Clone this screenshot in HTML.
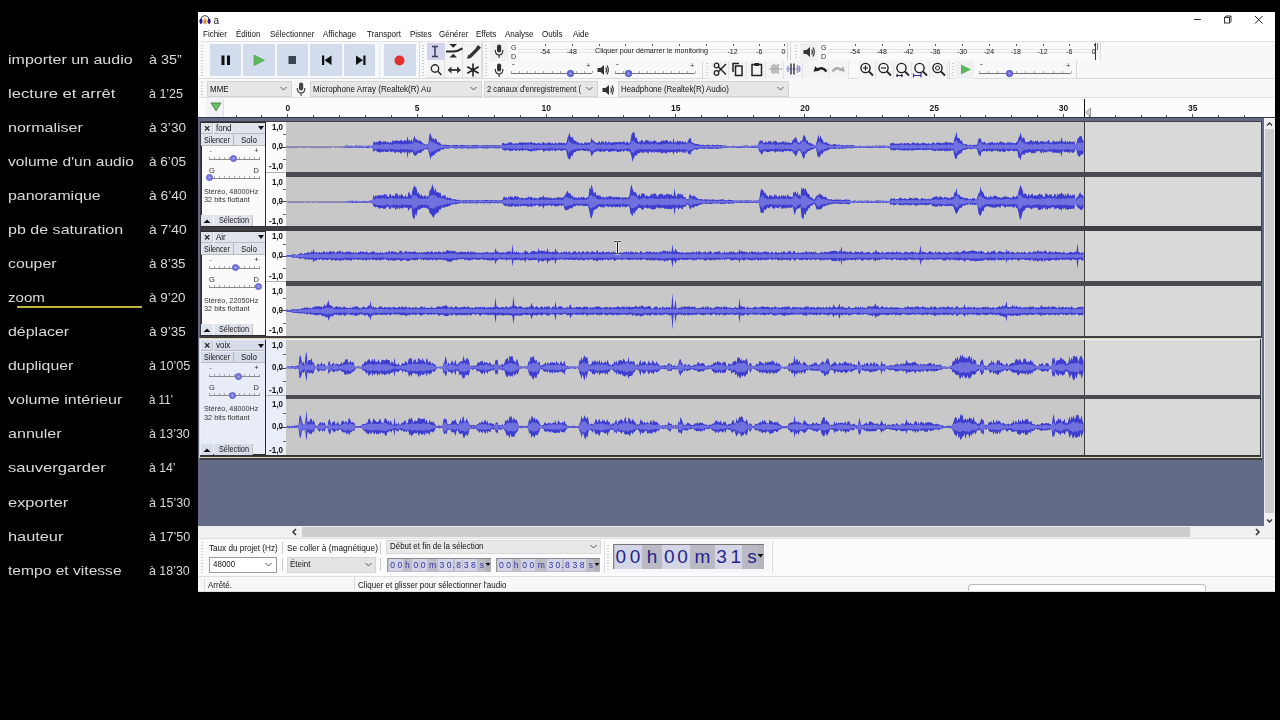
<!DOCTYPE html><html><head><meta charset="utf-8"><style>
*{box-sizing:border-box}
body{margin:0;background:#000;width:1280px;height:720px;overflow:hidden;position:relative;font-family:"Liberation Sans",sans-serif}
div{position:absolute}
.t{white-space:pre}
</style></head><body><div style="left:0;top:0;width:1280px;height:720px;filter:blur(0.35px)">
<div class="t" style="left:8.30px;top:51.64px;font-size:13.2px;line-height:15.18px;color:#dadada;transform:scaleX(1.214);transform-origin:0 0;">importer un audio</div>
<div class="t" style="left:149.20px;top:51.64px;font-size:13.2px;line-height:15.18px;color:#dadada;transform:scaleX(1.090);transform-origin:0 0;">à 35”</div>
<div class="t" style="left:8.30px;top:85.71px;font-size:13.2px;line-height:15.18px;color:#dadada;transform:scaleX(1.262);transform-origin:0 0;">lecture et arrêt</div>
<div class="t" style="left:149.20px;top:85.71px;font-size:13.2px;line-height:15.18px;color:#dadada;transform:scaleX(0.945);transform-origin:0 0;">à 1’25</div>
<div class="t" style="left:8.30px;top:119.78px;font-size:13.2px;line-height:15.18px;color:#dadada;transform:scaleX(1.216);transform-origin:0 0;">normaliser</div>
<div class="t" style="left:149.20px;top:119.78px;font-size:13.2px;line-height:15.18px;color:#dadada;transform:scaleX(1.029);transform-origin:0 0;">à 3’30</div>
<div class="t" style="left:8.30px;top:153.85px;font-size:13.2px;line-height:15.18px;color:#dadada;transform:scaleX(1.180);transform-origin:0 0;">volume d'un audio</div>
<div class="t" style="left:149.20px;top:153.85px;font-size:13.2px;line-height:15.18px;color:#dadada;transform:scaleX(1.029);transform-origin:0 0;">à 6’05</div>
<div class="t" style="left:8.30px;top:187.92px;font-size:13.2px;line-height:15.18px;color:#dadada;transform:scaleX(1.203);transform-origin:0 0;">panoramique</div>
<div class="t" style="left:149.20px;top:187.92px;font-size:13.2px;line-height:15.18px;color:#dadada;transform:scaleX(1.048);transform-origin:0 0;">à 6’40</div>
<div class="t" style="left:8.30px;top:221.99px;font-size:13.2px;line-height:15.18px;color:#dadada;transform:scaleX(1.217);transform-origin:0 0;">pb de saturation</div>
<div class="t" style="left:149.20px;top:221.99px;font-size:13.2px;line-height:15.18px;color:#dadada;transform:scaleX(1.048);transform-origin:0 0;">à 7’40</div>
<div class="t" style="left:8.30px;top:256.06px;font-size:13.2px;line-height:15.18px;color:#dadada;transform:scaleX(1.204);transform-origin:0 0;">couper</div>
<div class="t" style="left:149.20px;top:256.06px;font-size:13.2px;line-height:15.18px;color:#dadada;transform:scaleX(1.018);transform-origin:0 0;">à 8’35</div>
<div class="t" style="left:8.30px;top:290.13px;font-size:13.2px;line-height:15.18px;color:#dadada;transform:scaleX(1.143);transform-origin:0 0;">zoom</div>
<div class="t" style="left:149.20px;top:290.13px;font-size:13.2px;line-height:15.18px;color:#dadada;transform:scaleX(1.018);transform-origin:0 0;">à 9’20</div>
<div class="t" style="left:8.30px;top:324.20px;font-size:13.2px;line-height:15.18px;color:#dadada;transform:scaleX(1.209);transform-origin:0 0;">déplacer</div>
<div class="t" style="left:149.20px;top:324.20px;font-size:13.2px;line-height:15.18px;color:#dadada;transform:scaleX(1.023);transform-origin:0 0;">à 9’35</div>
<div class="t" style="left:8.30px;top:358.27px;font-size:13.2px;line-height:15.18px;color:#dadada;transform:scaleX(1.204);transform-origin:0 0;">dupliquer</div>
<div class="t" style="left:149.20px;top:358.27px;font-size:13.2px;line-height:15.18px;color:#dadada;transform:scaleX(0.956);transform-origin:0 0;">à 10’05</div>
<div class="t" style="left:8.30px;top:392.34px;font-size:13.2px;line-height:15.18px;color:#dadada;transform:scaleX(1.218);transform-origin:0 0;">volume intérieur</div>
<div class="t" style="left:149.20px;top:392.34px;font-size:13.2px;line-height:15.18px;color:#dadada;transform:scaleX(0.875);transform-origin:0 0;">à 11’</div>
<div class="t" style="left:8.30px;top:426.41px;font-size:13.2px;line-height:15.18px;color:#dadada;transform:scaleX(1.219);transform-origin:0 0;">annuler</div>
<div class="t" style="left:149.20px;top:426.41px;font-size:13.2px;line-height:15.18px;color:#dadada;transform:scaleX(0.942);transform-origin:0 0;">à 13’30</div>
<div class="t" style="left:8.30px;top:460.48px;font-size:13.2px;line-height:15.18px;color:#dadada;transform:scaleX(1.259);transform-origin:0 0;">sauvergarder</div>
<div class="t" style="left:149.20px;top:460.48px;font-size:13.2px;line-height:15.18px;color:#dadada;transform:scaleX(0.926);transform-origin:0 0;">à 14’</div>
<div class="t" style="left:8.30px;top:494.55px;font-size:13.2px;line-height:15.18px;color:#dadada;transform:scaleX(1.247);transform-origin:0 0;">exporter</div>
<div class="t" style="left:149.20px;top:494.55px;font-size:13.2px;line-height:15.18px;color:#dadada;transform:scaleX(0.954);transform-origin:0 0;">à 15’30</div>
<div class="t" style="left:8.30px;top:528.62px;font-size:13.2px;line-height:15.18px;color:#dadada;transform:scaleX(1.237);transform-origin:0 0;">hauteur</div>
<div class="t" style="left:149.20px;top:528.62px;font-size:13.2px;line-height:15.18px;color:#dadada;transform:scaleX(0.954);transform-origin:0 0;">à 17’50</div>
<div class="t" style="left:8.30px;top:562.69px;font-size:13.2px;line-height:15.18px;color:#dadada;transform:scaleX(1.183);transform-origin:0 0;">tempo et vitesse</div>
<div class="t" style="left:149.20px;top:562.69px;font-size:13.2px;line-height:15.18px;color:#dadada;transform:scaleX(0.942);transform-origin:0 0;">à 18’30</div>
<div style="left:17px;top:306px;width:125px;height:2px;background:#bdb63a"></div>
<div style="left:198px;top:12px;width:1077px;height:580px;background:#f0f0f0"></div>
<div style="left:198px;top:12px;width:1077px;height:16px;background:#ffffff"></div>
<svg style="position:absolute;left:199px;top:14px;" width="12" height="11" viewBox="0 0 12 11"><defs><radialGradient id="ig" cx="50%" cy="60%" r="55%"><stop offset="0" stop-color="#c87a28"/><stop offset="0.6" stop-color="#e8b070"/><stop offset="1" stop-color="#fff0e0"/></radialGradient></defs><path d="M1.8 5.5 Q2.5 1.6 6 1.6 Q9.5 1.6 10.2 5.5" fill="none" stroke="#3a3a4a" stroke-width="1"/><ellipse cx="6" cy="7" rx="2.4" ry="3.6" fill="url(#ig)"/><ellipse cx="1.9" cy="7.3" rx="1.5" ry="2.9" fill="#2a1890"/><ellipse cx="10.1" cy="7.3" rx="1.5" ry="2.9" fill="#2a1890"/></svg>
<div class="t" style="left:213.60px;top:14.79px;font-size:10px;line-height:11.50px;color:#222;">a</div>
<div style="left:1193.7px;top:19px;width:7.5px;height:1px;background:#333"></div>
<svg style="position:absolute;left:1222px;top:14px;" width="10" height="10" viewBox="0 0 10 10"><rect x="2.5" y="3.5" width="5" height="5.5" fill="none" stroke="#333" stroke-width="1"/><path d="M2.5 3.5 L4 2 H9 V7.5 L7.5 9 M7.5 3.5 L9 2" fill="none" stroke="#333" stroke-width="1"/></svg>
<svg style="position:absolute;left:1253px;top:14px;" width="11" height="11" viewBox="0 0 11 11"><path d="M2 2 L9.5 9.5 M9.5 2 L2 9.5" stroke="#222" stroke-width="1"/></svg>
<div style="left:198px;top:28px;width:1077px;height:14px;background:#ffffff"></div>
<div class="t" style="left:203.00px;top:29.58px;font-size:8.6px;line-height:9.89px;color:#111;transform:scaleX(0.930);transform-origin:0 0;">Fichier</div>
<div class="t" style="left:235.50px;top:29.58px;font-size:8.6px;line-height:9.89px;color:#111;transform:scaleX(0.930);transform-origin:0 0;">Édition</div>
<div class="t" style="left:270.00px;top:29.58px;font-size:8.6px;line-height:9.89px;color:#111;transform:scaleX(0.930);transform-origin:0 0;">Sélectionner</div>
<div class="t" style="left:323.30px;top:29.58px;font-size:8.6px;line-height:9.89px;color:#111;transform:scaleX(0.930);transform-origin:0 0;">Affichage</div>
<div class="t" style="left:367.00px;top:29.58px;font-size:8.6px;line-height:9.89px;color:#111;transform:scaleX(0.930);transform-origin:0 0;">Transport</div>
<div class="t" style="left:409.50px;top:29.58px;font-size:8.6px;line-height:9.89px;color:#111;transform:scaleX(0.930);transform-origin:0 0;">Pistes</div>
<div class="t" style="left:439.00px;top:29.58px;font-size:8.6px;line-height:9.89px;color:#111;transform:scaleX(0.930);transform-origin:0 0;">Générer</div>
<div class="t" style="left:476.00px;top:29.58px;font-size:8.6px;line-height:9.89px;color:#111;transform:scaleX(0.930);transform-origin:0 0;">Effets</div>
<div class="t" style="left:505.00px;top:29.58px;font-size:8.6px;line-height:9.89px;color:#111;transform:scaleX(0.930);transform-origin:0 0;">Analyse</div>
<div class="t" style="left:542.00px;top:29.58px;font-size:8.6px;line-height:9.89px;color:#111;transform:scaleX(0.930);transform-origin:0 0;">Outils</div>
<div class="t" style="left:572.50px;top:29.58px;font-size:8.6px;line-height:9.89px;color:#111;transform:scaleX(0.930);transform-origin:0 0;">Aide</div>
<div style="left:198px;top:41px;width:1077px;height:57px;background:#f7f8f9;border-top:1px solid #e2e2e2"></div>
<div style="left:198px;top:78px;width:1077px;height:1px;background:#dcdcdc"></div>
<div style="left:198px;top:97px;width:1077px;height:1px;background:#e0e0e0"></div>
<svg style="position:absolute;left:200px;top:44px;" width="4" height="33" viewBox="0 0 4 33"><rect x="1" y="1" width="2" height="1" fill="#cdcdcd"/><rect x="1" y="4" width="2" height="1" fill="#cdcdcd"/><rect x="1" y="7" width="2" height="1" fill="#cdcdcd"/><rect x="1" y="10" width="2" height="1" fill="#cdcdcd"/><rect x="1" y="13" width="2" height="1" fill="#cdcdcd"/><rect x="1" y="16" width="2" height="1" fill="#cdcdcd"/><rect x="1" y="19" width="2" height="1" fill="#cdcdcd"/><rect x="1" y="22" width="2" height="1" fill="#cdcdcd"/><rect x="1" y="25" width="2" height="1" fill="#cdcdcd"/><rect x="1" y="28" width="2" height="1" fill="#cdcdcd"/><rect x="1" y="31" width="2" height="1" fill="#cdcdcd"/></svg>
<div style="left:209.7px;top:44.3px;width:31.7px;height:32px;background:#d3dcec;border-radius:1px"></div>
<div style="left:243.2px;top:44.3px;width:31.7px;height:32px;background:#d3dcec;border-radius:1px"></div>
<div style="left:276.7px;top:44.3px;width:31.7px;height:32px;background:#d3dcec;border-radius:1px"></div>
<div style="left:310.2px;top:44.3px;width:31.7px;height:32px;background:#d3dcec;border-radius:1px"></div>
<div style="left:343.7px;top:44.3px;width:31.7px;height:32px;background:#d3dcec;border-radius:1px"></div>
<div style="left:384px;top:44.3px;width:32px;height:32px;background:#d3dcec"></div>
<svg style="position:absolute;left:209px;top:44px;" width="33" height="32" viewBox="0 0 33 32"><rect x="12.5" y="11.5" width="3" height="9.5" fill="#101010"/><rect x="18" y="11.5" width="3" height="9.5" fill="#101010"/></svg>
<svg style="position:absolute;left:243px;top:44px;" width="33" height="32" viewBox="0 0 33 32"><path d="M11 11 L21.5 16.3 L11 21.6 Z" fill="#5cb85c" stroke="#4a9a4a" stroke-width="0.6"/></svg>
<svg style="position:absolute;left:276px;top:44px;" width="33" height="32" viewBox="0 0 33 32"><rect x="12.5" y="12" width="7.5" height="8" fill="#3b4455"/></svg>
<svg style="position:absolute;left:310px;top:44px;" width="33" height="32" viewBox="0 0 33 32"><rect x="12" y="11.5" width="2.2" height="9.5" fill="#101010"/><path d="M21.5 11.5 L14.5 16.25 L21.5 21 Z" fill="#101010"/></svg>
<svg style="position:absolute;left:343.7px;top:44px;" width="33" height="32" viewBox="0 0 33 32"><rect x="19.3" y="11.5" width="2.2" height="9.5" fill="#101010"/><path d="M12 11.5 L19 16.25 L12 21 Z" fill="#101010"/></svg>
<svg style="position:absolute;left:384px;top:44px;" width="32" height="32" viewBox="0 0 32 32"><circle cx="15.5" cy="16.5" r="5" fill="#e0332f"/></svg>
<div style="left:379px;top:43px;width:1px;height:35px;background:#e6e6e6"></div>
<div style="left:419px;top:42px;width:1px;height:36px;background:#d8d8d8"></div>
<svg style="position:absolute;left:421px;top:44px;" width="4" height="33" viewBox="0 0 4 33"><rect x="1" y="1" width="2" height="1" fill="#cdcdcd"/><rect x="1" y="4" width="2" height="1" fill="#cdcdcd"/><rect x="1" y="7" width="2" height="1" fill="#cdcdcd"/><rect x="1" y="10" width="2" height="1" fill="#cdcdcd"/><rect x="1" y="13" width="2" height="1" fill="#cdcdcd"/><rect x="1" y="16" width="2" height="1" fill="#cdcdcd"/><rect x="1" y="19" width="2" height="1" fill="#cdcdcd"/><rect x="1" y="22" width="2" height="1" fill="#cdcdcd"/><rect x="1" y="25" width="2" height="1" fill="#cdcdcd"/><rect x="1" y="28" width="2" height="1" fill="#cdcdcd"/><rect x="1" y="31" width="2" height="1" fill="#cdcdcd"/></svg>
<div style="left:426.8px;top:42.5px;width:17.8px;height:17.5px;background:#d2d4ec"></div>
<div style="left:444.6px;top:42.5px;width:18.6px;height:18.2px;background:#f3f4f6;border-right:1px solid #e0e0e0;border-bottom:1px solid #e4e4e4"></div>
<div style="left:463.3px;top:42.5px;width:18.6px;height:18.2px;background:#f3f4f6;border-right:1px solid #e0e0e0;border-bottom:1px solid #e4e4e4"></div>
<div style="left:426.8px;top:60px;width:18.6px;height:18.2px;background:#f3f4f6;border-right:1px solid #e0e0e0;border-bottom:1px solid #e4e4e4"></div>
<div style="left:444.6px;top:60px;width:18.6px;height:18.2px;background:#f3f4f6;border-right:1px solid #e0e0e0;border-bottom:1px solid #e4e4e4"></div>
<div style="left:463.3px;top:60px;width:18.6px;height:18.2px;background:#f3f4f6;border-right:1px solid #e0e0e0;border-bottom:1px solid #e4e4e4"></div>
<svg style="position:absolute;left:427px;top:42px;" width="18" height="18" viewBox="0 0 18 18"><path d="M5 4.5 H11 M8 4.5 V14.5 M5 14.5 H11" stroke="#3c3c5e" stroke-width="1.5" fill="none"/></svg>
<svg style="position:absolute;left:445px;top:42px;" width="19" height="18" viewBox="0 0 19 18"><path d="M4.5 2 H12 L8.25 5.8 Z M4.5 15.5 H12 L8.25 11.7 Z" fill="#2a2a2a"/><path d="M1 9.5 H8 Q12.5 9.5 17.5 6.3" stroke="#2a2a2a" stroke-width="2" fill="none"/></svg>
<svg style="position:absolute;left:463px;top:42px;" width="19" height="18" viewBox="0 0 19 18"><path d="M7 14.5 L15 6.5" stroke="#333" stroke-width="3.2"/><path d="M4 17 L5.2 12.6 L8.4 15.8 Z" fill="#333"/><path d="M14.2 4.2 L16.8 6.8" stroke="#333" stroke-width="3.2"/></svg>
<svg style="position:absolute;left:427px;top:60px;" width="18" height="18" viewBox="0 0 18 18"><circle cx="8" cy="8.5" r="3.7" fill="none" stroke="#2a2a2a" stroke-width="1.4"/><path d="M10.7 11.2 L14.5 15" stroke="#2a2a2a" stroke-width="1.6"/></svg>
<svg style="position:absolute;left:445px;top:60px;" width="19" height="18" viewBox="0 0 19 18"><path d="M4.5 10 H14" stroke="#333" stroke-width="1.8"/><path d="M2.5 10 L6.5 6.5 V13.5 Z M16 10 L12 6.5 V13.5 Z" fill="#333"/></svg>
<svg style="position:absolute;left:463px;top:60px;" width="19" height="18" viewBox="0 0 19 18"><path d="M10 3.5 V16.5 M4.3 6.8 L15.7 13.2 M4.3 13.2 L15.7 6.8" stroke="#222" stroke-width="1.6"/></svg>
<div style="left:482px;top:42px;width:1px;height:36px;background:#d8d8d8"></div>
<svg style="position:absolute;left:484px;top:44px;" width="4" height="15" viewBox="0 0 4 15"><rect x="1" y="1" width="2" height="1" fill="#cdcdcd"/><rect x="1" y="4" width="2" height="1" fill="#cdcdcd"/><rect x="1" y="7" width="2" height="1" fill="#cdcdcd"/><rect x="1" y="10" width="2" height="1" fill="#cdcdcd"/><rect x="1" y="13" width="2" height="1" fill="#cdcdcd"/></svg>
<svg style="position:absolute;left:484px;top:62px;" width="4" height="15" viewBox="0 0 4 15"><rect x="1" y="1" width="2" height="1" fill="#cdcdcd"/><rect x="1" y="4" width="2" height="1" fill="#cdcdcd"/><rect x="1" y="7" width="2" height="1" fill="#cdcdcd"/><rect x="1" y="10" width="2" height="1" fill="#cdcdcd"/><rect x="1" y="13" width="2" height="1" fill="#cdcdcd"/></svg>
<div style="left:490px;top:42.5px;width:18px;height:18px;background:#eef0f2"></div>
<svg style="position:absolute;left:493px;top:43px;" width="12" height="16" viewBox="0 0 12 16"><rect x="4" y="1.5" width="4.2" height="8" rx="2.1" fill="#333"/><path d="M2.3 7 Q2.3 12 6.1 12 Q9.9 12 9.9 7" fill="none" stroke="#333" stroke-width="1.2"/><path d="M6.1 12 V15" stroke="#333" stroke-width="1.2"/></svg>
<div style="left:508px;top:42.5px;width:280px;height:18px;background:#f7f8f9"></div>
<div class="t" style="left:511.00px;top:43.55px;font-size:7px;line-height:8.05px;color:#333;">G</div>
<div class="t" style="left:511.00px;top:52.55px;font-size:7px;line-height:8.05px;color:#333;">D</div>
<div style="left:518px;top:43px;width:270px;height:7px;background:#fbfbfb;border-bottom:1px solid #e6e6e6"></div>
<div style="left:518px;top:52px;width:270px;height:7px;background:#fbfbfb;border-top:1px solid #e6e6e6"></div>
<div style="left:545px;top:44px;width:1px;height:2px;background:#555"></div>
<div class="t" style="left:539.94px;top:48.15px;font-size:7px;line-height:8.05px;color:#222;">-54</div>
<div style="left:572px;top:44px;width:1px;height:2px;background:#555"></div>
<div class="t" style="left:566.74px;top:48.15px;font-size:7px;line-height:8.05px;color:#222;">-48</div>
<div style="left:599px;top:44px;width:1px;height:2px;background:#555"></div>
<div style="left:625px;top:44px;width:1px;height:2px;background:#555"></div>
<div style="left:652px;top:44px;width:1px;height:2px;background:#555"></div>
<div style="left:679px;top:44px;width:1px;height:2px;background:#555"></div>
<div style="left:706px;top:44px;width:1px;height:2px;background:#555"></div>
<div style="left:733px;top:44px;width:1px;height:2px;background:#555"></div>
<div class="t" style="left:727.54px;top:48.15px;font-size:7px;line-height:8.05px;color:#222;">-12</div>
<div style="left:759px;top:44px;width:1px;height:2px;background:#555"></div>
<div class="t" style="left:756.29px;top:48.15px;font-size:7px;line-height:8.05px;color:#222;">-6</div>
<div style="left:784px;top:44px;width:1px;height:2px;background:#555"></div>
<div class="t" style="left:781.55px;top:48.15px;font-size:7px;line-height:8.05px;color:#222;">0</div>
<div class="t" style="left:595.00px;top:47.00px;font-size:7.6px;line-height:8.74px;color:#222;transform:scaleX(0.942);transform-origin:0 0;">Cliquer pour démarrer le monitoring</div>
<div style="left:787px;top:43px;width:1px;height:17px;background:#ccc"></div>
<div style="left:790px;top:42px;width:1px;height:18px;background:#d8d8d8"></div>
<svg style="position:absolute;left:794px;top:44px;" width="4" height="15" viewBox="0 0 4 15"><rect x="1" y="1" width="2" height="1" fill="#cdcdcd"/><rect x="1" y="4" width="2" height="1" fill="#cdcdcd"/><rect x="1" y="7" width="2" height="1" fill="#cdcdcd"/><rect x="1" y="10" width="2" height="1" fill="#cdcdcd"/><rect x="1" y="13" width="2" height="1" fill="#cdcdcd"/></svg>
<div style="left:800px;top:42.5px;width:18px;height:18px;background:#eef0f2"></div>
<svg style="position:absolute;left:802px;top:45px;" width="14" height="14" viewBox="0 0 14 14"><path d="M1.5 5 H4.5 L8 2 V12 L4.5 9 H1.5 Z" fill="#333"/><path d="M9.7 4.5 Q11.2 7 9.7 9.5 M11 2.5 Q13.6 7 11 11.5" fill="none" stroke="#333" stroke-width="1.2"/></svg>
<div style="left:818px;top:42.5px;width:457px;height:18px;background:#f7f8f9"></div>
<div class="t" style="left:821.00px;top:43.55px;font-size:7px;line-height:8.05px;color:#333;">G</div>
<div class="t" style="left:821.00px;top:52.55px;font-size:7px;line-height:8.05px;color:#333;">D</div>
<div style="left:828px;top:43px;width:270px;height:7px;background:#fbfbfb;border-bottom:1px solid #e6e6e6"></div>
<div style="left:828px;top:52px;width:270px;height:7px;background:#fbfbfb;border-top:1px solid #e6e6e6"></div>
<div style="left:855px;top:44px;width:1px;height:2px;background:#555"></div>
<div class="t" style="left:849.94px;top:48.15px;font-size:7px;line-height:8.05px;color:#222;">-54</div>
<div style="left:882px;top:44px;width:1px;height:2px;background:#555"></div>
<div class="t" style="left:876.74px;top:48.15px;font-size:7px;line-height:8.05px;color:#222;">-48</div>
<div style="left:909px;top:44px;width:1px;height:2px;background:#555"></div>
<div class="t" style="left:903.54px;top:48.15px;font-size:7px;line-height:8.05px;color:#222;">-42</div>
<div style="left:935px;top:44px;width:1px;height:2px;background:#555"></div>
<div class="t" style="left:930.34px;top:48.15px;font-size:7px;line-height:8.05px;color:#222;">-36</div>
<div style="left:962px;top:44px;width:1px;height:2px;background:#555"></div>
<div class="t" style="left:957.14px;top:48.15px;font-size:7px;line-height:8.05px;color:#222;">-30</div>
<div style="left:989px;top:44px;width:1px;height:2px;background:#555"></div>
<div class="t" style="left:983.94px;top:48.15px;font-size:7px;line-height:8.05px;color:#222;">-24</div>
<div style="left:1016px;top:44px;width:1px;height:2px;background:#555"></div>
<div class="t" style="left:1010.74px;top:48.15px;font-size:7px;line-height:8.05px;color:#222;">-18</div>
<div style="left:1043px;top:44px;width:1px;height:2px;background:#555"></div>
<div class="t" style="left:1037.54px;top:48.15px;font-size:7px;line-height:8.05px;color:#222;">-12</div>
<div style="left:1069px;top:44px;width:1px;height:2px;background:#555"></div>
<div class="t" style="left:1066.29px;top:48.15px;font-size:7px;line-height:8.05px;color:#222;">-6</div>
<div style="left:1094px;top:44px;width:1px;height:2px;background:#555"></div>
<div class="t" style="left:1091.75px;top:48.15px;font-size:7px;line-height:8.05px;color:#222;">0</div>
<div style="left:1095px;top:43px;width:1px;height:17px;background:#333"></div>
<div style="left:1097px;top:43px;width:1px;height:7px;background:#e05050"></div>
<div style="left:1100px;top:42px;width:1px;height:18px;background:#ddd"></div>
<svg style="position:absolute;left:493px;top:62px;" width="12" height="16" viewBox="0 0 12 16"><rect x="4" y="1.5" width="4.2" height="8" rx="2.1" fill="#333"/><path d="M2.3 7 Q2.3 12 6.1 12 Q9.9 12 9.9 7" fill="none" stroke="#333" stroke-width="1.2"/><path d="M6.1 12 V15" stroke="#333" stroke-width="1.2"/></svg>
<div class="t" style="left:511.50px;top:60.08px;font-size:8.6px;line-height:9.89px;color:#333;transform:scaleX(0.930);transform-origin:0 0;">-</div>
<div class="t" style="left:586.00px;top:61.59px;font-size:7.5px;line-height:8.62px;color:#333;">+</div>
<div style="left:511px;top:73px;width:81px;height:1px;background:#777"></div>
<div style="left:511px;top:71px;width:1px;height:2px;background:#aaa"></div>
<div style="left:519px;top:71px;width:1px;height:2px;background:#aaa"></div>
<div style="left:527px;top:71px;width:1px;height:2px;background:#aaa"></div>
<div style="left:535px;top:71px;width:1px;height:2px;background:#aaa"></div>
<div style="left:543px;top:71px;width:1px;height:2px;background:#aaa"></div>
<div style="left:552px;top:71px;width:1px;height:2px;background:#aaa"></div>
<div style="left:560px;top:71px;width:1px;height:2px;background:#aaa"></div>
<div style="left:568px;top:71px;width:1px;height:2px;background:#aaa"></div>
<div style="left:576px;top:71px;width:1px;height:2px;background:#aaa"></div>
<div style="left:584px;top:71px;width:1px;height:2px;background:#aaa"></div>
<div style="left:592px;top:71px;width:1px;height:2px;background:#aaa"></div>
<svg style="position:absolute;left:565.5px;top:69px;" width="9" height="9" viewBox="0 0 9 9"><circle cx="4.5" cy="4.5" r="3.2" fill="#6a6ae0" stroke="#4b4bc0" stroke-width="0.8"/><circle cx="4.5" cy="4.5" r="1" fill="#b0b0f0"/></svg>
<svg style="position:absolute;left:596px;top:63px;" width="14" height="14" viewBox="0 0 14 14"><path d="M1.5 5 H4.5 L8 2 V12 L4.5 9 H1.5 Z" fill="#333"/><path d="M9.7 4.5 Q11.2 7 9.7 9.5 M11 2.5 Q13.6 7 11 11.5" fill="none" stroke="#333" stroke-width="1.2"/></svg>
<div class="t" style="left:615.50px;top:60.08px;font-size:8.6px;line-height:9.89px;color:#333;transform:scaleX(0.930);transform-origin:0 0;">-</div>
<div class="t" style="left:690.00px;top:61.59px;font-size:7.5px;line-height:8.62px;color:#333;">+</div>
<div style="left:615px;top:73px;width:80px;height:1px;background:#777"></div>
<div style="left:615px;top:71px;width:1px;height:2px;background:#aaa"></div>
<div style="left:623px;top:71px;width:1px;height:2px;background:#aaa"></div>
<div style="left:631px;top:71px;width:1px;height:2px;background:#aaa"></div>
<div style="left:639px;top:71px;width:1px;height:2px;background:#aaa"></div>
<div style="left:647px;top:71px;width:1px;height:2px;background:#aaa"></div>
<div style="left:655px;top:71px;width:1px;height:2px;background:#aaa"></div>
<div style="left:663px;top:71px;width:1px;height:2px;background:#aaa"></div>
<div style="left:671px;top:71px;width:1px;height:2px;background:#aaa"></div>
<div style="left:679px;top:71px;width:1px;height:2px;background:#aaa"></div>
<div style="left:687px;top:71px;width:1px;height:2px;background:#aaa"></div>
<div style="left:695px;top:71px;width:1px;height:2px;background:#aaa"></div>
<svg style="position:absolute;left:623.5px;top:69px;" width="9" height="9" viewBox="0 0 9 9"><circle cx="4.5" cy="4.5" r="3.2" fill="#6a6ae0" stroke="#4b4bc0" stroke-width="0.8"/><circle cx="4.5" cy="4.5" r="1" fill="#b0b0f0"/></svg>
<div style="left:702px;top:61px;width:1px;height:17px;background:#d8d8d8"></div>
<svg style="position:absolute;left:705px;top:62px;" width="4" height="15" viewBox="0 0 4 15"><rect x="1" y="1" width="2" height="1" fill="#cdcdcd"/><rect x="1" y="4" width="2" height="1" fill="#cdcdcd"/><rect x="1" y="7" width="2" height="1" fill="#cdcdcd"/><rect x="1" y="10" width="2" height="1" fill="#cdcdcd"/><rect x="1" y="13" width="2" height="1" fill="#cdcdcd"/></svg>
<div style="left:710px;top:60.5px;width:19.399999999999977px;height:18px;background:#f3f4f6;border-right:1px solid #e4e4e4"></div>
<div style="left:729.4px;top:60.5px;width:18.100000000000023px;height:18px;background:#f3f4f6;border-right:1px solid #e4e4e4"></div>
<div style="left:747.5px;top:60.5px;width:18.5px;height:18px;background:#f3f4f6;border-right:1px solid #e4e4e4"></div>
<div style="left:766px;top:60.5px;width:18.399999999999977px;height:18px;background:#f3f4f6;border-right:1px solid #e4e4e4"></div>
<div style="left:784.4px;top:60.5px;width:18.600000000000023px;height:18px;background:#f3f4f6;border-right:1px solid #e4e4e4"></div>
<div style="left:803px;top:60.5px;width:26.399999999999977px;height:18px;background:#f3f4f6;border-right:1px solid #e4e4e4"></div>
<div style="left:829.4px;top:60.5px;width:19.300000000000068px;height:18px;background:#f3f4f6;border-right:1px solid #e4e4e4"></div>
<div style="left:858px;top:60.5px;width:18px;height:18px;background:#f3f4f6;border-right:1px solid #e4e4e4"></div>
<div style="left:876px;top:60.5px;width:18px;height:18px;background:#f3f4f6;border-right:1px solid #e4e4e4"></div>
<div style="left:894px;top:60.5px;width:18px;height:18px;background:#f3f4f6;border-right:1px solid #e4e4e4"></div>
<div style="left:912px;top:60.5px;width:18px;height:18px;background:#f3f4f6;border-right:1px solid #e4e4e4"></div>
<div style="left:930px;top:60.5px;width:18px;height:18px;background:#f3f4f6;border-right:1px solid #e4e4e4"></div>
<svg style="position:absolute;left:710px;top:60px;" width="19" height="18" viewBox="0 0 19 18"><circle cx="6.5" cy="13" r="2.3" fill="none" stroke="#222" stroke-width="1.3"/><circle cx="6.5" cy="5.5" r="2.3" fill="none" stroke="#222" stroke-width="1.3"/><path d="M8.3 6.8 L16 14.5 M8.3 11.7 L16 4" stroke="#222" stroke-width="1.4"/></svg>
<svg style="position:absolute;left:729px;top:60px;" width="19" height="18" viewBox="0 0 19 18"><path d="M4 12 V3.5 H10" fill="none" stroke="#222" stroke-width="1.5"/><rect x="6.5" y="6" width="6.5" height="9.5" fill="none" stroke="#222" stroke-width="1.5"/></svg>
<svg style="position:absolute;left:747.5px;top:60px;" width="19" height="18" viewBox="0 0 19 18"><rect x="4" y="4.5" width="9.5" height="11" fill="none" stroke="#222" stroke-width="1.5"/><rect x="6.5" y="3" width="4.5" height="3" fill="#222"/></svg>
<svg style="position:absolute;left:766px;top:60px;" width="19" height="18" viewBox="0 0 19 18"><path d="M2.5 9 H16.5" stroke="#aaa" stroke-width="1"/><path d="M6 5 V13 M8 4 V14 M10 5 V13 M12 4 V14" stroke="#9a9a9a" stroke-width="1.2"/></svg>
<svg style="position:absolute;left:784.4px;top:60px;" width="19" height="18" viewBox="0 0 19 18"><path d="M2 9 H17" stroke="#9aa0d8" stroke-width="1"/><path d="M4 6 V12 M13.5 5 V13 M15.5 6 V12" stroke="#8890d8" stroke-width="1.4"/><path d="M7 3.5 V14.5 M10 3.5 V14.5" stroke="#222" stroke-width="1.3"/></svg>
<svg style="position:absolute;left:803px;top:60px;" width="27" height="18" viewBox="0 0 27 18"><path d="M13.5 10.5 Q18.5 5.5 23.5 11.5" fill="none" stroke="#222" stroke-width="2.4"/><path d="M10.5 11.8 L12.2 6.2 L16.6 10.6 Z" fill="#222"/></svg>
<svg style="position:absolute;left:829.4px;top:60px;" width="19" height="18" viewBox="0 0 19 18"><path d="M13 10.5 Q8 5.5 3.5 11.5" fill="none" stroke="#aaa" stroke-width="2.4"/><path d="M16 11.8 L14.3 6.2 L9.9 10.6 Z" fill="#aaa"/></svg>
<svg style="position:absolute;left:858px;top:60px;" width="18" height="18" viewBox="0 0 18 18"><circle cx="7.5" cy="8" r="4.6" fill="none" stroke="#222" stroke-width="1.4"/><path d="M10.8 11.3 L15 15.5" stroke="#222" stroke-width="1.8"/><path d="M5 8 H10 M7.5 5.5 V10.5" stroke="#222" stroke-width="1.2"/></svg>
<svg style="position:absolute;left:876px;top:60px;" width="18" height="18" viewBox="0 0 18 18"><circle cx="7.5" cy="8" r="4.6" fill="none" stroke="#222" stroke-width="1.4"/><path d="M10.8 11.3 L15 15.5" stroke="#222" stroke-width="1.8"/><path d="M5 8 H10" stroke="#222" stroke-width="1.2"/></svg>
<svg style="position:absolute;left:894px;top:60px;" width="18" height="18" viewBox="0 0 18 18"><circle cx="7.5" cy="8" r="4.6" fill="none" stroke="#222" stroke-width="1.4"/><path d="M10.8 11.3 L15 15.5" stroke="#222" stroke-width="1.8"/><path d="M2 15.5 H9 M2 15.5 L4 14 M2 15.5 L4 17 M9 15.5 L7 14 M9 15.5 L7 17" stroke="#335" stroke-width="1"/></svg>
<svg style="position:absolute;left:912px;top:60px;" width="18" height="18" viewBox="0 0 18 18"><circle cx="7.5" cy="8" r="4.6" fill="none" stroke="#222" stroke-width="1.4"/><path d="M10.8 11.3 L15 15.5" stroke="#222" stroke-width="1.8"/><path d="M1.5 15.5 H9 M1.5 13.5 V17.5 M9 13 L9 17.5" stroke="#3333aa" stroke-width="1.2"/></svg>
<svg style="position:absolute;left:930px;top:60px;" width="18" height="18" viewBox="0 0 18 18"><circle cx="7.5" cy="8" r="4.6" fill="none" stroke="#222" stroke-width="1.4"/><path d="M10.8 11.3 L15 15.5" stroke="#222" stroke-width="1.8"/><circle cx="7.5" cy="8" r="2" fill="none" stroke="#222" stroke-width="1"/></svg>
<div style="left:949px;top:61px;width:1px;height:17px;background:#d8d8d8"></div>
<svg style="position:absolute;left:951px;top:62px;" width="4" height="15" viewBox="0 0 4 15"><rect x="1" y="1" width="2" height="1" fill="#cdcdcd"/><rect x="1" y="4" width="2" height="1" fill="#cdcdcd"/><rect x="1" y="7" width="2" height="1" fill="#cdcdcd"/><rect x="1" y="10" width="2" height="1" fill="#cdcdcd"/><rect x="1" y="13" width="2" height="1" fill="#cdcdcd"/></svg>
<div style="left:955px;top:60.5px;width:19px;height:18px;background:#eef0f2"></div>
<svg style="position:absolute;left:955px;top:60px;" width="19" height="18" viewBox="0 0 19 18"><path d="M6 4.5 L16 9.5 L6 14.5 Z" fill="#5cb85c"/></svg>
<div class="t" style="left:979.50px;top:60.08px;font-size:8.6px;line-height:9.89px;color:#333;transform:scaleX(0.930);transform-origin:0 0;">-</div>
<div class="t" style="left:1066.00px;top:61.59px;font-size:7.5px;line-height:8.62px;color:#333;">+</div>
<div style="left:979px;top:73px;width:92px;height:1px;background:#777"></div>
<div style="left:979px;top:71px;width:1px;height:2px;background:#aaa"></div>
<div style="left:988px;top:71px;width:1px;height:2px;background:#aaa"></div>
<div style="left:997px;top:71px;width:1px;height:2px;background:#aaa"></div>
<div style="left:1007px;top:71px;width:1px;height:2px;background:#aaa"></div>
<div style="left:1016px;top:71px;width:1px;height:2px;background:#aaa"></div>
<div style="left:1025px;top:71px;width:1px;height:2px;background:#aaa"></div>
<div style="left:1034px;top:71px;width:1px;height:2px;background:#aaa"></div>
<div style="left:1043px;top:71px;width:1px;height:2px;background:#aaa"></div>
<div style="left:1053px;top:71px;width:1px;height:2px;background:#aaa"></div>
<div style="left:1062px;top:71px;width:1px;height:2px;background:#aaa"></div>
<div style="left:1071px;top:71px;width:1px;height:2px;background:#aaa"></div>
<svg style="position:absolute;left:1005.0px;top:69px;" width="9" height="9" viewBox="0 0 9 9"><circle cx="4.5" cy="4.5" r="3.2" fill="#6a6ae0" stroke="#4b4bc0" stroke-width="0.8"/><circle cx="4.5" cy="4.5" r="1" fill="#b0b0f0"/></svg>
<div style="left:1076px;top:61px;width:1px;height:17px;background:#d8d8d8"></div>
<svg style="position:absolute;left:200px;top:81px;" width="4" height="15" viewBox="0 0 4 15"><rect x="1" y="1" width="2" height="1" fill="#cdcdcd"/><rect x="1" y="4" width="2" height="1" fill="#cdcdcd"/><rect x="1" y="7" width="2" height="1" fill="#cdcdcd"/><rect x="1" y="10" width="2" height="1" fill="#cdcdcd"/><rect x="1" y="13" width="2" height="1" fill="#cdcdcd"/></svg>
<div style="left:207px;top:81px;width:84.5px;height:15.5px;background:#e6e6e6;border:1px solid #d4d4d4"></div>
<div class="t" style="left:210.00px;top:84.68px;font-size:8.6px;line-height:9.89px;color:#141414;transform:scaleX(0.930);transform-origin:0 0;">MME</div>
<svg style="position:absolute;left:278.5px;top:84px;" width="9" height="9" viewBox="0 0 9 9"><path d="M1.5 3 L4.5 6 L7.5 3" fill="none" stroke="#555" stroke-width="1"/></svg>
<svg style="position:absolute;left:295px;top:81px;" width="12" height="16" viewBox="0 0 12 16"><rect x="4" y="1.5" width="4.2" height="8" rx="2.1" fill="#444"/><path d="M2.3 7 Q2.3 12 6.1 12 Q9.9 12 9.9 7" fill="none" stroke="#444" stroke-width="1.2"/><path d="M6.1 12 V15" stroke="#444" stroke-width="1.2"/></svg>
<div style="left:310px;top:81px;width:172px;height:15.5px;background:#e6e6e6;border:1px solid #d4d4d4"></div>
<div class="t" style="left:313.00px;top:84.68px;font-size:8.6px;line-height:9.89px;color:#141414;transform:scaleX(0.935);transform-origin:0 0;">Microphone Array (Realtek(R) Au</div>
<svg style="position:absolute;left:469px;top:84px;" width="9" height="9" viewBox="0 0 9 9"><path d="M1.5 3 L4.5 6 L7.5 3" fill="none" stroke="#555" stroke-width="1"/></svg>
<div style="left:484.4px;top:81px;width:113.60000000000002px;height:15.5px;background:#e6e6e6;border:1px solid #d4d4d4"></div>
<div class="t" style="left:487.40px;top:84.68px;font-size:8.6px;line-height:9.89px;color:#141414;transform:scaleX(0.884);transform-origin:0 0;">2 canaux d'enregistrement (</div>
<svg style="position:absolute;left:585px;top:84px;" width="9" height="9" viewBox="0 0 9 9"><path d="M1.5 3 L4.5 6 L7.5 3" fill="none" stroke="#555" stroke-width="1"/></svg>
<svg style="position:absolute;left:601px;top:83px;" width="14" height="14" viewBox="0 0 14 14"><path d="M1.5 5 H4.5 L8 2 V12 L4.5 9 H1.5 Z" fill="#333"/><path d="M9.7 4.5 Q11.2 7 9.7 9.5 M11 2.5 Q13.6 7 11 11.5" fill="none" stroke="#333" stroke-width="1.2"/></svg>
<div style="left:617.5px;top:81px;width:171.5px;height:15.5px;background:#e6e6e6;border:1px solid #d4d4d4"></div>
<div class="t" style="left:620.50px;top:84.68px;font-size:8.6px;line-height:9.89px;color:#141414;transform:scaleX(0.918);transform-origin:0 0;">Headphone (Realtek(R) Audio)</div>
<svg style="position:absolute;left:776px;top:84px;" width="9" height="9" viewBox="0 0 9 9"><path d="M1.5 3 L4.5 6 L7.5 3" fill="none" stroke="#555" stroke-width="1"/></svg>
<div style="left:198px;top:98px;width:1077px;height:20px;background:#fbfcfd"></div>
<div style="left:205.5px;top:99px;width:18px;height:18.5px;background:#f2f3f5;border-right:1px solid #e0e0e0"></div>
<svg style="position:absolute;left:210px;top:102px;" width="12" height="10" viewBox="0 0 12 10"><path d="M1 1 H11 L6 9 Z" fill="#6cc06c" stroke="#3d7a3d" stroke-width="0.8"/></svg>
<div style="left:236px;top:115px;width:1px;height:3px;background:#555"></div>
<div style="left:261px;top:115px;width:1px;height:3px;background:#555"></div>
<div style="left:287px;top:114px;width:1px;height:4px;background:#555"></div>
<div class="t" style="left:285.39px;top:103.67px;font-size:8.5px;line-height:9.77px;color:#1a1a1a;font-weight:bold">0</div>
<div style="left:313px;top:115px;width:1px;height:3px;background:#555"></div>
<div style="left:339px;top:115px;width:1px;height:3px;background:#555"></div>
<div style="left:365px;top:115px;width:1px;height:3px;background:#555"></div>
<div style="left:391px;top:115px;width:1px;height:3px;background:#555"></div>
<div style="left:417px;top:114px;width:1px;height:4px;background:#555"></div>
<div class="t" style="left:414.69px;top:103.67px;font-size:8.5px;line-height:9.77px;color:#1a1a1a;font-weight:bold">5</div>
<div style="left:442px;top:115px;width:1px;height:3px;background:#555"></div>
<div style="left:468px;top:115px;width:1px;height:3px;background:#555"></div>
<div style="left:494px;top:115px;width:1px;height:3px;background:#555"></div>
<div style="left:520px;top:115px;width:1px;height:3px;background:#555"></div>
<div style="left:546px;top:114px;width:1px;height:4px;background:#555"></div>
<div class="t" style="left:541.62px;top:103.67px;font-size:8.5px;line-height:9.77px;color:#1a1a1a;font-weight:bold">10</div>
<div style="left:572px;top:115px;width:1px;height:3px;background:#555"></div>
<div style="left:598px;top:115px;width:1px;height:3px;background:#555"></div>
<div style="left:623px;top:115px;width:1px;height:3px;background:#555"></div>
<div style="left:649px;top:115px;width:1px;height:3px;background:#555"></div>
<div style="left:675px;top:114px;width:1px;height:4px;background:#555"></div>
<div class="t" style="left:670.92px;top:103.67px;font-size:8.5px;line-height:9.77px;color:#1a1a1a;font-weight:bold">15</div>
<div style="left:701px;top:115px;width:1px;height:3px;background:#555"></div>
<div style="left:727px;top:115px;width:1px;height:3px;background:#555"></div>
<div style="left:753px;top:115px;width:1px;height:3px;background:#555"></div>
<div style="left:779px;top:115px;width:1px;height:3px;background:#555"></div>
<div style="left:804px;top:114px;width:1px;height:4px;background:#555"></div>
<div class="t" style="left:800.22px;top:103.67px;font-size:8.5px;line-height:9.77px;color:#1a1a1a;font-weight:bold">20</div>
<div style="left:830px;top:115px;width:1px;height:3px;background:#555"></div>
<div style="left:856px;top:115px;width:1px;height:3px;background:#555"></div>
<div style="left:882px;top:115px;width:1px;height:3px;background:#555"></div>
<div style="left:908px;top:115px;width:1px;height:3px;background:#555"></div>
<div style="left:934px;top:114px;width:1px;height:4px;background:#555"></div>
<div class="t" style="left:929.52px;top:103.67px;font-size:8.5px;line-height:9.77px;color:#1a1a1a;font-weight:bold">25</div>
<div style="left:960px;top:115px;width:1px;height:3px;background:#555"></div>
<div style="left:985px;top:115px;width:1px;height:3px;background:#555"></div>
<div style="left:1011px;top:115px;width:1px;height:3px;background:#555"></div>
<div style="left:1037px;top:115px;width:1px;height:3px;background:#555"></div>
<div style="left:1063px;top:114px;width:1px;height:4px;background:#555"></div>
<div class="t" style="left:1058.82px;top:103.67px;font-size:8.5px;line-height:9.77px;color:#1a1a1a;font-weight:bold">30</div>
<div style="left:1089px;top:115px;width:1px;height:3px;background:#555"></div>
<div style="left:1115px;top:115px;width:1px;height:3px;background:#555"></div>
<div style="left:1141px;top:115px;width:1px;height:3px;background:#555"></div>
<div style="left:1166px;top:115px;width:1px;height:3px;background:#555"></div>
<div style="left:1192px;top:114px;width:1px;height:4px;background:#555"></div>
<div class="t" style="left:1188.12px;top:103.67px;font-size:8.5px;line-height:9.77px;color:#1a1a1a;font-weight:bold">35</div>
<div style="left:1218px;top:115px;width:1px;height:3px;background:#555"></div>
<div style="left:1244px;top:115px;width:1px;height:3px;background:#555"></div>
<div style="left:1084px;top:99px;width:1px;height:19px;background:#111"></div>
<svg style="position:absolute;left:1085px;top:107px;" width="7" height="10" viewBox="0 0 7 10"><path d="M5.5 1 L0.8 5.5 L5.5 9.5 Z" fill="#d0d0d0" stroke="#888" stroke-width="0.8"/></svg>
<div style="left:198px;top:117.2px;width:1077px;height:2.8px;background:#33364a"></div>
<div style="left:198px;top:118px;width:1066px;height:408px;background:#636a86"></div>
<div style="left:200px;top:121px;width:1061.5px;height:109.5px;background:#3e3e44"></div>
<div style="left:200.5px;top:121.5px;width:65px;height:105px;background:#fafafa;border:1px solid #2c2c2c"></div>
<div style="left:201px;top:122.5px;width:12.3px;height:11px;background:#dfe3ec;border-right:1px solid #c8c8c8;border-bottom:1px solid #bcbcbc"></div>
<svg style="position:absolute;left:201px;top:122.5px;" width="12" height="11" viewBox="0 0 12 11"><path d="M4 3.2 L8.3 7.5 M8.3 3.2 L4 7.5" stroke="#222" stroke-width="1.2"/></svg>
<div style="left:213.5px;top:122.5px;width:51.5px;height:11px;background:#dfe3ec;border-bottom:1px solid #bcbcbc"></div>
<div class="t" style="left:216.00px;top:123.68px;font-size:8.6px;line-height:9.89px;color:#141414;transform:scaleX(0.930);transform-origin:0 0;">fond</div>
<svg style="position:absolute;left:257px;top:125px;" width="8" height="6" viewBox="0 0 8 6"><path d="M1 1 H7 L4 5 Z" fill="#111"/></svg>
<div style="left:201px;top:134px;width:32.5px;height:11.5px;background:#dfe3ec;border-right:1px solid #b8b8b8;border-bottom:1px solid #bcbcbc"></div>
<div style="left:233.5px;top:134px;width:31.5px;height:11.5px;background:#dfe3ec;border-bottom:1px solid #bcbcbc"></div>
<div class="t" style="left:204.30px;top:135.58px;font-size:8.6px;line-height:9.89px;color:#141414;transform:scaleX(0.837);transform-origin:0 0;">Silencer</div>
<div class="t" style="left:241.49px;top:135.58px;font-size:8.6px;line-height:9.89px;color:#141414;transform:scaleX(0.930);transform-origin:0 0;">Solo</div>
<div class="t" style="left:209.50px;top:146.51px;font-size:6.5px;line-height:7.47px;color:#444;">-</div>
<div class="t" style="left:254.50px;top:146.55px;font-size:7px;line-height:8.05px;color:#222;">+</div>
<div style="left:209px;top:158.5px;width:50.5px;height:1px;background:#8a8a8a"></div>
<div style="left:209px;top:156.5px;width:1px;height:2px;background:#aaa"></div>
<div style="left:214px;top:156.5px;width:1px;height:2px;background:#aaa"></div>
<div style="left:219px;top:156.5px;width:1px;height:2px;background:#aaa"></div>
<div style="left:224px;top:156.5px;width:1px;height:2px;background:#aaa"></div>
<div style="left:229px;top:156.5px;width:1px;height:2px;background:#aaa"></div>
<div style="left:234px;top:156.5px;width:1px;height:2px;background:#aaa"></div>
<div style="left:239px;top:156.5px;width:1px;height:2px;background:#aaa"></div>
<div style="left:244px;top:156.5px;width:1px;height:2px;background:#aaa"></div>
<div style="left:249px;top:156.5px;width:1px;height:2px;background:#aaa"></div>
<div style="left:254px;top:156.5px;width:1px;height:2px;background:#aaa"></div>
<div style="left:259px;top:156.5px;width:1px;height:2px;background:#aaa"></div>
<svg style="position:absolute;left:229.1px;top:154.0px;" width="9" height="9" viewBox="0 0 9 9"><circle cx="4.5" cy="4.5" r="3.1" fill="#7474e2" stroke="#5555c8" stroke-width="0.7"/><circle cx="4.5" cy="4.5" r="1" fill="#b8b8f0"/></svg>
<div class="t" style="left:209.00px;top:166.59px;font-size:7.5px;line-height:8.62px;color:#333;">G</div>
<div class="t" style="left:253.50px;top:166.59px;font-size:7.5px;line-height:8.62px;color:#333;">D</div>
<div style="left:209px;top:177.5px;width:50.5px;height:1px;background:#8a8a8a"></div>
<div style="left:209px;top:175.5px;width:1px;height:2px;background:#aaa"></div>
<div style="left:214px;top:175.5px;width:1px;height:2px;background:#aaa"></div>
<div style="left:219px;top:175.5px;width:1px;height:2px;background:#aaa"></div>
<div style="left:224px;top:175.5px;width:1px;height:2px;background:#aaa"></div>
<div style="left:229px;top:175.5px;width:1px;height:2px;background:#aaa"></div>
<div style="left:234px;top:175.5px;width:1px;height:2px;background:#aaa"></div>
<div style="left:239px;top:175.5px;width:1px;height:2px;background:#aaa"></div>
<div style="left:244px;top:175.5px;width:1px;height:2px;background:#aaa"></div>
<div style="left:249px;top:175.5px;width:1px;height:2px;background:#aaa"></div>
<div style="left:254px;top:175.5px;width:1px;height:2px;background:#aaa"></div>
<div style="left:259px;top:175.5px;width:1px;height:2px;background:#aaa"></div>
<svg style="position:absolute;left:205.0px;top:173.0px;" width="9" height="9" viewBox="0 0 9 9"><circle cx="4.5" cy="4.5" r="3.1" fill="#7474e2" stroke="#5555c8" stroke-width="0.7"/><circle cx="4.5" cy="4.5" r="1" fill="#b8b8f0"/></svg>
<div class="t" style="left:203.60px;top:187.50px;font-size:7.6px;line-height:8.74px;color:#333;transform:scaleX(0.954);transform-origin:0 0;">Stéréo, 48000Hz</div>
<div class="t" style="left:203.60px;top:195.70px;font-size:7.6px;line-height:8.74px;color:#333;transform:scaleX(0.964);transform-origin:0 0;">32 bits flottant</div>
<div style="left:201px;top:214.5px;width:12px;height:11px;background:#dfe3ec"></div>
<svg style="position:absolute;left:201px;top:214.5px;" width="12" height="11" viewBox="0 0 12 11"><path d="M2.5 8 L6 4.5 L9.5 8 Z" fill="#111"/></svg>
<div style="left:214px;top:214.5px;width:39px;height:11px;background:#dfe3ec;border-right:1px solid #c4c4c4"></div>
<div class="t" style="left:218.50px;top:215.88px;font-size:8.6px;line-height:9.89px;color:#141414;transform:scaleX(0.848);transform-origin:0 0;">Sélection</div>
<div style="left:265.5px;top:122px;width:20.5px;height:104px;background:#fbfbfb"></div>
<div class="t" style="left:272.00px;top:123.47px;font-size:8.5px;line-height:9.77px;color:#111;transform:scaleX(0.931);transform-origin:0 0;font-weight:bold">1,0</div>
<div class="t" style="left:272.00px;top:142.12px;font-size:8.5px;line-height:9.77px;color:#111;transform:scaleX(0.931);transform-origin:0 0;font-weight:bold">0,0</div>
<div class="t" style="left:269.00px;top:162.17px;font-size:8.5px;line-height:9.77px;color:#111;transform:scaleX(0.956);transform-origin:0 0;font-weight:bold">-1,0</div>
<div style="left:279px;top:147px;width:7px;height:1px;background:#444"></div>
<div style="left:283px;top:134px;width:3px;height:1px;background:#666"></div>
<div style="left:283px;top:159px;width:3px;height:1px;background:#666"></div>
<div class="t" style="left:272.00px;top:177.97px;font-size:8.5px;line-height:9.77px;color:#111;transform:scaleX(0.931);transform-origin:0 0;font-weight:bold">1,0</div>
<div class="t" style="left:272.00px;top:196.62px;font-size:8.5px;line-height:9.77px;color:#111;transform:scaleX(0.931);transform-origin:0 0;font-weight:bold">0,0</div>
<div class="t" style="left:269.00px;top:216.67px;font-size:8.5px;line-height:9.77px;color:#111;transform:scaleX(0.956);transform-origin:0 0;font-weight:bold">-1,0</div>
<div style="left:279px;top:201px;width:7px;height:1px;background:#444"></div>
<div style="left:283px;top:189px;width:3px;height:1px;background:#666"></div>
<div style="left:283px;top:214px;width:3px;height:1px;background:#666"></div>
<div style="left:265.5px;top:171.5px;width:20.5px;height:1px;background:#b0b0b0"></div>
<div style="left:286px;top:122px;width:975px;height:49.5px;background:#d9d9d9"></div>
<div style="left:286px;top:122px;width:798.5px;height:49.5px;background:#c8c8c8"></div>
<div style="left:1084px;top:122px;width:1px;height:49.5px;background:#404040"></div>
<svg style="position:absolute;left:0px;top:122px;left:0" width="1085" height="49.5" viewBox="0 0 1085 49.5"><g transform="scale(.5)"><path d="M573 48l2 0 2 0 2 0 2 0 2 0 2 0 2 0 2 0 2 0 2 0 2 0 2 0 2 0 2 0 2 0 2 0 2 0 2 0 2 0 2 0 2 0 2 0 2 0 2 0 2 0 2 0 2 0 2 0 2 0 2 0 2 0 2 0 2 0 2 0 2 0 2 0 2 0 2 0 2 0 2 0 2 0 2 0 2 0 2 0 2 0 2 0 2 0 2 0 2 0 2 0 2 0 2 0 2 0 2 0 2 0 2 0 2 0 2 0 2-1 2 0 2 0 2 0 2 1 2 0 2-1 2 1 2 0 2 0 2-1 2 0 2 0 2 1 2-1 2 0 2 1 2-1 2 1 2 0 2 0 2-1 2 1 2-1 2 0 2 1 2 0 2-1 2-7 2-1 2 3 2-3 2 2 2-2 2-1 2-1 2 3 2 1 2-3 2 1 2-1 2 4 2-4 2 3 2 1 2-3 2 3 2-5 2 0 2 2 2-2 2-1 2 2 2 0 2 0 2-2 2 0 2 2 2 1 2-3 2 1 2 1 2-10 2 10 2-3 2 4 2-5 2 7 2-9 2-4 2 6 2 1 2 0 2 4 2-3 2 2 2 1 2 3 2 1 2 1 2 1 2 0 2 0 2-3 2-17 2-3 2 8 2 4 2-3 2 6 2-5 2 3 2 5 2 1 2 0 2 2 2 2 2 1 2-1 2 1 2-1 2 1 2 0 2 0 2 0 2 1 2 0 2-1 2 0 2 0 2 0 2 0 2 0 2 1 2 0 2-1 2 0 2 0 2 0 2 0 2 1 2 0 2-1 2 1 2 0 2 0 2 0 2-1 2 0 2 0 2 0 2 0 2 0 2 1 2 0 2 0 2 0 2 0 2-1 2 1 2-1 2 1 2-1 2 1 2-1 2 1 2-1 2 1 2-1 2 1 2-1 2 1 2-1 2 1 2-1 2 1 2 1 2-7 2 1 2 1 2 1 2-1 2 0 2-2 2 0 2-1 2 1 2 2 2 0 2 0 2 0 2-1 2 1 2 0 2-3 2 1 2 0 2 0 2 0 2 0 2 0 2 1 2-1 2 0 2 1 2-2 2 0 2 2 2 0 2-1 2 2 2 0 2 0 2-2 2 1 2 2 2-1 2-2 2-1 2 2 2 1 2 0 2-1 2-2 2 2 2-2 2 4 2-3 2 3 2-1 2-2 2 1 2 2 2-3 2 0 2 1 2-1 2 2 2-2 2 1 2 1 2-2 2-9 2-5 2-6 2 9 2 1 2-2 2 6 2 2 2 1 2 1 2 2 2-1 2 3 2 0 2-2 2 2 2 1 2-3 2-1 2 2 2-1 2 0 2 1 2-2 2-9 2 6 2-1 2 5 2-1 2 2 2 0 2-2 2-2 2 5 2-5 2 2 2-2 2 5 2-5 2 1 2 4 2-5 2 4 2-2 2 2 2-1 2-1 2 1 2-1 2 0 2 0 2 1 2-2 2 1 2 0 2 1 2-3 2 1 2 4 2-3 2-1 2 3 2 1 2-5 2-13 2-3 2-3 2 3 2 11 2-3 2 7 2 4 2-2 2 0 2-3 2 0 2 5 2-1 2-4 2 1 2-1 2 1 2 4 2-4 2 3 2-1 2-1 2-2 2 2 2 1 2 3 2-2 2 0 2 0 2-4 2 3 2-3 2 2 2-1 2-1 2 0 2 5 2-2 2-2 2 3 2 2 2-11 2 11 2-3 2 2 2-5 2 4 2-2 2 0 2 3 2-4 2 4 2-1 2-1 2 4 2-3 2-4 2-3 2-2 2 9 2 2 2 0 2 1 2 1 2 0 2 0 2 0 2 2 2-1 2 1 2 0 2-1 2 2 2-1 2 0 2-1 2 1 2-1 2 2 2 0 2-2 2 1 2 0 2 0 2 0 2-1 2 1 2 0 2 0 2 0 2 1 2 0 2 0 2 0 2 1 2 0 2 0 2 0 2 0 2 0 2 0 2-1 2 1 2 0 2 0 2 0 2 0 2 0 2 0 2 0 2-1 2 1 2-1 2 0 2 0 2 0 2 1 2 0 2 0 2-1 2 0 2 1 2-1 2 0 2 0 2 1 2-5 2-5 2-1 2 0 2 0 2 5 2 0 2-4 2 3 2 0 2-3 2 1 2-1 2 1 2 4 2-6 2 3 2-3 2 2 2 2 2 1 2-2 2 1 2 0 2-3 2 1 2 3 2-5 2 5 2-2 2 1 2 0 2 1 2 0 2-5 2-2 2-2 2-3 2 2 2 7 2 2 2 1 2-4 2 0 2-3 2-10 2 3 2 2 2 8 2-2 2 6 2-1 2 1 2 1 2 2 2 0 2 1 2 2 2-7 2-8 2-8 2 9 2-7 2 6 2 2 2 5 2 2 2-2 2 0 2 3 2 0 2 1 2 2 2-1 2 1 2-2 2 0 2 1 2 0 2 1 2-1 2 0 2 2 2-1 2 0 2 1 2-1 2 1 2-1 2 0 2 1 2-1 2 1 2-1 2 0 2 1 2 0 2 1 2 0 2 0 2 0 2-1 2 1 2-1 2 1 2 0 2 0 2 0 2-1 2 1 2 0 2-1 2 1 2 0 2-1 2 1 2 0 2-1 2 0 2 1 2-1 2 0 2 0 2 1 2-1 2 0 2 0 2 1 2-1 2 1 2 0 2 0 2-6 2 0 2 1 2-2 2 2 2 1 2-1 2 1 2-1 2 0 2 0 2-2 2 3 2-1 2-2 2 3 2-2 2 0 2 0 2 1 2 1 2-1 2-2 2 0 2 1 2 1 2 0 2-2 2 1 2 2 2-1 2 0 2-2 2 0 2 2 2-1 2 1 2 1 2-2 2 1 2 2 2-2 2-2 2 0 2 1 2 2 2-3 2 1 2-2 2 2 2 0 2 0 2 1 2-2 2 1 2-3 2 2 2-1 2 2 2-2 2 2 2-1 2 2 2-2 2-9 2-4 2-9 2 13 2 0 2 0 2 6 2-2 2 5 2 3 2 1 2-1 2 0 2 2 2 0 2 0 2-1 2 1 2 0 2 0 2-1 2 1 2 0 2-3 2-9 2-1 2-1 2 7 2 2 2 0 2-2 2 3 2 1 2 0 2-2 2 1 2-2 2 1 2-2 2 4 2-2 2 2 2-2 2 0 2 2 2-3 2-1 2 0 2 2 2 0 2 0 2 2 2 0 2-3 2 0 2 3 2-4 2 3 2 0 2 0 2 0 2 1 2-3 2-1 2-7 2-3 2-8 2 7 2 6 2-4 2 3 2 8 2-1 2 0 2-1 2 0 2-3 2 0 2 4 2-3 2 4 2-4 2 2 2-3 2 4 2 1 2-3 2 0 2 2 2-3 2 4 2-1 2-1 2 0 2-4 2 4 2 2 2 1 2-3 2-3 2 4 2-1 2 0 2 0 2 1 2-4 2 5 2-11 2 8 2 2 2 0 2-4 2 6 2-4 2 3 2-3 2 1 2 1 2 0 2-1 2 0 2 8 2-4 2-9 2-2 2-3 2-1 2 0 2 8 2 0 0 27-2 3-2-2-2 3-2 3-2-2-2-2-2-10-2-4-2 8-2 1-2 1-2-1-2-3-2 5-2-3-2 1-2-2-2 2-2-1-2-2-2 1-2 11-2-10-2 3-2-1-2-1-2 1-2-1-2 0-2 1-2-1-2-3-2 3-2-3-2 1-2 0-2 2-2 0-2-2-2 4-2-5-2 5-2-2-2-3-2 0-2 1-2-1-2 5-2-2-2 2-2-1-2 1-2-3-2 0-2 2-2-1-2 1-2-1-2 5-2-1-2-1-2 3-2 10-2-6-2 1-2-13-2-1-2-1-2 2-2-1-2 0-2-2-2 2-2 0-2 1-2-1-2-2-2 3-2 1-2 0-2-1-2-2-2 3-2 0-2-3-2 3-2-4-2 2-2-1-2 0-2 2-2 1-2-3-2 2-2-2-2 2-2 0-2-2-2 2-2-2-2 3-2-1-2 10-2-2-2-2-2-8-2-4-2 0-2 0-2 0-2 1-2 0-2 0-2 0-2-1-2 1-2 1-2 0-2 1-2 0-2 1-2 6-2-1-2 2-2 1-2 2-2 7-2 0-2-5-2-10-2-3-2 0-2 2-2 0-2-1-2 1-2 1-2-2-2 2-2-3-2 2-2 0-2-1-2 1-2-1-2 1-2-2-2 2-2 1-2-3-2 2-2-2-2 0-2-1-2 1-2-1-2 2-2-1-2 0-2 1-2-1-2-1-2 1-2 0-2 0-2 0-2 0-2 0-2 0-2 1-2 0-2 0-2 0-2-2-2 3-2-1-2-1-2 1-2 0-2 0-2 0-2-1-2 1-2-2-2 2-2-2-2 0-2 2-2-1-2 2-2-3-2 2-2-2-2-3-2 0-2-1-2 0-2 0-2 1-2 0-2 0-2-1-2 1-2 0-2 0-2-1-2 0-2 1-2-1-2 0-2 1-2 0-2-1-2 1-2 0-2 0-2-1-2 1-2-1-2 1-2-1-2 0-2 1-2 0-2-1-2 0-2 1-2-1-2 1-2 0-2 0-2 1-2-1-2 1-2-1-2 0-2 1-2 0-2 0-2 0-2 1-2-1-2 0-2 1-2 0-2-1-2 0-2 1-2 0-2-1-2 1-2-1-2 1-2 0-2 2-2 0-2 2-2-1-2 2-2 0-2 6-2-2-2 3-2 6-2-3-2 0-2-12-2-6-2 2-2 1-2 1-2 0-2 1-2 2-2 0-2 1-2 4-2 0-2 8-2 3-2-5-2-6-2-4-2-2-2 0-2 5-2 5-2 2-2-5-2-1-2-4-2-2-2 3-2-2-2 0-2 0-2 0-2 1-2-2-2 3-2 1-2-3-2 2-2-1-2-1-2 2-2-2-2 4-2-3-2-1-2 1-2-1-2 0-2 2-2 0-2 0-2 0-2-1-2-2-2 3-2 3-2 3-2-5-2-1-2-5-2-4-2 1-2 0-2 0-2 0-2 0-2 0-2-1-2 0-2 1-2-1-2 0-2 0-2 1-2-1-2 1-2 0-2 0-2 0-2 0-2-1-2 1-2-1-2 0-2 1-2-1-2 0-2 0-2 0-2 0-2 0-2 1-2 0-2-1-2 1-2 0-2 1-2 0-2 0-2 0-2 1-2 0-2-1-2 0-2 0-2 1-2 0-2-1-2 1-2 0-2-1-2 0-2 0-2 1-2-1-2 1-2-1-2 0-2 0-2 1-2 1-2 1-2-2-2 1-2 1-2 2-2 1-2 7-2-3-2 2-2-5-2-3-2 5-2 0-2-3-2 3-2-3-2 0-2 2-2-3-2 4-2 0-2-3-2 1-2 6-2-6-2 0-2 0-2 2-2-2-2 0-2 4-2-2-2-1-2 0-2 1-2 2-2-4-2 1-2 0-2-1-2 1-2-2-2 3-2-3-2 2-2 0-2-1-2-2-2 5-2-1-2-2-2-1-2 2-2 1-2-2-2 3-2-4-2 4-2-1-2 1-2 5-2-2-2 3-2 4-2 7-2-11-2-7-2-3-2-1-2 1-2-1-2-2-2 2-2 2-2-3-2 1-2 2-2-1-2 1-2 0-2-1-2-2-2 2-2-1-2 1-2-1-2 2-2-1-2 2-2-5-2 2-2 0-2 1-2 1-2-2-2 1-2 1-2-1-2 0-2-3-2 4-2-1-2 1-2 2-2 4-2 3-2-8-2-4-2 1-2 1-2-3-2 2-2 0-2 0-2-2-2 0-2 1-2 1-2-1-2 1-2 0-2 2-2 0-2 2-2 6-2-1-2 5-2 4-2-3-2-3-2-11-2-3-2 0-2 0-2 2-2-1-2 1-2-2-2 0-2 1-2-1-2 3-2-1-2-3-2 3-2-2-2 2-2-1-2 2-2-3-2 1-2 1-2 0-2 2-2-4-2 0-2-1-2 2-2-1-2 0-2 2-2-2-2 3-2-2-2 1-2 1-2 0-2-1-2 0-2-1-2-1-2 1-2-1-2 0-2 3-2-3-2 0-2 3-2-4-2 2-2 1-2-1-2-1-2 0-2 2-2-1-2 2-2-2-2 0-2-2-2 2-2 0-2 0-2-1-2-1-2-4-2 1-2 1-2 0-2-1-2 1-2 0-2-1-2 1-2-1-2 0-2 0-2 1-2-1-2 1-2 0-2 0-2-1-2 1-2 0-2-1-2 0-2 0-2 0-2 1-2 0-2-1-2 1-2 0-2 0-2 0-2-1-2 1-2 0-2 0-2 0-2-1-2 0-2 1-2 0-2 0-2 0-2-1-2 0-2 1-2 0-2 0-2 0-2-1-2 0-2 0-2 0-2 1-2 0-2 0-2 0-2 0-2 0-2 2-2 0-2-1-2 3-2 2-2 0-2 0-2 3-2 0-2 5-2-2-2 4-2-1-2 7-2-8-2-8-2-5-2 1-2-1-2 1-2 3-2-1-2 4-2 1-2 0-2-1-2 3-2 2-2 2-2-1-2-2-2-6-2 2-2-1-2 4-2-5-2 14-2-15-2 3-2 0-2 0-2-2-2 4-2 0-2-3-2 1-2-1-2-1-2 4-2-2-2-2-2 0-2 1-2 1-2-5-2 4-2 0-2 0-2 0-2-2-2 3-2-2-2 1-2 1-2 0-2-1-2 0-2-2-2-2-2 2-2 2-2-8-2-1-2 0-2 0-2 1-2 0-2 0-2-1-2 0-2 0-2 1-2 0-2-1-2 1-2-1-2 0-2 1-2-1-2 0-2 1-2-1-2 0-2 1-2 0-2 0-2-1-2 0-2 1-2-1-2 0-2 0-2 0-2 0-2 0-2 0-2-1-2 1-2 0-2 0-2-1-2 0-2 1-2 0-2 0-2 0-2 0-2 0-2 0-2 0-2 0-2 0-2 0-2 0-2 0-2 0-2 0-2 0-2 0-2 0-2 0-2 0-2 0-2 0-2 0-2-1-2 1-2 0-2 0-2 0-2 0-2 0-2 0-2-1-2 1-2 0-2 0-2 0-2 0-2 0-2 0-2 0-2 0-2 0-2 0-2 0-2 0-2 0z" fill="#3d3dd0"/><path d="M573 48l2 0 2 0 2 0 2 0 2 0 2 0 2 0 2 0 2 0 2 0 2 0 2 0 2 0 2 0 2 0 2 0 2 0 2 0 2 0 2 0 2 0 2 0 2 0 2 0 2 0 2 0 2 0 2 0 2 0 2 0 2 0 2 0 2 0 2 0 2 0 2 0 2 0 2 0 2 0 2 0 2 0 2 0 2 0 2 0 2 0 2 0 2 0 2 0 2 0 2 0 2 0 2 0 2 0 2 0 2 0 2 0 2 0 2 0 2 0 2 0 2 0 2 0 2 0 2 0 2 0 2 0 2 0 2 0 2 0 2 0 2 0 2 0 2 0 2 0 2 0 2 0 2 0 2 0 2 0 2 0 2 0 2 0 2 0 2 0 2 0 2 0 2-4 2 1 2 0 2 0 2 0 2 0 2 1 2 0 2-2 2 0 2 1 2-1 2 0 2 0 2 0 2 0 2 1 2 0 2 0 2 0 2 0 2-2 2 1 2 1 2-2 2 0 2 1 2 1 2-1 2 0 2 1 2-1 2 0 2 0 2 1 2-1 2 0 2-1 2 0 2 1 2-2 2-4 2 3 2 0 2 1 2 0 2 0 2 3 2-1 2 0 2 1 2 1 2 0 2 1 2 1 2-4 2-4 2-4 2 4 2-1 2 3 2-2 2 4 2-1 2 1 2 2 2 0 2 0 2 1 2 0 2 0 2 1 2 0 2 0 2 0 2 0 2 0 2 0 2 0 2 0 2 0 2 0 2 0 2 0 2 0 2 0 2 0 2 0 2 0 2 0 2 0 2 0 2 0 2 0 2 0 2 0 2 0 2 0 2 0 2 0 2 0 2 0 2 0 2 0 2 0 2 0 2 0 2 0 2 0 2 0 2 0 2 0 2 0 2 0 2 0 2 0 2 0 2 0 2 0 2 0 2 0 2 0 2 0 2 0 2 0 2 0 2 0 2 0 2 0 2-1 2-1 2 1 2 0 2-1 2 0 2 1 2-2 2 1 2 0 2-1 2 1 2 0 2-1 2 1 2-1 2 1 2-1 2 1 2 1 2 0 2-2 2 1 2-1 2 0 2 1 2-1 2 0 2 0 2 0 2 0 2 1 2 0 2 0 2 1 2-2 2 2 2-2 2 1 2-1 2 1 2 0 2 0 2-1 2 0 2 2 2-1 2 0 2 0 2 0 2 0 2 0 2 0 2 0 2-1 2 0 2 1 2 0 2 0 2-1 2 2 2-1 2-1 2 2 2-3 2-2 2-7 2 5 2 0 2 3 2 0 2 0 2 1 2 1 2-1 2 2 2 0 2-1 2 0 2 1 2 0 2 0 2-1 2 1 2 0 2-1 2 1 2-1 2-2 2-2 2-1 2 3 2 0 2 1 2 1 2 1 2-1 2 0 2 1 2-1 2-1 2 1 2 0 2 0 2 0 2 1 2-1 2-1 2 2 2 0 2 0 2-1 2 1 2-2 2 1 2-1 2 0 2 1 2 0 2-1 2 0 2 1 2 0 2 0 2 1 2 0 2 0 2-2 2 1 2-7 2 1 2-3 2 4 2 2 2 0 2 2 2 0 2-1 2 2 2 0 2-1 2-1 2 2 2 0 2-2 2 2 2-1 2 1 2 0 2-2 2 0 2 2 2 0 2-2 2 1 2 1 2 0 2 0 2 0 2 0 2-1 2 1 2-1 2 0 2 0 2-1 2 2 2-2 2 1 2 0 2-1 2 2 2-1 2-1 2 1 2 1 2 0 2 0 2-2 2 2 2-2 2 1 2 1 2-2 2 2 2-4 2 1 2 1 2-1 2 2 2 0 2 1 2 2 2 0 2 0 2 0 2 0 2 1 2 0 2 0 2-1 2 1 2 0 2 0 2-1 2 1 2 0 2-1 2 1 2 0 2 0 2 0 2 0 2-1 2 1 2 0 2-1 2 0 2 1 2 0 2 0 2 0 2 0 2 0 2 0 2 0 2 0 2 0 2 0 2 0 2 0 2 0 2 0 2 0 2 0 2 0 2 0 2 0 2 0 2 0 2 0 2 0 2 0 2 0 2 0 2 0 2 0 2 0 2 0 2 0 2 0 2 0 2 0 2 0 2 0 2 0 2-1 2-4 2 0 2 0 2 0 2 1 2 1 2-1 2 1 2-1 2 1 2-1 2 1 2 0 2-1 2 0 2 1 2 1 2 0 2-2 2 2 2-1 2-1 2 0 2 1 2-1 2 2 2-1 2 1 2-2 2 1 2 1 2-1 2 0 2-1 2-3 2-1 2 2 2-1 2 2 2 2 2 0 2-1 2-5 2-2 2 3 2-1 2 1 2 4 2 0 2 1 2 1 2 1 2 0 2 0 2 0 2 1 2 0 2-2 2-3 2-5 2 2 2 1 2 2 2 1 2-2 2 3 2 0 2 1 2 1 2 0 2 0 2 0 2 0 2 0 2 1 2 0 2 0 2-1 2 0 2 0 2 0 2 0 2 1 2 0 2 0 2 0 2 0 2 0 2 0 2 0 2 0 2 0 2 0 2 0 2 0 2 0 2 0 2 0 2 0 2 0 2 0 2 0 2 0 2 0 2 0 2 0 2 0 2 0 2 0 2 0 2 0 2 0 2 0 2 0 2 0 2 0 2 0 2 0 2 0 2 0 2 0 2 0 2 0 2 0 2 0 2 0 2 0 2 0 2 0 2 0 2 0 2-2 2 1 2-1 2 1 2-1 2 0 2 0 2 0 2 1 2 0 2-1 2-1 2 1 2-1 2 2 2-1 2 0 2-1 2 2 2-1 2 0 2-1 2 1 2 0 2 0 2 0 2 1 2-1 2 1 2-1 2 0 2 0 2 0 2 0 2 0 2 0 2 1 2 0 2-1 2 0 2 0 2-1 2 2 2-2 2 0 2 0 2 0 2 0 2 0 2 1 2 0 2 0 2-1 2 1 2-1 2 1 2 0 2 0 2-1 2 0 2 1 2-1 2 1 2-1 2-7 2 0 2-2 2 2 2 5 2-2 2 2 2 1 2 1 2 0 2 1 2 1 2 0 2 1 2-1 2 0 2 0 2 0 2 0 2 1 2 0 2 0 2 0 2-1 2-4 2-2 2-1 2 2 2 3 2 0 2 0 2-1 2 1 2 1 2-2 2 2 2 0 2-1 2 0 2 1 2-1 2 0 2 0 2 0 2 1 2-2 2 1 2 0 2 0 2 1 2 0 2-2 2 1 2 0 2 1 2-2 2 2 2-1 2 0 2 0 2 1 2-1 2 1 2-2 2-3 2-3 2-3 2 3 2 3 2 1 2 1 2 0 2 1 2-1 2 2 2 0 2 0 2-2 2 2 2 0 2-2 2 1 2 1 2 0 2 0 2-1 2-1 2 2 2 0 2-1 2 0 2-1 2 0 2 0 2 0 2 2 2 0 2-2 2 1 2 1 2-1 2 1 2-1 2 0 2 1 2-2 2 0 2 2 2-2 2 0 2 1 2 0 2 1 2-1 2 0 2 1 2-2 2 0 2 1 2-1 2 2 2 3 2-3 2-3 2-1 2 1 2 0 2-1 2 1 2 2 0 11-2 2-2 1-2-1-2 0-2 1-2-1-2-3-2-4-2 4-2 2-2-1-2 1-2 0-2-2-2 1-2 0-2-1-2 1-2 0-2 1-2 0-2-2-2 2-2 0-2-2-2 1-2 0-2-1-2 1-2-1-2 1-2 1-2-2-2 0-2 2-2 0-2 0-2 0-2-1-2 0-2-1-2 0-2 2-2-1-2-1-2 0-2 0-2 1-2 1-2-2-2 0-2 2-2-2-2 0-2 0-2 2-2-1-2 1-2 0-2 1-2 1-2 3-2 3-2-3-2-3-2-3-2-2-2 1-2-1-2 1-2 0-2 0-2-1-2 2-2-2-2 1-2 0-2 1-2-2-2 0-2 1-2 0-2 0-2 1-2-2-2 1-2 0-2 0-2 0-2-1-2 1-2 0-2-1-2 0-2 2-2-2-2 1-2 1-2-1-2 0-2 0-2 3-2 2-2-1-2-2-2-4-2-1-2 0-2 0-2 0-2 1-2 0-2 0-2 0-2 0-2-1-2 1-2 0-2 1-2 1-2 0-2 1-2 1-2 2-2-2-2 5-2 2-2-2-2 0-2-7-2-1-2 1-2-1-2 1-2 0-2-1-2 0-2 0-2 1-2-1-2 1-2-1-2 0-2 0-2 1-2 0-2 0-2 0-2 0-2 0-2-2-2 2-2-1-2 0-2 0-2-1-2 0-2 1-2 0-2 0-2 0-2 0-2 0-2 0-2-1-2 1-2-1-2 1-2 0-2 0-2 0-2 1-2-1-2 0-2-1-2 2-2-1-2 0-2-1-2 2-2-1-2 1-2-1-2-1-2 0-2 1-2 0-2 0-2 0-2-1-2 1-2-1-2 1-2-2-2-1-2 0-2 1-2-1-2 1-2 0-2 0-2 0-2-1-2 0-2 0-2 0-2 1-2 0-2-1-2 1-2-1-2 0-2 0-2 0-2 0-2 1-2 0-2-1-2 1-2-1-2 1-2-1-2 1-2-1-2 0-2 1-2 0-2 0-2-1-2 0-2 1-2 0-2 0-2 0-2 0-2 0-2 0-2 0-2 0-2 0-2 0-2 0-2 1-2 0-2 0-2 0-2 0-2-1-2 0-2 0-2 1-2 0-2 0-2 0-2 0-2 0-2 1-2 1-2 0-2 3-2-2-2 1-2 2-2 1-2 2-2-5-2-3-2-3-2 1-2 1-2 0-2 0-2 0-2 1-2 1-2 1-2 0-2 4-2 1-2-1-2 3-2-2-2-5-2-1-2 0-2 2-2 2-2-1-2 2-2-1-2-3-2-1-2 0-2-1-2 1-2 1-2-2-2 1-2-1-2 2-2-1-2 1-2 0-2-1-2-1-2 2-2-2-2 0-2 1-2 1-2 0-2-1-2 0-2 1-2-1-2 1-2-1-2 1-2-1-2 1-2 1-2 0-2 0-2 0-2-4-2-1-2 0-2-1-2 1-2-1-2 0-2 1-2 0-2-1-2 0-2 0-2 0-2 0-2 0-2 0-2 1-2 0-2 0-2-1-2 1-2-1-2 0-2 0-2 0-2 1-2 0-2-1-2 1-2-1-2 0-2 0-2 0-2 1-2 0-2 0-2 0-2 0-2 0-2 1-2 0-2-1-2 0-2 1-2-1-2 0-2 0-2 0-2 0-2 1-2-1-2 0-2 1-2-1-2 0-2 0-2 1-2-1-2 0-2 0-2 1-2 0-2 0-2 0-2 0-2 2-2 1-2 0-2 2-2-1-2 1-2 1-2-4-2 2-2-2-2 1-2 1-2-2-2 2-2-2-2 0-2 0-2 1-2 1-2-1-2-1-2 2-2-1-2 0-2 1-2-2-2 2-2-1-2 0-2 0-2-1-2 1-2-1-2 0-2 0-2 0-2 0-2 1-2 1-2-2-2 0-2 2-2 0-2-2-2 0-2 1-2-1-2 2-2-2-2 0-2 2-2-1-2-1-2 0-2 2-2-1-2 0-2 2-2 0-2 2-2 4-2-3-2 1-2-7-2 1-2-2-2 0-2 0-2 1-2 0-2 0-2 1-2 0-2-1-2 0-2 1-2 0-2-1-2 1-2-2-2 1-2-1-2 0-2 0-2 2-2-1-2-1-2 1-2 0-2 0-2 0-2 1-2-1-2-1-2 1-2 0-2-1-2 1-2 1-2 1-2 0-2 3-2-1-2-2-2-2-2-1-2 1-2-1-2 0-2 1-2-1-2 0-2 0-2 1-2 0-2-1-2 0-2 2-2-1-2 1-2 1-2 0-2 0-2 3-2 0-2 5-2-7-2-2-2-3-2 2-2-1-2-1-2 2-2-1-2 0-2 0-2 1-2 0-2-1-2 0-2 0-2 0-2 0-2 0-2 0-2 0-2-1-2 2-2 0-2-1-2 0-2 0-2 1-2-1-2 1-2-2-2 2-2-2-2 1-2 0-2 0-2 1-2 0-2 0-2 0-2 0-2-1-2 1-2 0-2-1-2 1-2-2-2 0-2 1-2 1-2-1-2 1-2-1-2 1-2-1-2 0-2 1-2-1-2 0-2 1-2-2-2 1-2 0-2-1-2 0-2 1-2-1-2-2-2 1-2 0-2 0-2 0-2 0-2 0-2 0-2 0-2 0-2 0-2 0-2 0-2 0-2 0-2 0-2 0-2 0-2 0-2 0-2 0-2 0-2 0-2 0-2 0-2 0-2 0-2 0-2 0-2 0-2 0-2 0-2 0-2 0-2 0-2 0-2 0-2 0-2 0-2 0-2 0-2 0-2 0-2 0-2 0-2 0-2 0-2 0-2 0-2 0-2 0-2 0-2 0-2 0-2 0-2 0-2 0-2 0-2 1-2 0-2 0-2 1-2 0-2 0-2 2-2 1-2-1-2 4-2-2-2 3-2-1-2 4-2-4-2-4-2-4-2 1-2 1-2 0-2 1-2 1-2 0-2-1-2 3-2 0-2 0-2 1-2 0-2 3-2-4-2-2-2 1-2 0-2-1-2 0-2-1-2 1-2 0-2 0-2-1-2 1-2 0-2-1-2 1-2 1-2 0-2-2-2 1-2 1-2-2-2 0-2 0-2 0-2 0-2 1-2 0-2 0-2 0-2 0-2-1-2 1-2 0-2-2-2 0-2 1-2 0-2 0-2 0-2 0-2 1-2-4-2-1-2 1-2-1-2 0-2 0-2 0-2 1-2 0-2-1-2 0-2 1-2-1-2 0-2 1-2 0-2-1-2 0-2 0-2 1-2 0-2 0-2-1-2 1-2 0-2 0-2 0-2 0-2-1-2 0-2 0-2 0-2 0-2 0-2 0-2 0-2 0-2 0-2 0-2 0-2 0-2 0-2 0-2 0-2 0-2 0-2 0-2 0-2 0-2 0-2 0-2 0-2 0-2 0-2 0-2 0-2 0-2 0-2 0-2 0-2 0-2 0-2 0-2 0-2 0-2 0-2 0-2 0-2 0-2 0-2 0-2 0-2 0-2 0-2 0-2 0-2 0-2 0-2 0-2 0-2 0-2 0-2 0-2 0-2 0-2 0-2 0z" fill="#7070de"/></g></svg>
<div style="left:286px;top:171.5px;width:975px;height:5px;background:#4a4b52"></div>
<div style="left:286px;top:176.5px;width:975px;height:49.5px;background:#d9d9d9"></div>
<div style="left:286px;top:176.5px;width:798.5px;height:49.5px;background:#c8c8c8"></div>
<div style="left:1084px;top:176.5px;width:1px;height:49.5px;background:#404040"></div>
<svg style="position:absolute;left:0px;top:176.5px;left:0" width="1085" height="49.5" viewBox="0 0 1085 49.5"><g transform="scale(.5)"><path d="M573 48l2 0 2 0 2 0 2 0 2 0 2 0 2 0 2 0 2 0 2 0 2 0 2 0 2 0 2 0 2 0 2 0 2 0 2 0 2 0 2 0 2 0 2 0 2 0 2 0 2 0 2 0 2 0 2 0 2 0 2 0 2 0 2 0 2 0 2 0 2 0 2 0 2 0 2 0 2 0 2 0 2 0 2 0 2 0 2 0 2 0 2 0 2 0 2 0 2 0 2 0 2 0 2 0 2 0 2 0 2 0 2 0 2 0 2 0 2 0 2 0 2 0 2-1 2 1 2 0 2-1 2 0 2 1 2 0 2 0 2-1 2 1 2 0 2 0 2 0 2 0 2 0 2 0 2-1 2 1 2 0 2 0 2 0 2-1 2 0 2 0 2 0 2-12 2 6 2-5 2 3 2-3 2 1 2-1 2 0 2 2 2-3 2 2 2-4 2 4 2-3 2 6 2 0 2-5 2-2 2 7 2-3 2 0 2 2 2-6 2 0 2 0 2 7 2-5 2 3 2-5 2 3 2 3 2 1 2-5 2 5 2 0 2-10 2 1 2 5 2 2 2-12 2-5 2-4 2 3 2 2 2 12 2-4 2 4 2 4 2-4 2 5 2 0 2-2 2-1 2 5 2-3 2 1 2-12 2-1 2-5 2-7 2 7 2 8 2-8 2 11 2-3 2 2 2 1 2-1 2 9 2-3 2 1 2-2 2 1 2 6 2-3 2 2 2 0 2-1 2 3 2 1 2-1 2 1 2-1 2 2 2 0 2-1 2 1 2 1 2 0 2 0 2-1 2 1 2-1 2 0 2 1 2 0 2-1 2 0 2 1 2-1 2 1 2 0 2-1 2 1 2-1 2 0 2 1 2 0 2 0 2-1 2 1 2-1 2 0 2 0 2 0 2 1 2-1 2 1 2-1 2 0 2 1 2 0 2-1 2 0 2 1 2 0 2-1 2 1 2-1 2 1 2-7 2-1 2 3 2-2 2 3 2-4 2 2 2-3 2 2 2-1 2 4 2-5 2 0 2 2 2-2 2 2 2 2 2 1 2-2 2 1 2 0 2 1 2-1 2-1 2 1 2-4 2 4 2-2 2-1 2 3 2 1 2-2 2 1 2 0 2 1 2 0 2-3 2 1 2-2 2 2 2-5 2 5 2 0 2 0 2-1 2 3 2-3 2 3 2-2 2 2 2-1 2 0 2-1 2 3 2-5 2 2 2 0 2 0 2 0 2 1 2-2 2-3 2-2 2-4 2-4 2 5 2 1 2 0 2 5 2-1 2 5 2-3 2 3 2-1 2 2 2-4 2 4 2-3 2 0 2 2 2-3 2 2 2 2 2-2 2 0 2-2 2-18 2 4 2-10 2 6 2 10 2 1 2-3 2 9 2-2 2 1 2 0 2 1 2 2 2 1 2-2 2 2 2 1 2-4 2 3 2-2 2 0 2-1 2 1 2 2 2-1 2-1 2 2 2-2 2 2 2-1 2-1 2 3 2-1 2 0 2 0 2 0 2-1 2 2 2-1 2 0 2-4 2-15 2-7 2 8 2 6 2 2 2-2 2 4 2 6 2-2 2-4 2 7 2-7 2 0 2 0 2 1 2 6 2-4 2 2 2 0 2 2 2-4 2-3 2 3 2-3 2 0 2 0 2 3 2 4 2-4 2-2 2-1 2 2 2-2 2 5 2-3 2 2 2-4 2 1 2 1 2-1 2 2 2-2 2 4 2 0 2-16 2 14 2 4 2-6 2-1 2 2 2-2 2 4 2-4 2 7 2 0 2 0 2 5 2-1 2 1 2-10 2 0 2 3 2 1 2-2 2 0 2 3 2 1 2 2 2 1 2 0 2 0 2 1 2-1 2 2 2-1 2-1 2 1 2 0 2 0 2 0 2 1 2-1 2 0 2 0 2 0 2 1 2 0 2 0 2-1 2 1 2-1 2 0 2 0 2-1 2 3 2-1 2 0 2 1 2-2 2 1 2 0 2 0 2 0 2 1 2 0 2 0 2 0 2 0 2 0 2 0 2 0 2-1 2 2 2-1 2 0 2 0 2-1 2 1 2 0 2 0 2 0 2 0 2 1 2-1 2 0 2 0 2 0 2 0 2 0 2-5 2-14 2-5 2 3 2 1 2 6 2-2 2 6 2 0 2 4 2-5 2 1 2 0 2 2 2 1 2-6 2 3 2-1 2 4 2-1 2-3 2 5 2-6 2 4 2-3 2 3 2-3 2 5 2-7 2 4 2 1 2 0 2 1 2 1 2-12 2 3 2-4 2 7 2-6 2 9 2-4 2 6 2-20 2 5 2-4 2 5 2-4 2 6 2 4 2 2 2 1 2 7 2-2 2 2 2 3 2 0 2-4 2-3 2-2 2 1 2-4 2 1 2 2 2 1 2 3 2 0 2-1 2 2 2 3 2 0 2 1 2 0 2-1 2 2 2 0 2-1 2 0 2 1 2-2 2 2 2-1 2 0 2 1 2 0 2 0 2-1 2 1 2-2 2 2 2-1 2 1 2 1 2 1 2 0 2-1 2 0 2 0 2 1 2 0 2-1 2 1 2-1 2 0 2 1 2 0 2-1 2 1 2-1 2 0 2 0 2 1 2 0 2-1 2 1 2 0 2 0 2-1 2 0 2 0 2 0 2 0 2 0 2 1 2-1 2 0 2 1 2 0 2-1 2 1 2 0 2 0 2-4 2-2 2 3 2-3 2 1 2 2 2-1 2 0 2 0 2-2 2-1 2 1 2 2 2 0 2-2 2 1 2 1 2 0 2 0 2-3 2 1 2 0 2 2 2-2 2 1 2-2 2 1 2 0 2 2 2 1 2 0 2-3 2 0 2 2 2 0 2-1 2 2 2-1 2-1 2 2 2-1 2-1 2-1 2-2 2 0 2-1 2-1 2 2 2 2 2-4 2 2 2-1 2 2 2 2 2-4 2 2 2-1 2 2 2 0 2-1 2 2 2-4 2 1 2 0 2-10 2 1 2-9 2 13 2 0 2 1 2 3 2 1 2 0 2 3 2-2 2 1 2 1 2-1 2 2 2 1 2-2 2 2 2-3 2 1 2-1 2 3 2 0 2-6 2-6 2-2 2-12 2 9 2 1 2 3 2 6 2 1 2 0 2 3 2-3 2 2 2-4 2 3 2 1 2-3 2-1 2 1 2 0 2 2 2 1 2-1 2 2 2-1 2 0 2-2 2 1 2-3 2 4 2-2 2 1 2 2 2-1 2 1 2-2 2-3 2 3 2 1 2-4 2 2 2-11 2-5 2-8 2 6 2 4 2 10 2-2 2 0 2 2 2 5 2-7 2 4 2 0 2-3 2-1 2 6 2-3 2 1 2 0 2 0 2-2 2-2 2 2 2 0 2 1 2 4 2 0 2-7 2 0 2 2 2 3 2-4 2 2 2-2 2 6 2-2 2-5 2 2 2 5 2-7 2 3 2-3 2 2 2-5 2 5 2-1 2 5 2-6 2 6 2-6 2 0 2 6 2-4 2 3 2-3 2 2 2-4 2 15 2-7 2-1 2-3 2-5 2-1 2 6 2-2 2 4 0 22-2 4-2 1-2 0-2-3-2 0-2-3-2-3-2-6-2 12-2 1-2-1-2 1-2 0-2 0-2 1-2 1-2-3-2 3-2-5-2 4-2-4-2 7-2-4-2 1-2-2-2-1-2 1-2 0-2 2-2-5-2 0-2 1-2 3-2-2-2 0-2 4-2-3-2 3-2-6-2 2-2 3-2-2-2 3-2 0-2 0-2-4-2-1-2 0-2 2-2-3-2 3-2 2-2-2-2-1-2-1-2 1-2-1-2 2-2 4-2 1-2 3-2 9-2 6-2-4-2-11-2-8-2-1-2-4-2 3-2 0-2 0-2-4-2 3-2 0-2-1-2 1-2-2-2 4-2-2-2-1-2-2-2 0-2 4-2 0-2-2-2 1-2 0-2 2-2-1-2 0-2 0-2 0-2-2-2 2-2-3-2 1-2 0-2 1-2 1-2 8-2-2-2 6-2 5-2-2-2-3-2-15-2-4-2 2-2 0-2-2-2 3-2-3-2 2-2-1-2-1-2 2-2-1-2 1-2 2-2-1-2 1-2 5-2-2-2 2-2 4-2 4-2 3-2-2-2-6-2-6-2-2-2 0-2 0-2-1-2 2-2-2-2 2-2-1-2 0-2-1-2 0-2 3-2-2-2 1-2-3-2 4-2-1-2 1-2-2-2 1-2-1-2-2-2-2-2 1-2 1-2 0-2 0-2 1-2-1-2-1-2 1-2 0-2-1-2 1-2-1-2 2-2 1-2-1-2-1-2-1-2 0-2 1-2 1-2 0-2-2-2 2-2-2-2 0-2 1-2 1-2-1-2 0-2 0-2 1-2-2-2-1-2 1-2 1-2 0-2 1-2-3-2 1-2 1-2-5-2 0-2 0-2 1-2-1-2 1-2-1-2 1-2-1-2 0-2 1-2-1-2 1-2 0-2-1-2 1-2-1-2 1-2 0-2 0-2-1-2 1-2 0-2 0-2-1-2 0-2 1-2 0-2 0-2-1-2 0-2 1-2 0-2-1-2 0-2 1-2 0-2-1-2 0-2 1-2 2-2 1-2-1-2 0-2 0-2-1-2 0-2 1-2 0-2 0-2 0-2-1-2 1-2-1-2 1-2-1-2 0-2 1-2 1-2-1-2 1-2 1-2 1-2-1-2 2-2 1-2-1-2 3-2 3-2 0-2 1-2 0-2 0-2 0-2-7-2-4-2 0-2 3-2 0-2 1-2 5-2-1-2 6-2 0-2 9-2-6-2 13-2-1-2-4-2-20-2 4-2-1-2 2-2 1-2 6-2 5-2-10-2-7-2 3-2-1-2 0-2 1-2-1-2 1-2 2-2-3-2 2-2 0-2 1-2-5-2 1-2 3-2-2-2 1-2-2-2 5-2-3-2 1-2-4-2 0-2 4-2-1-2-2-2 4-2 2-2-2-2 8-2 0-2 0-2-2-2-12-2-7-2 1-2 0-2 0-2-1-2 1-2 0-2 0-2-1-2 1-2 0-2 0-2 0-2 0-2 0-2 0-2 0-2 0-2 0-2 0-2-1-2 1-2 0-2-1-2 1-2 1-2 0-2 0-2 0-2 0-2 1-2-2-2 1-2 0-2 1-2 0-2-1-2 1-2 0-2-1-2 0-2 0-2 0-2 0-2 0-2 0-2 0-2 1-2 0-2 0-2-1-2 1-2-1-2 1-2-1-2 0-2 1-2 1-2 0-2 1-2 1-2 1-2 1-2-1-2 1-2 4-2-3-2 1-2 4-2-3-2-6-2-1-2 1-2 4-2-1-2 1-2 5-2-1-2-3-2 1-2 4-2-5-2 0-2 2-2 13-2-15-2 2-2 2-2-1-2 0-2-1-2 2-2-2-2 0-2 1-2-2-2-1-2 2-2-2-2 3-2-3-2 1-2-2-2 5-2-2-2 3-2-1-2-1-2 0-2-3-2 2-2 0-2-1-2-1-2 0-2 4-2 1-2-2-2-2-2 0-2-1-2 3-2 3-2 1-2 6-2-4-2 9-2-4-2-2-2-12-2-4-2 2-2 1-2 1-2-2-2 0-2 2-2-4-2 4-2 0-2-2-2 1-2 0-2 1-2-2-2 1-2 0-2 1-2-2-2-1-2 3-2-2-2 0-2-2-2 4-2 0-2-1-2 1-2-1-2-1-2 0-2 3-2 2-2 0-2 2-2 1-2 10-2 6-2-2-2-11-2-9-2-4-2 1-2 0-2 0-2 1-2-3-2 2-2-1-2 0-2 1-2-1-2-1-2 3-2-1-2 1-2 3-2 1-2-1-2 1-2 2-2 1-2 0-2 1-2-3-2-7-2-1-2 3-2-3-2 1-2 1-2 1-2-1-2 1-2 0-2-3-2 1-2 2-2-2-2-1-2 1-2 0-2 1-2-1-2 0-2 7-2-5-2-2-2 1-2 2-2-2-2-2-2 0-2 2-2 0-2-2-2 4-2-1-2 1-2-3-2 3-2 0-2-3-2 1-2 0-2 0-2-1-2 1-2 1-2-2-2 3-2-2-2 1-2 0-2 1-2-4-2 3-2 1-2-2-2 2-2-1-2-1-2-1-2 2-2-2-2-1-2-4-2 1-2-1-2 0-2 1-2 0-2-1-2 0-2 1-2-1-2 0-2 0-2 1-2 0-2-1-2 1-2-1-2 0-2 1-2 0-2-1-2 1-2-1-2 0-2 0-2 1-2 0-2 0-2-1-2 0-2 1-2-1-2 1-2 0-2-1-2 0-2 1-2-1-2 1-2 0-2-1-2 0-2 0-2 1-2 0-2 1-2 0-2 1-2-1-2 0-2 2-2-2-2 3-2 1-2 0-2 2-2-1-2 1-2 1-2 1-2-2-2 2-2 4-2-2-2 7-2 0-2 2-2 1-2 3-2 5-2-3-2-3-2-3-2-1-2-9-2 1-2-2-2-1-2 1-2-1-2 1-2 0-2 2-2 1-2 0-2 2-2 11-2-5-2 11-2-1-2-4-2-17-2-1-2 3-2 4-2-7-2 1-2-1-2 0-2 0-2 2-2 0-2-2-2 4-2-5-2 4-2-1-2 3-2-6-2 3-2-2-2-1-2 5-2-1-2-4-2-1-2 2-2 2-2 1-2 0-2-2-2 0-2 0-2 2-2-2-2-2-2 0-2 1-2-2-2 0-2-7-2-1-2 1-2-1-2 0-2 1-2-1-2 1-2 0-2-1-2 1-2 0-2-1-2 0-2 0-2 1-2 0-2 0-2-1-2 1-2 0-2-1-2 1-2-1-2 0-2 0-2 0-2 0-2 0-2 0-2 0-2 0-2 0-2 0-2 0-2 0-2 0-2 0-2 0-2 0-2 0-2 0-2 0-2 0-2 0-2 0-2 0-2 0-2 0-2 0-2 0-2 0-2 0-2 0-2 0-2 0-2-1-2 1-2 0-2 0-2 0-2 0-2-1-2 1-2 0-2 0-2 0-2 0-2-1-2 1-2 0-2 0-2 0-2 0-2 0-2 0-2 0-2 0-2 0-2 0-2 0-2 0-2 0-2 0-2 0-2-1-2 1z" fill="#3d3dd0"/><path d="M573 48l2 0 2 0 2 0 2 0 2 0 2 0 2 0 2 0 2 0 2 0 2 0 2 0 2 0 2 0 2 0 2 0 2 0 2 0 2 0 2 0 2 0 2 0 2 0 2 0 2 0 2 0 2 0 2 0 2 0 2 0 2 0 2 0 2 0 2 0 2 0 2 0 2 0 2 0 2 0 2 0 2 0 2 0 2 0 2 0 2 0 2 0 2 0 2 0 2 0 2 0 2 0 2 0 2 0 2 0 2 0 2 0 2 0 2 0 2 0 2 0 2 0 2 0 2 0 2 0 2 0 2 0 2 0 2 0 2 0 2 0 2 0 2 0 2 0 2 0 2 0 2 0 2 0 2 0 2 0 2 0 2 0 2 0 2 0 2 0 2 0 2 0 2-4 2 1 2-1 2-2 2 1 2 0 2 0 2 0 2 0 2-1 2 0 2 1 2-1 2 2 2 0 2 0 2-3 2 1 2 0 2 0 2 2 2-1 2-1 2 2 2-1 2 0 2-1 2 0 2 2 2 0 2-1 2-1 2 2 2-1 2 0 2 0 2 0 2 0 2 0 2-5 2-4 2 3 2 1 2-1 2 4 2 2 2-1 2 2 2 0 2-1 2 0 2 0 2 1 2-1 2-1 2 1 2-6 2 0 2 0 2-2 2 3 2-4 2 5 2-1 2 3 2 1 2-2 2 2 2 1 2-1 2 1 2 1 2 0 2 1 2 1 2-1 2 1 2 0 2 1 2 0 2-1 2 1 2 1 2 0 2-1 2 1 2 0 2 0 2 0 2 0 2 0 2 0 2 0 2 0 2 0 2 0 2 0 2 0 2 0 2 0 2 0 2 0 2 0 2 0 2 0 2 0 2 0 2 0 2 0 2 0 2 0 2 0 2 0 2 0 2 0 2 0 2 0 2 0 2 0 2 0 2 0 2 0 2 0 2 0 2 0 2 0 2 0 2 0 2 0 2 0 2-2 2 0 2 0 2-1 2 0 2-1 2 0 2 2 2 0 2 0 2 0 2-2 2 1 2 1 2-1 2-1 2 0 2 1 2 0 2 1 2-2 2 1 2 1 2 0 2-1 2-1 2 0 2 2 2 0 2-1 2 0 2 1 2-1 2 0 2 0 2 0 2 1 2 0 2-2 2 2 2 0 2-1 2 1 2-1 2 0 2 1 2 0 2 0 2 0 2 0 2-1 2 1 2-1 2 1 2 0 2 0 2-1 2 0 2 1 2 0 2-1 2-4 2-3 2 4 2-2 2 1 2 2 2 0 2-1 2 2 2 1 2 1 2-1 2 1 2 0 2 0 2-1 2 0 2 0 2 1 2 0 2-1 2 1 2-1 2 0 2-2 2-4 2-3 2 0 2 4 2-3 2 2 2 2 2 1 2 3 2-1 2 1 2 0 2-1 2 0 2 1 2 0 2-1 2 0 2 2 2-2 2 1 2-1 2 0 2 0 2 1 2 0 2-1 2 1 2 0 2 0 2 0 2-1 2 0 2 0 2 2 2-2 2 1 2 0 2-1 2 0 2 1 2-7 2-2 2 1 2 0 2 0 2 2 2 1 2 1 2 4 2 0 2-3 2 2 2-2 2 0 2-1 2 2 2 0 2 2 2-2 2-1 2 1 2-1 2 1 2-1 2 2 2-1 2 0 2 1 2 0 2 0 2-1 2 0 2 0 2 0 2 0 2 1 2-1 2-2 2 2 2 2 2-2 2-1 2 1 2 1 2 0 2-2 2 0 2 1 2 1 2 0 2-3 2 2 2 1 2-1 2 0 2 0 2 4 2-1 2 1 2-4 2-1 2-1 2 4 2 0 2-1 2 1 2 1 2 0 2-1 2 1 2 1 2 0 2 0 2 0 2 0 2 1 2 0 2-1 2 0 2 0 2 1 2-1 2 1 2 0 2-1 2 0 2 1 2 0 2-1 2 0 2 1 2-1 2 1 2-1 2 0 2 1 2 0 2 0 2 0 2 0 2 0 2 0 2 0 2 0 2 0 2 0 2 0 2 0 2 0 2 0 2 0 2 0 2 0 2 0 2 0 2 0 2 0 2 0 2 0 2 0 2 0 2 0 2 0 2 0 2 0 2 0 2 0 2 0 2 0 2-5 2-2 2-2 2-4 2 5 2 2 2 1 2 0 2 2 2-2 2 2 2 0 2-1 2 0 2 1 2-3 2 2 2-1 2-1 2 3 2-1 2-1 2-1 2 2 2 0 2 0 2-1 2 0 2-1 2 2 2-1 2 1 2 0 2 0 2-6 2 2 2-4 2 2 2 5 2-1 2 2 2 1 2-7 2-1 2 1 2-1 2 0 2 2 2 3 2 1 2 0 2 2 2 0 2 2 2 0 2 1 2-1 2-3 2-4 2 0 2 1 2 2 2 1 2 1 2-1 2 0 2 2 2-1 2 0 2 2 2 0 2 0 2 0 2 1 2 0 2 0 2 0 2 0 2 0 2 0 2 0 2 0 2-1 2 1 2 0 2 0 2-1 2 1 2-1 2 1 2-1 2 1 2 0 2 0 2 0 2 0 2 0 2 0 2 0 2 0 2 0 2 0 2 0 2 0 2 0 2 0 2 0 2 0 2 0 2 0 2 0 2 0 2 0 2 0 2 0 2 0 2 0 2 0 2 0 2 0 2 0 2 0 2 0 2 0 2 0 2 0 2 0 2 0 2 0 2 0 2 0 2-1 2 0 2-1 2 1 2 0 2-1 2 0 2-1 2 1 2 1 2 0 2-1 2 0 2 0 2 0 2 1 2 0 2 0 2-1 2 0 2 0 2 1 2-1 2 0 2 1 2-1 2 0 2 1 2-1 2 0 2 1 2 0 2-1 2 1 2-1 2 1 2 0 2-1 2 1 2 0 2 0 2-2 2 0 2 1 2 0 2-2 2 0 2 2 2-1 2 1 2-1 2 0 2 1 2-2 2 0 2 0 2 0 2 2 2 0 2-1 2 0 2 1 2-2 2 1 2-4 2-2 2-2 2 1 2 2 2 4 2 0 2 0 2 1 2-1 2 1 2 2 2 0 2-1 2 0 2 0 2 0 2 1 2 0 2 0 2 0 2-1 2 1 2-2 2-7 2 1 2-4 2 4 2 3 2-1 2 3 2 0 2 1 2 0 2 0 2 0 2 0 2-1 2 1 2-2 2 1 2 1 2-1 2 1 2 0 2-1 2 2 2-2 2 1 2 1 2-2 2 0 2 0 2 0 2 0 2 0 2 1 2 0 2-1 2 1 2 0 2-1 2 0 2 0 2-9 2 1 2-1 2 3 2 3 2 1 2 0 2-1 2 2 2 1 2-1 2-1 2 0 2-1 2 3 2-2 2 2 2 0 2 0 2 0 2-1 2 2 2-1 2-3 2 2 2 0 2 1 2-1 2-1 2 0 2 0 2 0 2 0 2 1 2 1 2-2 2 0 2 1 2 1 2-1 2 0 2 1 2 0 2-1 2 0 2-1 2 2 2-1 2-1 2 2 2-2 2 0 2 1 2-1 2 0 2 0 2 0 2 6 2-2 2-2 2-2 2 1 2-3 2 1 2 3 2 2 0 7-2 2-2 3-2 1-2-3-2 1-2-2-2-2-2-2-2 6-2 0-2 0-2 0-2-1-2 1-2 0-2-2-2 2-2-1-2-1-2 2-2-1-2 0-2-1-2 0-2 1-2 0-2-1-2 1-2 1-2 0-2-2-2 1-2 1-2 0-2 0-2 0-2 0-2-1-2-1-2 1-2 0-2 2-2-3-2-1-2 2-2-1-2 0-2 0-2 0-2 2-2-2-2 3-2-1-2 0-2-1-2-1-2 1-2 2-2-1-2 0-2 1-2 3-2 3-2-1-2 1-2-9-2 0-2 0-2-1-2 0-2 1-2-1-2 0-2 1-2 0-2 0-2 0-2 0-2 0-2-2-2 1-2 1-2-2-2 2-2-1-2 0-2 1-2-1-2 1-2 1-2-2-2 1-2-1-2 0-2 0-2 0-2 0-2 1-2 0-2 3-2-1-2 3-2 4-2-4-2 1-2-7-2-2-2 1-2-1-2 0-2 0-2 0-2 1-2 0-2 0-2 0-2-1-2 0-2 2-2 1-2-1-2 1-2 0-2 0-2 4-2 2-2 1-2-2-2-2-2-4-2 1-2-2-2 1-2 0-2-1-2 0-2 2-2 0-2 0-2 0-2-2-2 1-2 0-2-1-2 1-2-1-2 2-2 0-2-2-2 0-2 1-2 0-2-2-2 0-2 0-2 1-2-1-2 0-2 1-2-1-2 1-2-1-2 0-2 1-2 0-2-1-2 1-2 0-2-1-2 1-2 0-2-1-2 1-2 0-2 0-2-1-2 0-2 0-2 1-2 0-2 0-2 0-2-1-2 0-2 1-2 1-2-1-2 0-2-1-2 0-2 1-2-1-2 0-2-2-2 1-2-1-2 0-2 0-2 1-2 0-2-1-2 0-2 0-2 0-2 0-2 0-2 0-2 1-2 0-2 0-2-1-2 0-2 1-2 0-2-1-2 1-2 0-2 0-2 0-2 0-2 0-2-1-2 0-2 1-2 0-2 0-2 0-2 0-2 0-2 0-2 0-2 0-2 0-2 1-2-1-2 1-2-1-2 1-2-1-2 0-2 0-2 1-2-1-2 0-2 0-2 0-2 0-2 0-2 0-2 0-2 0-2 1-2 0-2 0-2 0-2 2-2 0-2-1-2 2-2 0-2-1-2 1-2 1-2 2-2 1-2 0-2-4-2-3-2-1-2 1-2 0-2 2-2 0-2 2-2 0-2 1-2 3-2 2-2 0-2-1-2 1-2-1-2-7-2 1-2 2-2-1-2 5-2 2-2-4-2 2-2-6-2 0-2 0-2 1-2-1-2 2-2-1-2 0-2-1-2 0-2 0-2 2-2-1-2-1-2-1-2 3-2-1-2-1-2 2-2-3-2 1-2 0-2-1-2 0-2 2-2-2-2 2-2 0-2 1-2 2-2 5-2-4-2-2-2-2-2-6-2 1-2 0-2 0-2 0-2 0-2 0-2 0-2 0-2 0-2-1-2 0-2 1-2 0-2 0-2 0-2 0-2 0-2-1-2 1-2-1-2 1-2 0-2 0-2 0-2 0-2 0-2 0-2 0-2 0-2 0-2 0-2 0-2 0-2 1-2 0-2-1-2 1-2-1-2 1-2 0-2-1-2 0-2 1-2 0-2-1-2 0-2 1-2-1-2 1-2 0-2 0-2-1-2 0-2 1-2 0-2 0-2 0-2 0-2 1-2 1-2-1-2 0-2 1-2 1-2-1-2 0-2 4-2-1-2-1-2-4-2 1-2-1-2 4-2 0-2 0-2-1-2 1-2 2-2-3-2 0-2 1-2 1-2 0-2-2-2 0-2 1-2 1-2-1-2-2-2 2-2 2-2-2-2-1-2 1-2 0-2 0-2 0-2 0-2-1-2 0-2 0-2 1-2 0-2-1-2 2-2-1-2 1-2-1-2 1-2-1-2-2-2 2-2 0-2 2-2-1-2 0-2-2-2 2-2-3-2 0-2 4-2 1-2 1-2 2-2 0-2 0-2 1-2-2-2-7-2 1-2 0-2-1-2 0-2 1-2-2-2 2-2 0-2 0-2-1-2 0-2 0-2 0-2 1-2-1-2 0-2 1-2 0-2 0-2-1-2 1-2-2-2 2-2 0-2-1-2 0-2 1-2 0-2-1-2 0-2 1-2-1-2 3-2 1-2 2-2 2-2-3-2 4-2 0-2-3-2-4-2-2-2 0-2-1-2 1-2-1-2 0-2 1-2 0-2 0-2-1-2 0-2 0-2 1-2-1-2 1-2 1-2 2-2-1-2 0-2 2-2 1-2-2-2 4-2-3-2-4-2-1-2 0-2 1-2 0-2-1-2 0-2 0-2 1-2-1-2 1-2-1-2 0-2 0-2 0-2 0-2 1-2 0-2-1-2 1-2-1-2 0-2 2-2-2-2 0-2 1-2 0-2 0-2 0-2-1-2 1-2 0-2-1-2 0-2 2-2 0-2-1-2-1-2 0-2 1-2 1-2-2-2 1-2 0-2 1-2 0-2-1-2-1-2 1-2 1-2-2-2 0-2 0-2 0-2 2-2 0-2-1-2 0-2-1-2 0-2 0-2-2-2 0-2 0-2 0-2 0-2 0-2 0-2 0-2 0-2 0-2 0-2 0-2 0-2 0-2 0-2 0-2 0-2 0-2 0-2 0-2 0-2 0-2 0-2 0-2 0-2 0-2 0-2 0-2 0-2 0-2 0-2 0-2 0-2 0-2 0-2 0-2 0-2 0-2 0-2 0-2 0-2 0-2 0-2 0-2 0-2 1-2-1-2 0-2 1-2 1-2-1-2 0-2 1-2 0-2 1-2-1-2 1-2 1-2 0-2 1-2 1-2-1-2 1-2 2-2-2-2 1-2 3-2-1-2 5-2-4-2 3-2-2-2 0-2 0-2-6-2 1-2-1-2-1-2 1-2 0-2 0-2-1-2 0-2 2-2-1-2 2-2 4-2-1-2 1-2 3-2-4-2-5-2 0-2 0-2 0-2 0-2 0-2-1-2 2-2-1-2-1-2 0-2 2-2 0-2-1-2 0-2-1-2 2-2-1-2-1-2 2-2 0-2 0-2 1-2-3-2 0-2 0-2 2-2-1-2 1-2 0-2-1-2 0-2 0-2 0-2 0-2 1-2-2-2-1-2 1-2-5-2 0-2 0-2 1-2 0-2-1-2 0-2 0-2 1-2 0-2 0-2 0-2 0-2 0-2-1-2 0-2 1-2 0-2 0-2 0-2-1-2 0-2 1-2-1-2 0-2 0-2 1-2-1-2 0-2 0-2 0-2 0-2 0-2 0-2 0-2 0-2 0-2 0-2 0-2 0-2 0-2 0-2 0-2 0-2 0-2 0-2 0-2 0-2 0-2 0-2 0-2 0-2 0-2 0-2 0-2 0-2 0-2 0-2 0-2 0-2 0-2 0-2 0-2 0-2 0-2 0-2 0-2 0-2 0-2 0-2 0-2 0-2 0-2 0-2 0-2 0-2 0-2 0-2 0-2 0-2 0-2 0-2 0-2 0-2 0-2 0-2 0z" fill="#7070de"/></g></svg>
<div style="left:286px;top:146.1px;width:59px;height:1.4px;background:#94949e"></div>
<div style="left:286px;top:200.6px;width:59px;height:1.4px;background:#94949e"></div>
<div style="left:200px;top:230.5px;width:1061.5px;height:106.0px;background:#3e3e44"></div>
<div style="left:200.5px;top:230.5px;width:65px;height:105.5px;background:#fafafa;border:1px solid #2c2c2c"></div>
<div style="left:201px;top:231.5px;width:12.3px;height:11px;background:#dfe3ec;border-right:1px solid #c8c8c8;border-bottom:1px solid #bcbcbc"></div>
<svg style="position:absolute;left:201px;top:231.5px;" width="12" height="11" viewBox="0 0 12 11"><path d="M4 3.2 L8.3 7.5 M8.3 3.2 L4 7.5" stroke="#222" stroke-width="1.2"/></svg>
<div style="left:213.5px;top:231.5px;width:51.5px;height:11px;background:#dfe3ec;border-bottom:1px solid #bcbcbc"></div>
<div class="t" style="left:216.00px;top:232.68px;font-size:8.6px;line-height:9.89px;color:#141414;transform:scaleX(0.930);transform-origin:0 0;">Air</div>
<svg style="position:absolute;left:257px;top:234px;" width="8" height="6" viewBox="0 0 8 6"><path d="M1 1 H7 L4 5 Z" fill="#111"/></svg>
<div style="left:201px;top:243px;width:32.5px;height:11.5px;background:#dfe3ec;border-right:1px solid #b8b8b8;border-bottom:1px solid #bcbcbc"></div>
<div style="left:233.5px;top:243px;width:31.5px;height:11.5px;background:#dfe3ec;border-bottom:1px solid #bcbcbc"></div>
<div class="t" style="left:204.30px;top:244.58px;font-size:8.6px;line-height:9.89px;color:#141414;transform:scaleX(0.837);transform-origin:0 0;">Silencer</div>
<div class="t" style="left:241.49px;top:244.58px;font-size:8.6px;line-height:9.89px;color:#141414;transform:scaleX(0.930);transform-origin:0 0;">Solo</div>
<div class="t" style="left:209.50px;top:255.51px;font-size:6.5px;line-height:7.47px;color:#444;">-</div>
<div class="t" style="left:254.50px;top:255.55px;font-size:7px;line-height:8.05px;color:#222;">+</div>
<div style="left:209px;top:267.5px;width:50.5px;height:1px;background:#8a8a8a"></div>
<div style="left:209px;top:265.5px;width:1px;height:2px;background:#aaa"></div>
<div style="left:214px;top:265.5px;width:1px;height:2px;background:#aaa"></div>
<div style="left:219px;top:265.5px;width:1px;height:2px;background:#aaa"></div>
<div style="left:224px;top:265.5px;width:1px;height:2px;background:#aaa"></div>
<div style="left:229px;top:265.5px;width:1px;height:2px;background:#aaa"></div>
<div style="left:234px;top:265.5px;width:1px;height:2px;background:#aaa"></div>
<div style="left:239px;top:265.5px;width:1px;height:2px;background:#aaa"></div>
<div style="left:244px;top:265.5px;width:1px;height:2px;background:#aaa"></div>
<div style="left:249px;top:265.5px;width:1px;height:2px;background:#aaa"></div>
<div style="left:254px;top:265.5px;width:1px;height:2px;background:#aaa"></div>
<div style="left:259px;top:265.5px;width:1px;height:2px;background:#aaa"></div>
<svg style="position:absolute;left:231.0px;top:263.0px;" width="9" height="9" viewBox="0 0 9 9"><circle cx="4.5" cy="4.5" r="3.1" fill="#7474e2" stroke="#5555c8" stroke-width="0.7"/><circle cx="4.5" cy="4.5" r="1" fill="#b8b8f0"/></svg>
<div class="t" style="left:209.00px;top:275.59px;font-size:7.5px;line-height:8.62px;color:#333;">G</div>
<div class="t" style="left:253.50px;top:275.59px;font-size:7.5px;line-height:8.62px;color:#333;">D</div>
<div style="left:209px;top:286.5px;width:50.5px;height:1px;background:#8a8a8a"></div>
<div style="left:209px;top:284.5px;width:1px;height:2px;background:#aaa"></div>
<div style="left:214px;top:284.5px;width:1px;height:2px;background:#aaa"></div>
<div style="left:219px;top:284.5px;width:1px;height:2px;background:#aaa"></div>
<div style="left:224px;top:284.5px;width:1px;height:2px;background:#aaa"></div>
<div style="left:229px;top:284.5px;width:1px;height:2px;background:#aaa"></div>
<div style="left:234px;top:284.5px;width:1px;height:2px;background:#aaa"></div>
<div style="left:239px;top:284.5px;width:1px;height:2px;background:#aaa"></div>
<div style="left:244px;top:284.5px;width:1px;height:2px;background:#aaa"></div>
<div style="left:249px;top:284.5px;width:1px;height:2px;background:#aaa"></div>
<div style="left:254px;top:284.5px;width:1px;height:2px;background:#aaa"></div>
<div style="left:259px;top:284.5px;width:1px;height:2px;background:#aaa"></div>
<svg style="position:absolute;left:254.0px;top:282.0px;" width="9" height="9" viewBox="0 0 9 9"><circle cx="4.5" cy="4.5" r="3.1" fill="#7474e2" stroke="#5555c8" stroke-width="0.7"/><circle cx="4.5" cy="4.5" r="1" fill="#b8b8f0"/></svg>
<div class="t" style="left:203.60px;top:296.50px;font-size:7.6px;line-height:8.74px;color:#333;transform:scaleX(0.954);transform-origin:0 0;">Stéréo, 22050Hz</div>
<div class="t" style="left:203.60px;top:304.70px;font-size:7.6px;line-height:8.74px;color:#333;transform:scaleX(0.964);transform-origin:0 0;">32 bits flottant</div>
<div style="left:201px;top:324.0px;width:12px;height:11px;background:#dfe3ec"></div>
<svg style="position:absolute;left:201px;top:324.0px;" width="12" height="11" viewBox="0 0 12 11"><path d="M2.5 8 L6 4.5 L9.5 8 Z" fill="#111"/></svg>
<div style="left:214px;top:324.0px;width:39px;height:11px;background:#dfe3ec;border-right:1px solid #c4c4c4"></div>
<div class="t" style="left:218.50px;top:325.38px;font-size:8.6px;line-height:9.89px;color:#141414;transform:scaleX(0.848);transform-origin:0 0;">Sélection</div>
<div style="left:265.5px;top:231px;width:20.5px;height:104.5px;background:#fbfbfb"></div>
<div class="t" style="left:272.00px;top:232.47px;font-size:8.5px;line-height:9.77px;color:#111;transform:scaleX(0.931);transform-origin:0 0;font-weight:bold">1,0</div>
<div class="t" style="left:272.00px;top:251.37px;font-size:8.5px;line-height:9.77px;color:#111;transform:scaleX(0.931);transform-origin:0 0;font-weight:bold">0,0</div>
<div class="t" style="left:269.00px;top:271.67px;font-size:8.5px;line-height:9.77px;color:#111;transform:scaleX(0.956);transform-origin:0 0;font-weight:bold">-1,0</div>
<div style="left:279px;top:256px;width:7px;height:1px;background:#444"></div>
<div style="left:283px;top:244px;width:3px;height:1px;background:#666"></div>
<div style="left:283px;top:268px;width:3px;height:1px;background:#666"></div>
<div class="t" style="left:272.00px;top:286.97px;font-size:8.5px;line-height:9.77px;color:#111;transform:scaleX(0.931);transform-origin:0 0;font-weight:bold">1,0</div>
<div class="t" style="left:272.00px;top:305.87px;font-size:8.5px;line-height:9.77px;color:#111;transform:scaleX(0.931);transform-origin:0 0;font-weight:bold">0,0</div>
<div class="t" style="left:269.00px;top:326.17px;font-size:8.5px;line-height:9.77px;color:#111;transform:scaleX(0.956);transform-origin:0 0;font-weight:bold">-1,0</div>
<div style="left:279px;top:310px;width:7px;height:1px;background:#444"></div>
<div style="left:283px;top:298px;width:3px;height:1px;background:#666"></div>
<div style="left:283px;top:323px;width:3px;height:1px;background:#666"></div>
<div style="left:265.5px;top:281px;width:20.5px;height:1px;background:#b0b0b0"></div>
<div style="left:286px;top:231px;width:975px;height:50px;background:#d9d9d9"></div>
<div style="left:286px;top:231px;width:798.5px;height:50px;background:#c8c8c8"></div>
<div style="left:1084px;top:231px;width:1px;height:50px;background:#404040"></div>
<svg style="position:absolute;left:0px;top:231px;left:0" width="1085" height="50" viewBox="0 0 1085 50"><g transform="scale(.5)"><path d="M573 48l2 0 2 0 2 0 2 0 2 0 2-2 2 1 2 0 2 0 2 1 2-1 2-1 2 0 2-2 2 0 2 2 2 0 2-2 2 0 2 1 2-3 2 1 2 0 2 1 2-4 2 3 2-7 2 6 2 1 2-1 2 1 2 1 2-3 2 3 2-1 2 0 2-2 2-1 2 5 2-4 2 2 2 0 2-2 2-1 2 1 2 2 2-4 2 4 2 0 2 0 2-3 2 2 2-2 2-1 2 5 2-4 2 3 2 1 2-3 2 1 2 0 2-2 2 2 2-1 2 2 2 1 2-3 2 4 2-3 2 2 2 0 2-3 2 2 2-3 2 2 2-1 2 1 2 0 2 1 2-3 2 3 2 1 2-1 2 0 2-2 2 1 2-2 2 1 2 3 2-1 2 0 2 1 2 0 2-3 2 4 2-3 2 3 2-2 2 0 2-2 2 3 2-4 2 0 2 4 2-4 2 0 2 2 2 0 2-1 2 2 2 0 2 1 2-4 2-1 2 1 2 3 2 1 2-3 2 0 2-1 2 3 2-2 2 1 2-1 2 1 2 0 2 0 2-2 2 1 2 3 2-2 2 2 2-2 2 2 2-2 2 2 2-2 2 0 2 1 2-1 2-1 2 0 2 2 2-1 2-2 2 1 2 3 2-2 2 0 2-1 2 3 2-4 2 1 2 1 2 1 2 0 2-3 2 2 2 0 2-3 2-1 2 1 2 1 2-1 2 2 2-1 2-1 2 2 2-1 2 3 2-1 2 2 2-3 2 1 2-1 2 1 2 0 2 0 2 0 2 1 2-2 2 0 2 3 2-4 2 2 2 0 2-1 2 3 2-3 2 3 2 0 2-1 2 0 2 1 2-1 2 0 2 1 2-2 2 1 2 0 2-2 2 2 2 1 2-2 2 2 2-1 2 0 2 0 2-9 2 7 2 0 2 1 2 1 2 1 2-1 2-1 2 1 2 0 2 1 2-3 2 1 2-1 2-1 2 1 2 4 2-19 2 18 2-3 2 3 2-4 2 4 2-3 2 3 2-1 2 1 2-1 2 1 2-3 2-3 2 4 2-1 2 3 2 0 2-2 2-1 2-1 2 0 2-1 2 3 2-1 2 2 2-9 2 6 2 0 2-1 2 1 2 0 2-1 2 3 2-1 2-7 2 9 2-2 2 1 2 1 2-2 2 1 2 1 2-9 2 7 2 0 2 2 2 1 2 0 2-3 2 3 2-2 2-1 2 1 2-1 2 3 2-2 2-2 2 4 2 0 2-1 2-2 2 0 2-1 2 3 2 1 2-3 2 0 2 3 2-1 2-2 2-1 2 3 2 1 2-3 2-1 2 2 2 1 2 0 2-2 2-1 2 2 2 0 2 2 2-4 2-2 2 6 2-2 2 0 2 2 2-4 2 1 2 2 2 0 2-1 2 0 2-1 2 1 2 2 2-3 2 3 2-3 2 0 2 1 2 1 2 1 2-3 2 3 2-2 2 2 2-1 2 0 2-1 2 0 2-1 2 3 2-4 2 4 2-3 2 0 2 1 2 0 2 3 2-4 2 2 2-1 2 2 2 0 2-4 2 0 2 4 2 0 2-1 2 0 2-2 2 0 2 1 2-1 2 0 2 2 2 0 2-1 2-1 2 3 2-2 2 1 2 0 2 0 2-3 2 3 2-3 2-1 2 0 2 1 2 2 2-4 2 5 2-3 2 1 2 1 2-16 2 15 2 0 2-7 2 6 2 1 2 2 2-1 2 1 2 1 2-3 2 3 2 0 2-1 2 0 2 0 2 0 2 0 2 0 2 0 2-1 2-1 2 3 2-1 2-3 2 4 2-3 2-1 2 3 2-1 2 2 2-2 2 0 2-2 2 5 2-3 2 1 2-2 2-1 2 2 2 3 2-2 2 0 2-1 2-1 2 1 2-1 2-1 2 3 2 1 2-1 2 2 2-5 2 4 2-1 2 0 2 1 2-4 2 3 2-3 2 3 2-2 2 1 2 2 2 0 2-3 2 3 2-8 2 6 2-2 2 0 2 2 2-1 2 1 2 0 2 0 2 3 2-4 2 3 2-4 2 1 2 1 2 0 2-1 2 3 2-1 2-3 2 4 2-2 2 2 2-3 2 2 2-2 2 0 2 0 2 2 2-2 2 4 2-1 2-3 2 1 2 2 2 0 2-3 2 1 2 2 2-1 2 0 2 1 2-3 2 3 2-4 2 1 2 3 2-1 2 0 2-2 2-1 2 0 2 4 2 0 2-4 2 0 2 4 2 0 2 0 2-2 2 2 2-1 2 1 2-2 2 1 2 1 2-4 2 1 2 1 2 1 2-2 2 2 2-2 2 2 2-2 2 3 2-4 2 4 2 0 2 1 2-1 2-1 2-2 2 3 2-1 2-2 2 1 2 0 2 1 2-2 2 1 2-1 2-1 2 0 2 0 2-1 2 1 2 0 2 1 2 2 2-4 2 1 2-10 2 13 2-2 2-1 2 0 2 3 2-2 2 2 2-2 2 0 2 0 2 3 2 0 2-1 2-3 2 2 2 0 2-1 2 3 2-3 2 1 2-2 2 4 2 0 2-2 2 2 2-2 2-1 2 2 2 1 2 1 2-1 2-3 2 3 2-6 2 2 2 2 2 0 2 1 2 2 2-3 2-1 2 4 2-2 2 1 2-2 2 0 2-1 2 3 2-2 2 1 2-2 2 1 2 1 2 1 2-4 2 2 2 1 2 0 2-2 2 3 2 0 2 0 2-3 2 2 2-2 2 1 2 1 2 1 2-2 2-1 2 1 2-1 2 3 2-3 2 3 2 0 2-1 2-2 2-13 2 15 2-2 2 0 2 2 2-1 2 2 2 0 2-2 2-1 2-1 2 3 2-1 2 2 2 0 2-4 2 3 2 1 2-3 2 1 2 0 2 2 2 0 2-3 2 2 2-1 2 2 2 0 2-1 2-2 2 2 2-1 2 2 2-2 2 2 2-4 2 2 2-1 2 0 2 3 2-1 2-1 2-2 2 0 2-2 2 3 2 1 2-1 2 0 2-1 2 0 2-1 2 0 2 0 2 1 2 0 2 0 2 3 2-3 2 2 2-2 2-1 2 3 2-1 2 3 2 0 2 0 2-3 2 0 2 3 2-2 2-1 2 0 2-1 2-2 2 5 2 1 2-1 2-2 2-1 2 1 2 0 2 1 2 1 2-1 2 2 2-8 2 6 2-2 2 1 2 4 2-4 2 1 2 0 2 2 2 0 2-1 2-2 2 2 2 0 2 1 2-3 2 3 2-1 2-2 2 1 2 3 2-1 2-1 2-2 2 1 2 2 2-1 2-3 2 2 2-2 2 3 2-4 2 0 2 3 2-1 2-1 2 2 2 0 2-3 2 0 2 2 2 3 2-1 2-3 2 1 2 2 2-2 2 3 2-2 2-2 2 2 2 0 2 1 2-1 2 1 2 0 2 1 2-3 2 1 2 3 2-1 2 0 2-1 2 0 2-2 2 1 2 1 2 1 2-3 2 1 2-1 2-17 2 19 2-1 2 3 2-2 2 0 2-1 0 17-2 0-2 0-2-3-2 1-2 0-2 19-2-19-2 1-2 0-2-1-2-1-2 3-2 0-2-2-2 1-2-2-2 2-2-1-2 1-2-1-2 2-2-2-2-1-2 2-2 1-2-2-2 2-2 0-2-1-2-1-2 1-2 0-2 1-2 1-2 0-2-2-2 1-2-1-2 4-2-5-2 4-2 0-2-3-2 1-2 1-2 2-2-4-2 2-2-1-2 2-2-4-2-1-2 4-2-1-2-1-2 0-2 0-2 0-2 0-2-2-2 1-2 1-2-2-2 3-2 0-2 0-2-3-2 2-2-2-2 1-2 2-2-1-2-1-2 0-2 2-2-2-2 7-2-8-2 2-2 0-2-1-2 2-2-1-2 0-2 1-2-2-2 0-2 0-2 4-2-4-2 2-2 0-2-1-2 0-2 1-2 0-2-2-2 0-2 1-2 1-2 1-2-2-2 3-2-2-2 1-2 0-2 0-2 1-2-1-2-1-2 1-2 0-2 0-2-2-2 0-2 0-2-1-2 3-2 2-2-4-2 1-2-2-2 1-2 1-2 0-2-1-2 0-2 1-2-1-2-1-2 1-2-2-2 3-2 0-2-3-2 1-2 1-2 1-2 0-2 0-2-1-2-2-2 1-2-1-2 1-2 0-2 0-2 0-2 1-2 0-2-1-2-1-2 1-2 0-2 1-2-1-2 1-2-1-2-1-2 2-2 1-2 0-2 10-2-12-2 1-2-1-2-1-2 3-2-2-2 2-2-2-2 1-2-1-2 0-2-1-2 2-2 2-2-3-2 2-2-1-2-1-2 1-2 1-2-1-2 0-2-1-2 2-2-3-2 0-2 1-2 2-2-1-2-1-2 0-2 0-2 0-2 1-2-1-2-1-2-1-2 3-2-2-2 1-2 2-2-2-2 2-2-2-2 4-2-3-2 1-2-4-2 2-2 1-2-1-2 2-2-1-2-1-2 0-2 0-2 1-2 2-2-1-2-2-2-1-2 2-2-1-2 0-2 3-2-3-2 1-2 0-2 0-2 0-2-1-2 1-2 1-2-2-2 2-2 1-2 0-2-3-2 12-2-12-2 4-2-1-2-3-2 4-2-1-2 0-2 0-2 0-2-1-2-2-2 0-2 1-2-1-2 2-2-3-2 3-2-1-2-1-2 2-2 0-2-1-2-2-2 1-2 0-2 2-2-2-2 0-2-1-2 3-2-2-2 1-2-2-2 3-2-1-2-1-2 1-2-2-2 3-2-1-2 0-2 0-2-1-2-1-2 0-2 3-2 1-2-3-2-1-2 0-2 4-2-1-2-2-2 2-2-2-2 0-2 1-2 0-2-1-2 3-2-3-2 1-2 1-2-1-2-2-2 2-2-2-2 1-2 2-2-2-2-1-2 1-2 0-2 0-2 2-2-2-2 1-2 0-2-1-2 1-2 1-2-2-2 3-2-2-2-1-2 0-2 2-2-2-2 2-2 0-2-1-2 0-2 0-2-1-2 0-2 0-2 2-2 0-2-1-2-1-2 0-2 7-2-7-2 1-2 0-2-1-2 1-2 0-2 1-2 0-2-1-2-1-2-2-2 2-2-1-2 1-2 2-2-4-2 3-2-2-2 2-2 0-2-1-2 0-2 0-2 2-2-2-2 2-2-2-2 2-2-1-2 1-2-3-2 2-2 0-2 2-2-1-2-1-2-2-2 2-2-2-2 2-2-2-2 0-2 3-2-2-2 2-2 0-2-1-2-1-2 0-2 0-2 0-2 1-2 0-2-1-2 2-2-2-2 1-2 0-2-2-2 3-2 0-2-2-2 3-2 6-2-7-2 1-2 13-2-13-2-2-2 0-2 0-2 3-2-2-2 0-2 3-2-3-2-1-2 2-2-2-2 1-2 0-2 0-2-2-2 1-2 1-2 0-2-1-2 1-2-1-2 1-2-2-2 2-2-1-2 0-2-2-2 0-2 1-2 1-2 0-2-1-2 1-2-1-2 1-2-1-2 0-2 0-2 1-2-1-2 1-2 0-2 0-2-1-2 0-2 0-2 0-2-1-2 3-2-2-2 1-2-2-2 1-2 0-2 0-2 2-2 1-2-2-2-2-2 1-2 1-2-1-2 2-2-1-2-2-2 2-2-1-2 0-2 3-2-3-2 2-2-1-2 0-2 3-2-1-2-2-2 1-2 0-2-2-2 0-2-1-2 2-2 1-2-2-2 0-2 0-2 2-2 0-2-1-2-1-2 1-2 0-2 1-2-2-2 0-2 1-2 0-2 0-2 0-2-1-2 0-2 1-2 0-2-2-2 2-2-1-2 1-2-1-2 0-2 0-2-1-2 2-2-1-2 0-2 1-2 9-2-10-2 1-2 1-2-2-2 3-2-1-2 1-2 6-2-8-2 1-2-1-2 3-2 0-2-1-2-1-2 0-2 6-2-8-2 1-2 0-2 0-2 0-2 0-2 0-2 1-2 0-2-1-2-1-2-1-2 7-2-4-2-1-2 0-2 1-2 0-2-2-2 2-2-2-2 1-2 0-2 1-2-2-2 14-2-15-2 1-2 1-2-1-2 0-2 3-2-3-2 0-2 0-2 0-2 1-2-2-2 0-2 2-2 0-2 2-2 7-2-9-2 0-2 1-2 0-2 0-2-1-2 1-2 0-2-2-2 1-2-1-2 1-2-1-2-1-2 1-2 1-2 0-2-1-2 1-2-1-2-1-2 1-2 1-2-1-2 2-2 0-2 0-2-2-2 2-2-3-2 3-2-3-2 0-2 1-2-1-2 1-2-1-2 1-2 2-2-1-2 0-2 0-2 2-2 1-2 0-2 1-2-1-2 0-2-1-2-3-2 2-2-1-2-1-2 1-2-1-2 0-2 0-2 1-2 1-2-1-2-1-2 0-2 2-2-2-2 1-2-1-2 2-2-1-2 0-2-1-2 0-2 2-2-3-2 3-2-3-2 0-2 0-2 3-2-2-2 2-2-1-2 1-2-2-2 1-2-1-2 3-2 0-2-1-2 2-2-4-2 1-2 0-2 1-2 1-2 0-2-2-2 0-2 0-2 0-2 2-2-2-2 2-2-1-2-1-2 1-2-2-2 4-2-4-2 1-2-2-2 1-2 0-2 1-2-1-2 2-2 0-2-2-2 1-2 1-2-1-2-1-2 1-2 0-2-1-2-1-2 3-2-2-2 0-2 3-2-2-2-1-2 2-2-1-2 0-2-1-2 0-2 1-2 0-2-2-2 1-2 0-2 1-2-2-2 3-2 1-2-2-2 0-2 0-2 1-2-2-2 0-2 2-2-1-2 0-2 3-2-3-2 1-2-1-2 1-2 1-2-3-2 1-2 0-2 2-2-3-2-1-2 1-2 1-2 1-2-3-2 2-2 0-2 1-2-3-2 0-2 2-2-2-2 1-2 2-2 0-2 0-2 4-2-7-2 2-2-2-2 1-2 0-2 0-2-2-2 3-2-2-2-1-2-1-2 1-2 1-2-1-2-1-2-1-2 1-2-1-2 0-2 0-2 1-2-2-2 0-2-1-2 1-2 0-2 0z" fill="#3d3dd0"/><path d="M573 49l2 0 2 0 2 0 2 0 2 0 2-1 2 1 2-1 2 0 2 0 2 0 2-1 2 1 2-1 2 0 2 0 2 0 2 0 2 0 2-1 2 1 2 0 2 0 2-1 2 0 2 1 2-1 2-1 2 0 2 1 2-1 2 1 2 0 2 1 2 0 2-2 2 2 2-1 2 0 2 0 2 0 2 1 2-1 2 0 2 0 2-1 2 1 2-1 2 0 2 1 2 0 2-1 2 0 2 0 2 1 2-1 2 1 2 1 2-1 2 1 2-1 2 0 2 1 2-1 2 1 2-1 2 0 2 0 2 0 2 0 2 0 2 1 2-1 2 0 2-1 2 1 2 0 2-1 2 1 2 1 2-1 2 1 2-1 2-1 2 2 2 0 2 0 2-1 2 1 2-1 2 1 2 0 2 0 2-1 2 1 2 0 2 0 2-2 2 1 2 1 2-1 2-1 2 1 2-1 2 2 2-2 2 1 2 0 2 1 2-2 2 2 2-2 2 1 2 0 2-1 2 1 2-1 2 0 2 0 2 0 2 0 2 0 2 0 2 1 2 0 2-1 2 2 2-1 2 0 2 1 2-1 2 0 2 0 2-1 2 1 2 0 2 0 2 0 2 1 2 0 2-1 2-1 2 2 2-1 2 1 2-1 2 0 2 0 2 0 2 0 2 0 2 0 2 1 2-1 2 0 2 0 2-1 2 1 2 0 2 0 2 0 2-1 2 0 2 0 2 0 2 1 2-1 2 0 2 0 2 1 2 1 2-1 2 1 2-1 2 0 2 1 2 0 2-1 2 1 2-1 2 0 2 0 2 1 2-1 2 1 2-1 2 1 2-1 2 1 2-1 2 0 2 0 2 0 2 1 2-2 2 2 2 0 2-1 2 0 2 0 2 0 2 0 2 0 2-1 2 2 2 0 2 0 2-1 2-1 2 1 2-1 2 1 2 0 2 1 2 0 2-1 2 0 2 0 2 0 2 1 2-1 2 0 2 0 2 0 2 1 2-1 2 0 2 0 2 1 2 0 2-1 2 0 2 1 2-2 2 0 2 1 2-1 2 2 2 0 2-1 2 1 2-1 2-1 2 1 2 0 2 0 2 1 2-1 2 0 2-1 2 1 2-1 2 0 2 0 2 0 2 1 2-1 2 0 2 1 2 0 2 0 2 0 2 0 2-1 2 1 2 1 2 0 2 0 2-1 2 0 2 0 2 0 2-1 2 2 2-1 2 0 2-1 2 1 2 0 2 1 2-1 2 0 2 0 2 1 2 0 2-1 2 1 2-1 2 1 2 0 2-1 2-1 2 1 2 0 2 1 2-1 2 0 2-1 2 1 2 0 2 1 2-2 2 0 2 2 2-1 2 0 2 0 2 0 2 0 2 0 2 1 2 0 2-1 2 1 2 0 2-1 2 0 2 0 2 1 2-2 2 2 2-2 2 1 2 1 2-1 2 1 2-1 2 1 2-1 2 0 2 0 2 0 2 0 2-1 2 1 2 1 2-1 2-1 2 0 2 1 2 0 2 0 2 1 2-1 2 0 2 0 2 1 2-1 2 0 2 0 2 0 2 0 2-1 2 2 2 0 2-1 2 0 2 0 2 0 2-1 2 1 2 1 2-1 2-1 2 2 2-1 2 0 2 0 2 1 2-2 2 2 2-2 2 1 2 1 2-2 2 0 2 0 2 0 2 0 2 0 2 1 2 0 2-1 2 0 2 1 2 1 2-1 2 1 2-2 2 1 2 0 2 0 2 0 2 0 2 1 2-1 2 0 2 0 2 0 2 1 2-1 2 1 2-1 2 0 2 1 2-1 2-1 2 1 2-1 2 2 2-1 2 1 2 0 2-1 2-1 2 1 2 0 2-1 2 2 2 0 2-2 2 2 2 0 2-1 2 0 2 0 2 0 2 1 2-1 2 0 2 1 2-1 2 1 2-2 2 0 2 1 2 0 2 0 2 1 2-1 2 1 2 0 2-1 2 1 2-1 2 1 2-1 2 1 2 0 2-1 2-1 2 1 2 0 2 0 2-1 2 2 2 0 2 0 2 0 2-1 2-1 2 2 2-1 2 0 2-1 2 2 2-1 2-1 2 2 2 0 2 0 2-1 2 0 2 1 2 0 2-2 2 1 2 0 2 1 2-1 2 1 2 0 2-2 2 2 2 0 2 0 2-2 2 1 2 1 2 0 2 0 2 0 2-1 2-1 2 2 2 0 2-1 2 0 2 0 2 0 2 1 2-1 2 0 2 0 2 0 2 0 2 0 2 1 2-2 2 1 2 1 2-1 2 0 2 0 2 0 2 1 2-1 2 0 2 0 2 1 2-1 2 0 2-1 2 1 2 0 2 0 2 1 2-1 2-1 2 1 2 0 2 0 2 0 2 0 2 0 2-1 2 2 2-2 2 1 2 0 2 0 2 0 2 0 2 0 2 1 2-1 2 0 2 1 2-2 2 0 2 1 2-1 2 1 2 0 2-1 2 1 2 0 2-1 2 2 2-1 2 0 2-1 2 1 2 0 2 0 2 0 2 0 2 0 2 1 2 0 2-1 2-1 2 2 2 0 2-1 2 0 2 1 2-1 2 1 2-1 2 0 2 0 2 1 2-1 2 1 2-1 2 0 2 1 2 0 2-2 2 2 2-1 2 1 2-1 2 0 2 1 2-2 2 2 2 0 2-1 2 0 2 0 2-1 2 1 2 0 2 0 2 0 2 0 2 1 2-1 2 0 2 0 2 0 2-1 2 2 2-1 2-1 2 2 2-1 2 1 2-2 2 2 2 0 2 0 2-1 2 1 2 0 2-2 2 0 2 1 2 0 2 1 2 0 2-1 2 0 2 0 2 0 2 0 2-1 2 1 2 1 2-1 2-1 2 2 2 0 2-1 2 0 2-1 2 1 2 0 2 1 2-1 2 1 2 0 2-1 2 1 2-2 2 1 2 1 2 0 2 0 2 0 2-1 2 0 2 0 2-1 2 1 2 1 2-2 2 1 2 0 2 1 2 0 2 0 2-1 2-1 2 0 2 0 2 1 2-1 2 1 2-1 2 1 2-1 2-1 2 1 2 1 2 0 2-2 2 2 2-1 2-1 2 1 2 1 2 0 2-1 2 0 2 1 2 0 2 0 2 0 2 1 2 0 2-1 2 1 2-1 2 0 2 1 2-1 2-1 2 0 2 0 2 2 2-1 2 0 2 1 2-1 2-1 2 1 2 0 2 0 2 0 2-1 2 1 2 0 2 0 2 1 2-1 2 0 2 0 2 0 2 0 2 0 2 0 2 0 2 0 2 0 2 0 2 0 2 0 2 0 2 1 2-2 2 1 2 0 2 1 2-2 2 0 2 1 2 0 2-1 2-1 2 2 2-1 2 1 2-1 2 0 2-1 2 1 2 2 2-2 2 2 2 0 2-1 2-1 2 1 2 0 2 0 2 0 2 1 2-1 2 0 2 0 2 0 2 1 2-1 2 1 2-1 2 0 2 1 2 0 2 0 2 0 2 0 2 0 2 0 2 0 2 0 2-1 2 0 2 0 2 1 2 0 2-1 2 1 2-1 2 0 0 8-2 0-2-1-2 1-2-1-2 0-2 1-2 0-2 0-2-1-2 0-2 0-2 0-2 0-2 0-2 0-2 0-2 0-2 1-2 0-2-1-2 1-2-1-2 1-2 0-2 0-2 0-2-1-2 1-2 0-2 0-2 0-2 1-2-1-2-1-2 0-2 2-2-2-2 2-2 1-2-1-2 0-2-1-2 1-2-1-2 2-2-1-2-1-2 0-2 1-2 0-2-2-2 1-2 0-2 1-2-2-2 1-2 0-2 0-2 0-2 0-2 0-2 0-2 0-2 0-2 0-2 0-2 0-2 0-2 0-2-1-2 1-2 0-2 0-2 1-2-1-2 0-2 0-2 0-2 1-2-1-2-1-2 1-2 0-2-1-2 2-2 0-2 0-2-1-2-1-2 1-2 0-2-1-2 1-2-1-2 0-2 1-2 0-2 0-2 0-2 1-2 0-2-1-2 0-2 1-2 1-2-1-2-1-2 2-2-2-2 0-2 1-2 1-2-1-2-1-2 1-2-1-2 1-2-1-2 1-2 0-2 0-2-1-2-1-2 0-2 0-2 1-2 0-2 1-2-2-2 1-2 1-2-1-2 0-2 0-2-1-2 0-2 0-2 0-2 1-2 1-2-2-2 1-2-1-2 0-2 1-2-1-2 1-2 0-2 1-2-1-2 0-2-1-2 0-2 2-2-1-2-1-2 1-2 1-2-1-2 0-2 0-2 0-2 0-2-1-2 0-2 1-2 0-2 1-2 0-2-2-2 0-2 1-2-1-2 0-2 0-2 2-2-2-2 1-2-1-2 2-2-1-2-1-2 2-2-1-2 0-2 0-2 0-2-1-2 1-2 0-2 0-2 0-2 0-2 1-2-1-2 0-2 0-2-1-2 0-2 2-2-2-2 1-2 0-2-1-2 1-2-1-2 2-2-2-2 0-2 1-2 0-2-1-2 1-2-1-2 1-2 0-2 0-2-1-2 1-2-1-2 1-2 0-2-1-2 0-2 2-2-1-2-1-2 0-2 1-2 0-2 0-2 0-2 0-2 0-2 1-2-1-2 0-2-1-2 2-2-1-2 0-2 1-2-1-2 0-2 1-2-1-2 1-2 0-2-2-2 1-2 0-2-1-2 1-2 0-2 0-2 0-2 0-2 0-2 1-2-2-2 2-2-1-2 0-2 0-2 0-2 0-2 0-2 1-2-1-2-1-2 1-2 0-2 0-2 1-2-1-2 0-2-1-2 1-2 0-2 0-2-1-2 1-2 0-2 0-2 0-2-1-2 1-2 1-2-2-2 1-2 0-2 0-2 0-2 0-2 0-2-1-2 1-2 0-2 0-2 0-2-1-2 0-2 2-2-1-2-1-2 0-2 0-2 0-2 1-2 1-2-2-2 0-2 0-2 2-2-2-2 0-2 1-2-1-2 1-2 0-2 1-2-2-2 0-2 1-2 0-2-1-2 0-2 0-2 2-2-1-2-1-2 2-2-1-2 0-2-1-2 2-2-1-2-1-2 0-2 0-2 0-2 2-2-1-2 0-2 0-2 1-2-1-2-1-2 0-2 1-2-1-2 1-2-1-2 1-2-1-2 0-2 1-2-1-2 1-2 0-2 0-2 1-2 0-2-2-2 1-2-1-2 1-2 0-2-1-2 1-2 0-2 0-2 0-2-1-2 0-2 2-2-2-2 0-2 2-2-1-2 0-2 1-2-1-2-1-2 0-2 1-2-1-2 2-2-1-2 1-2-1-2-1-2 1-2 0-2-1-2 1-2-1-2 1-2 0-2 0-2 0-2-1-2 1-2 0-2 0-2 0-2 0-2 1-2-2-2 1-2-1-2 1-2 1-2 0-2-1-2 0-2 1-2 0-2 0-2 0-2 0-2 0-2-2-2 1-2 1-2-2-2 2-2-2-2 1-2 0-2 0-2-1-2 2-2-1-2-1-2 1-2 1-2-1-2 0-2 0-2 0-2-1-2 0-2 2-2-1-2 0-2 0-2 0-2 0-2-1-2 1-2 0-2 0-2-1-2 1-2 0-2 0-2 1-2 0-2-1-2-1-2 1-2 1-2-1-2 0-2 0-2 0-2 0-2-1-2 1-2-1-2 1-2-1-2 1-2 1-2-2-2 2-2-2-2 1-2 0-2 0-2-1-2 0-2 1-2-1-2 0-2 1-2 0-2 0-2 0-2 0-2 0-2-1-2 2-2 0-2-2-2 1-2 0-2 1-2-1-2 0-2-1-2 1-2 0-2 1-2-1-2-1-2 0-2 1-2-1-2 1-2-1-2 0-2 1-2 0-2 0-2-1-2 1-2 0-2 1-2-1-2 0-2-1-2 2-2-1-2 0-2 0-2 0-2-1-2 0-2 0-2 1-2 1-2-1-2 0-2 0-2 0-2 0-2 1-2 0-2-1-2 1-2 0-2 0-2 0-2-1-2 1-2-1-2 0-2-1-2 1-2 0-2 0-2 1-2-1-2-1-2 1-2-1-2 0-2 2-2-1-2 1-2 0-2-2-2 1-2 0-2-1-2 0-2 1-2 0-2 0-2-1-2 1-2 0-2 0-2 0-2-1-2 1-2 0-2 0-2 0-2-1-2 0-2 1-2 0-2 1-2-1-2 1-2-1-2-1-2 0-2 0-2 2-2-1-2 0-2 0-2 0-2 0-2 0-2-1-2 0-2 2-2-2-2 1-2 0-2 0-2 0-2-1-2 1-2-1-2 1-2-1-2 1-2-1-2 1-2 0-2 0-2-1-2 1-2-1-2 0-2 1-2 0-2-1-2 1-2-1-2 1-2 1-2 0-2 0-2-1-2 1-2 0-2 0-2 0-2-1-2 0-2 0-2 0-2 1-2-1-2 0-2 0-2-1-2 1-2 0-2 0-2 0-2 0-2 0-2 0-2-1-2 1-2-1-2 2-2-1-2-1-2 0-2 1-2 0-2 0-2 0-2 1-2-1-2 0-2 0-2-1-2 1-2 0-2-1-2 2-2-1-2 0-2 1-2 0-2 0-2 0-2 0-2 0-2 0-2-1-2 1-2-1-2 0-2 1-2-2-2 2-2-2-2 1-2 0-2 1-2-2-2 2-2-1-2 1-2-1-2-1-2 1-2 1-2-2-2 0-2 0-2 1-2-1-2 0-2 0-2 1-2-1-2 1-2-1-2 0-2 0-2 2-2-1-2-1-2 1-2-1-2 1-2 1-2-1-2 0-2 1-2-1-2 0-2-1-2 1-2 0-2 0-2 0-2 0-2 0-2-1-2 1-2-1-2 1-2 0-2-1-2 1-2-1-2 1-2 1-2-1-2 1-2 0-2 0-2-1-2 0-2 1-2 0-2-1-2 1-2-1-2 0-2 0-2-1-2 1-2 0-2 0-2 0-2-1-2 2-2-2-2 0-2 1-2 0-2 1-2-1-2 1-2 0-2-1-2-1-2 1-2 0-2-1-2 0-2 0-2 1-2-1-2 0-2 0-2 0-2 0-2 0-2-1-2 1-2-1-2 0-2 0-2 0-2-1-2 1-2-1-2 0-2 0-2 0-2 0-2 0z" fill="#7070de"/></g></svg>
<div style="left:286px;top:281px;width:975px;height:4.5px;background:#4a4b52"></div>
<div style="left:286px;top:285.5px;width:975px;height:50px;background:#d9d9d9"></div>
<div style="left:286px;top:285.5px;width:798.5px;height:50px;background:#c8c8c8"></div>
<div style="left:1084px;top:285.5px;width:1px;height:50px;background:#404040"></div>
<svg style="position:absolute;left:0px;top:285.5px;left:0" width="1085" height="50" viewBox="0 0 1085 50"><g transform="scale(.5)"><path d="M573 47l2 0 2 1 2 0 2 0 2-1 2-1 2 1 2-1 2 1 2 0 2-1 2 0 2 0 2 1 2-2 2-1 2 1 2-2 2 0 2 1 2-2 2 2 2 1 2-2 2 2 2-3 2 2 2-4 2 2 2-2 2 1 2 0 2-1 2 2 2-2 2 3 2-2 2-5 2 5 2-3 2-4 2-6 2 10 2 0 2 2 2 1 2 2 2 1 2-3 2-1 2 2 2-1 2 2 2-2 2 2 2 1 2-3 2 0 2 2 2 0 2 1 2 0 2 0 2-2 2 3 2-4 2 3 2-4 2 2 2-2 2 1 2 2 2 1 2 1 2-2 2 0 2-2 2 0 2 3 2-1 2-1 2-4 2 3 2-11 2 10 2 3 2-3 2 4 2-2 2 1 2 2 2-2 2-3 2 2 2-2 2 3 2 1 2-2 2 0 2 1 2 1 2-3 2 2 2-1 2 2 2-1 2-2 2 1 2 1 2 1 2-1 2-1 2-1 2 3 2-4 2 3 2-2 2 2 2-2 2 0 2 3 2-1 2-1 2 1 2 1 2 0 2-3 2 4 2-4 2 2 2 0 2 1 2 0 2-3 2 0 2 0 2 3 2-3 2 3 2-1 2 1 2-1 2 1 2 0 2-3 2 2 2 1 2 0 2 0 2-2 2-1 2 0 2 0 2 0 2 2 2-3 2 0 2 0 2-2 2 1 2 2 2 2 2-1 2 1 2-3 2 3 2 0 2 0 2-3 2 1 2 1 2 2 2-1 2-1 2 1 2-1 2 0 2-2 2 3 2 0 2-3 2 3 2-2 2 4 2-2 2 0 2 1 2 0 2-3 2 1 2 2 2-3 2 2 2-2 2 3 2-3 2 2 2-2 2 3 2-1 2 0 2-1 2 2 2-3 2 2 2 0 2-1 2 0 2-20 2 19 2 0 2 1 2 2 2-1 2-1 2 0 2 0 2 2 2-3 2-1 2 4 2-2 2 1 2-2 2 0 2-2 2-19 2 21 2-2 2 2 2 2 2-2 2 0 2-1 2 2 2 0 2 2 2 0 2-2 2 1 2-1 2 1 2-2 2 0 2-8 2 7 2 1 2 3 2-2 2-2 2 2 2 1 2 1 2-2 2-1 2 0 2 4 2-5 2 3 2-2 2 0 2 0 2 0 2 4 2-1 2-3 2 0 2 2 2-13 2 13 2 1 2-3 2 0 2-1 2 2 2-1 2 4 2-1 2-1 2 1 2-3 2 3 2-4 2-4 2 6 2 2 2 0 2-2 2 2 2-3 2 1 2 0 2 0 2 0 2 1 2 1 2-3 2 0 2 1 2 0 2-1 2 3 2 1 2-4 2 3 2-2 2 1 2 0 2-2 2 0 2 0 2 0 2 0 2 2 2-1 2 3 2-2 2-1 2 0 2 1 2-2 2 4 2-4 2 1 2 2 2-2 2 2 2-2 2 1 2-1 2-1 2 0 2 1 2 1 2 0 2-3 2 2 2-1 2 3 2-3 2 1 2 0 2-2 2 3 2-1 2 0 2 0 2 0 2-3 2 2 2 0 2 2 2-3 2 2 2-4 2 2 2 0 2 3 2-1 2-1 2 1 2-2 2 0 2 1 2 4 2 0 2-1 2-2 2-1 2 0 2 1 2 3 2-2 2 0 2 2 2-5 2 3 2 0 2 1 2-3 2 3 2-2 2 0 2 3 2-5 2-26 2 30 2-2 2-16 2 18 2 1 2-1 2-1 2 1 2-4 2 4 2-3 2 0 2 0 2 1 2-1 2 0 2-1 2 3 2-2 2 1 2 0 2-2 2 3 2 2 2-1 2 0 2 0 2-1 2 0 2 0 2-3 2 5 2-5 2 4 2-4 2 2 2 2 2-1 2 0 2 2 2-1 2 0 2-3 2 1 2-1 2 0 2 1 2 1 2-2 2 4 2-5 2 2 2 0 2-2 2 4 2 0 2-2 2 1 2 1 2 0 2 0 2-1 2-2 2 3 2-1 2 1 2-20 2 17 2-1 2 2 2-1 2 0 2 4 2-1 2-3 2 2 2 1 2-1 2 1 2 0 2-1 2-2 2 2 2-2 2 4 2-3 2 1 2-1 2-1 2 0 2 0 2 1 2 0 2 0 2-1 2 1 2 0 2 3 2-3 2 0 2 2 2-3 2 0 2 1 2 2 2-2 2 2 2 0 2-2 2 0 2 1 2-2 2 1 2 0 2-1 2 0 2 0 2 3 2 1 2-3 2 0 2-1 2 3 2-2 2 0 2 1 2 0 2-1 2 2 2-1 2 1 2-2 2-1 2 0 2 0 2-1 2 5 2-3 2 0 2 1 2-1 2 1 2 1 2-1 2-2 2 2 2-1 2 1 2 0 2 1 2-3 2 3 2 0 2-4 2 4 2-1 2-2 2 1 2 2 2-1 2-7 2 5 2 1 2 2 2-2 2-1 2-7 2 10 2-3 2 0 2 1 2 2 2-1 2 1 2 0 2-3 2 0 2 3 2 0 2 0 2 0 2 0 2-3 2 1 2 2 2-3 2 3 2-3 2 3 2-3 2 3 2-1 2 1 2 0 2-3 2 0 2-2 2 4 2-3 2 1 2 0 2-2 2-5 2 8 2-3 2 2 2 3 2-1 2-2 2-1 2 3 2 0 2 1 2-3 2 2 2 1 2-1 2 0 2-2 2 3 2-2 2 1 2 0 2-1 2 2 2-2 2 2 2 0 2 1 2-2 2 2 2-2 2-2 2 3 2-4 2 1 2 2 2-1 2 0 2-1 2 3 2-2 2-1 2 0 2 0 2 0 2 2 2-1 2 1 2-3 2 2 2 0 2 0 2 3 2-3 2 2 2 0 2-3 2 0 2 3 2-2 2-1 2 0 2 3 2-1 2 1 2-1 2-2 2 2 2 0 2-2 2 1 2 1 2 0 2-3 2 1 2 2 2-1 2 1 2-2 2 3 2 1 2-3 2-2 2 1 2 2 2 1 2 0 2-2 2 2 2-2 2-6 2 7 2 1 2-2 2-1 2 3 2-3 2 2 2 1 2-2 2-1 2 3 2-1 2 1 2-1 2 0 2 1 2-1 2-1 2 0 2 0 2-1 2 3 2-4 2 3 2 1 2-2 2 3 2-3 2 1 2 0 2 2 2-3 2 1 2-1 2-3 2 4 2-2 2-3 2 4 2-3 2 0 2-9 2 12 2 0 2 0 2 0 2 0 2-5 2 5 2-3 2 4 2-4 2 3 2 0 2 1 2-3 2 4 2-1 2 0 2 0 2-2 2 2 2 0 2 0 2-3 2 3 2-2 2 0 2 0 2 3 2-2 2 1 2 1 2-2 2 2 2-3 2-3 2 4 2 0 2 0 2-1 2 2 2-1 2-2 2 2 2 2 2-4 2 2 2-1 2 0 2 1 2 1 2 1 2-1 2-3 2 4 2-1 2-2 2 1 2 2 2-2 2 0 2 2 2-3 2 3 2-1 2-3 2 3 2 1 2 1 2-1 2 0 2-1 2-1 2 0 2 0 2-1 2 1 2-1 0 16-2 2-2-1-2 0-2 1-2 0-2-3-2 0-2 1-2 1-2-1-2 1-2 1-2-3-2 0-2 2-2 0-2 0-2 1-2-3-2 2-2 0-2-2-2 0-2 2-2 1-2-2-2 0-2 1-2 1-2-2-2-1-2 3-2-2-2 2-2-1-2-2-2 1-2 1-2 0-2 1-2-3-2 5-2-2-2-2-2 1-2-1-2-1-2 1-2 0-2 1-2 0-2 0-2-2-2 1-2 1-2 1-2-2-2 2-2-2-2 0-2 2-2-3-2 3-2 1-2-2-2 2-2 0-2-1-2-1-2 2-2 0-2-2-2 3-2-3-2 1-2-2-2 14-2-10-2 1-2-1-2-1-2 0-2 0-2-2-2 1-2-3-2 3-2-1-2-1-2 0-2 1-2-1-2-1-2 1-2 0-2 1-2 0-2 1-2-2-2 1-2-2-2 1-2 1-2 0-2 1-2-2-2 2-2-3-2 2-2-1-2 0-2 0-2 0-2-1-2 1-2 2-2-3-2 2-2 4-2-4-2-1-2-1-2 1-2 0-2 0-2 3-2 0-2-4-2 0-2 2-2 1-2-1-2-1-2 0-2 0-2 2-2-2-2 0-2 1-2 0-2-1-2 0-2 1-2-1-2 2-2-3-2 3-2 1-2-1-2 0-2-3-2 3-2-2-2-1-2 1-2 2-2-2-2 0-2 0-2 1-2 0-2 0-2-1-2 0-2 0-2-1-2 1-2 0-2 1-2-2-2 1-2 0-2 1-2-1-2 1-2 0-2-1-2 0-2 0-2-1-2 0-2 2-2 0-2 1-2-1-2-1-2 1-2 1-2-2-2-1-2 2-2 0-2-2-2 2-2 0-2 0-2 1-2-2-2 1-2-1-2 0-2 1-2-1-2 2-2 1-2 1-2-1-2 5-2-7-2 0-2 3-2-2-2-1-2 1-2-1-2-1-2 0-2-1-2 0-2 1-2 1-2-2-2 2-2-1-2 1-2-1-2 0-2-1-2 0-2 1-2-1-2 2-2 0-2 1-2 0-2-3-2 2-2 0-2-1-2 0-2 2-2 0-2-3-2 11-2-8-2-2-2 1-2 1-2-2-2 6-2-5-2-2-2 2-2-1-2 2-2 0-2-2-2 0-2 1-2-1-2-1-2 1-2 0-2 2-2-3-2 2-2 1-2-2-2 1-2 0-2-1-2 0-2 0-2 0-2 0-2 0-2 3-2-1-2-1-2 1-2-1-2-2-2 1-2 0-2 0-2 0-2 0-2-1-2 2-2-1-2 0-2 1-2-1-2 1-2 0-2 1-2-2-2 2-2 1-2-1-2 0-2-1-2-1-2 0-2 1-2-1-2 2-2 0-2 0-2-1-2 1-2-3-2 0-2 1-2 1-2-1-2 0-2 1-2 1-2-1-2-1-2 1-2 0-2-2-2 1-2 0-2 0-2 1-2-1-2 0-2 0-2-1-2 2-2-2-2 2-2 2-2-4-2 0-2 2-2 1-2 0-2 0-2-2-2 17-2-17-2-1-2 2-2 0-2 0-2 0-2-2-2 1-2 0-2 0-2 1-2-1-2 0-2 2-2-1-2 1-2-2-2-1-2 1-2 2-2-1-2-2-2 3-2-1-2-2-2 0-2 1-2 1-2 1-2-2-2 0-2 0-2-1-2 3-2-2-2 2-2-1-2 0-2-1-2 0-2-1-2 0-2 2-2 0-2-1-2 0-2 2-2-2-2 1-2 0-2 1-2 0-2-3-2 3-2-1-2 1-2-3-2 3-2-2-2-1-2 2-2 0-2 0-2 16-2-18-2 2-2 30-2-29-2-1-2 1-2-1-2-1-2 0-2-1-2 1-2 0-2 2-2-2-2 2-2-1-2-1-2 0-2 2-2-1-2 1-2-2-2-1-2 2-2 1-2 0-2-1-2 1-2-1-2-1-2 0-2 3-2-1-2 2-2 0-2-2-2-1-2 2-2 0-2-1-2-2-2 1-2 2-2-3-2-1-2 3-2-3-2 2-2 1-2-2-2 0-2 0-2 0-2 1-2-1-2 0-2 2-2-2-2 2-2-3-2 3-2-2-2 2-2-1-2-1-2 0-2 0-2 2-2-1-2 1-2-2-2-1-2 1-2 2-2-2-2 2-2-2-2 2-2-1-2-2-2 0-2 3-2-2-2 0-2 1-2-1-2 0-2 3-2-1-2-3-2 0-2 2-2 0-2-1-2 1-2-1-2 1-2-2-2 3-2-2-2 0-2-1-2 2-2 1-2 6-2-7-2 0-2 1-2-1-2-2-2 0-2 0-2 1-2 1-2 0-2-1-2 0-2-1-2 1-2 12-2-11-2-1-2 0-2-1-2 1-2 2-2 0-2 0-2 0-2-3-2 1-2-1-2 3-2 0-2-1-2-1-2 0-2 2-2 0-2-1-2 0-2 0-2 2-2 7-2-8-2-2-2 1-2 0-2 0-2 0-2-1-2 0-2 2-2 0-2 0-2 1-2-2-2 1-2 1-2-2-2 2-2 16-2-15-2-2-2 0-2-1-2 0-2 1-2-2-2 2-2-1-2 1-2 0-2 0-2-2-2 1-2 1-2-1-2 0-2 16-2-16-2 0-2-1-2 1-2 0-2-1-2 2-2-1-2-1-2 0-2 1-2-2-2 1-2 0-2 3-2-1-2-2-2-1-2 0-2 3-2-3-2 0-2 0-2 3-2-1-2 1-2-3-2 3-2 0-2-2-2 2-2-1-2 1-2-2-2 2-2-1-2-1-2 2-2 0-2 0-2-3-2 2-2-1-2 3-2-3-2 1-2 1-2 2-2-1-2 0-2 0-2-2-2 0-2-1-2 1-2 1-2 1-2-3-2-1-2 0-2 3-2-3-2 1-2 0-2 1-2-2-2 2-2 0-2-2-2 0-2 1-2 0-2 1-2 1-2 0-2-1-2-2-2 0-2 2-2 1-2-3-2 2-2 0-2-2-2 2-2 1-2-2-2 2-2 0-2 1-2-2-2 0-2 0-2 1-2-1-2-1-2 0-2 0-2 0-2 0-2 0-2 0-2-1-2 1-2 2-2-1-2-2-2 1-2 2-2-2-2 1-2-1-2 1-2 0-2-1-2 1-2-2-2 2-2 0-2 1-2-3-2 3-2 0-2 0-2 10-2-8-2 1-2-4-2-1-2 2-2 1-2-3-2 0-2 0-2-1-2 2-2-1-2 2-2 1-2-1-2 1-2-4-2 3-2-1-2 0-2-1-2 0-2-1-2 2-2 1-2 1-2-2-2-2-2 3-2 0-2-1-2 1-2-3-2 3-2-3-2 2-2 1-2 3-2-3-2 2-2 3-2 6-2-9-2 3-2-3-2 0-2-2-2 2-2-2-2-2-2 0-2 2-2-1-2 1-2-1-2 0-2-1-2 0-2 0-2 0-2-1-2-1-2 3-2-2-2-1-2 1-2-2-2 1-2 0-2 0-2-1-2 1-2-1-2 0-2 0-2 0-2-1-2 1-2-2-2 0-2 0-2 0-2 0-2 0z" fill="#3d3dd0"/><path d="M573 49l2 0 2 0 2 0 2 0 2 0 2 0 2-1 2 0 2 0 2 1 2-1 2-1 2 1 2 0 2-1 2 1 2-1 2 0 2-1 2 1 2 0 2-1 2 1 2 0 2-1 2 0 2 0 2 0 2 0 2 0 2 0 2 0 2 0 2 1 2-1 2-1 2 0 2 0 2 0 2-3 2 2 2 0 2-1 2 2 2-1 2 0 2 1 2 2 2-1 2 1 2-1 2 1 2 0 2-1 2 0 2 1 2-1 2 1 2-1 2 1 2-1 2-1 2 1 2 0 2 0 2 1 2-1 2 0 2 1 2-1 2 0 2 1 2 0 2 0 2 0 2-1 2 0 2 0 2 0 2 0 2 0 2 0 2-1 2-1 2 1 2 0 2 1 2 1 2 0 2-1 2 0 2 0 2 0 2 0 2 0 2 0 2 0 2 1 2-1 2 0 2 1 2-1 2 1 2 0 2-1 2 0 2-1 2 2 2 0 2 0 2-1 2 1 2 0 2-1 2 1 2 0 2 0 2 0 2-1 2 0 2-1 2 2 2-1 2 0 2 0 2 1 2 0 2 0 2-1 2 0 2 0 2 0 2 1 2 0 2-1 2 1 2-1 2 0 2 0 2 0 2 0 2 0 2 1 2-1 2 1 2-2 2 2 2-2 2 1 2 0 2 0 2 0 2 0 2 0 2 0 2-1 2 1 2-1 2 1 2 0 2 0 2-2 2 1 2 0 2 1 2 1 2-2 2 1 2 0 2 0 2 0 2 1 2-1 2 1 2-1 2 0 2 0 2 0 2 0 2 0 2 0 2 0 2 0 2 1 2-1 2 1 2-1 2 1 2-1 2 0 2 0 2 0 2 0 2 0 2 0 2 0 2 0 2 0 2 0 2 1 2-1 2 0 2 0 2 1 2-1 2 1 2 0 2-1 2 1 2-2 2 1 2 1 2-1 2 1 2-1 2 1 2-1 2 0 2-1 2 1 2 1 2-1 2 0 2 0 2-1 2-1 2 1 2 0 2 0 2 1 2 0 2-2 2 1 2 1 2-1 2 1 2 0 2 0 2 1 2-1 2 1 2-2 2 1 2 0 2-1 2 2 2 0 2-2 2 2 2 0 2 0 2-1 2 1 2-1 2 1 2 0 2-1 2 1 2-1 2 1 2 0 2-2 2 1 2 0 2-1 2 2 2-2 2 2 2-1 2 0 2 1 2-2 2 1 2 0 2 1 2-1 2 0 2 0 2 1 2-1 2-1 2 1 2 0 2 1 2-2 2 1 2 0 2 0 2 0 2 1 2-1 2 1 2-1 2 0 2 1 2 0 2 0 2 0 2-1 2 1 2-1 2 0 2 0 2-1 2 2 2-1 2 1 2-1 2 0 2 0 2 1 2-1 2 0 2 1 2 0 2-1 2 0 2 0 2 1 2-1 2 0 2 0 2 1 2-1 2 1 2-1 2 0 2 0 2 0 2 0 2 0 2 0 2 1 2-1 2-1 2 1 2 0 2 0 2 0 2-1 2 1 2 1 2 0 2 0 2 0 2-1 2 0 2 0 2-1 2 1 2-1 2 1 2 0 2-1 2 0 2 0 2 1 2 1 2-1 2-1 2 1 2 0 2 0 2 0 2 1 2 0 2-1 2 0 2 1 2 0 2-2 2 1 2 1 2-1 2 0 2-1 2 1 2 1 2-1 2 1 2-1 2 0 2 0 2 0 2 0 2 1 2-1 2-1 2 2 2-2 2 0 2 2 2 0 2-1 2 1 2-1 2 0 2 0 2-1 2 1 2 0 2 1 2-1 2 0 2 0 2 0 2 0 2 0 2 0 2 0 2 1 2-1 2 0 2 0 2 0 2 0 2 1 2-2 2 2 2-1 2 0 2 0 2-1 2 2 2 0 2-1 2 1 2-1 2 1 2-1 2 0 2-1 2 1 2 0 2 0 2 0 2 0 2 0 2 0 2 1 2-1 2 0 2-1 2 1 2 0 2 1 2-1 2-1 2 0 2 2 2-1 2 1 2 0 2 0 2-1 2 0 2 0 2 0 2 0 2-1 2 1 2 0 2 0 2-1 2 0 2 1 2 1 2-1 2 1 2-1 2 0 2-1 2 1 2-1 2 0 2 1 2 1 2 0 2-2 2 1 2 0 2 0 2 1 2 0 2 0 2-1 2 0 2-1 2 1 2-1 2 0 2 1 2 1 2-1 2 0 2 1 2-1 2 1 2 0 2 0 2-1 2 0 2 0 2 0 2 1 2 0 2-1 2 0 2 0 2 0 2-1 2 0 2 1 2 1 2-1 2 1 2-1 2 1 2 0 2 0 2-1 2 0 2 1 2 0 2 0 2-1 2 0 2 1 2-1 2 1 2-1 2 0 2 0 2 1 2-1 2 0 2 0 2 0 2 0 2 0 2-1 2 2 2 0 2-1 2 1 2 0 2-1 2 0 2 0 2 1 2-1 2 0 2 1 2-1 2 1 2-1 2 0 2 1 2 0 2-1 2 1 2-2 2 0 2 1 2-1 2 2 2-1 2 0 2 0 2 0 2 1 2 0 2 0 2-1 2-1 2 0 2 2 2-1 2 0 2-1 2 1 2-1 2 0 2 0 2 0 2 0 2 1 2 0 2-1 2 1 2 0 2 0 2 1 2-2 2 1 2-1 2 1 2 0 2 0 2 0 2 0 2 0 2 0 2 0 2 0 2 0 2 1 2 0 2-1 2 1 2-1 2 0 2 0 2 0 2 0 2 0 2 0 2-1 2 2 2-1 2 0 2 0 2 0 2 0 2 0 2 1 2 0 2-1 2-1 2 1 2 0 2 1 2-1 2-1 2 0 2 1 2 0 2 1 2-1 2 1 2 0 2 0 2-1 2 0 2 0 2 0 2 1 2 0 2 0 2-1 2-1 2 2 2-1 2-1 2 0 2 2 2-1 2 1 2-1 2 1 2-1 2 0 2 0 2 1 2-2 2 0 2 1 2 0 2 1 2-2 2 0 2 1 2 1 2-1 2-1 2 1 2-1 2 1 2 0 2 1 2-2 2 1 2 1 2-1 2-1 2 1 2 1 2-2 2 1 2 1 2 0 2-1 2 0 2-1 2 1 2 0 2 1 2-1 2 0 2 1 2-1 2 0 2 1 2 0 2 0 2 0 2-1 2 0 2-1 2 1 2 1 2-1 2 0 2 1 2-1 2-2 2 2 2-1 2-1 2 1 2-1 2 2 2-1 2 0 2-1 2 2 2-1 2-1 2 1 2 1 2-1 2 1 2-1 2 2 2-1 2-1 2 1 2 1 2-2 2 1 2 0 2 0 2 1 2 0 2-1 2 0 2-1 2 0 2 1 2 0 2 0 2 1 2 0 2 0 2-1 2 1 2-1 2 0 2 0 2 0 2 0 2 0 2 0 2-1 2 1 2 0 2 0 2 0 2 0 2 0 2 0 2-1 2 1 2 1 2-1 2 1 2-1 2 0 2 0 2 0 2-1 2 1 2 0 2 1 2 0 2-1 2-1 2 2 2-1 2 0 2 0 2 0 2 0 2 0 2-1 2 2 2-1 0 8-2-1-2 2-2-1-2 0-2 0-2 0-2 0-2 0-2-1-2 2-2-1-2-1-2 0-2 1-2 0-2 1-2-1-2 0-2 0-2 0-2-1-2 1-2-1-2 1-2 1-2-1-2 0-2 0-2 0-2 0-2 0-2 0-2 1-2-1-2 0-2 0-2 0-2 0-2 0-2 0-2-1-2 1-2-1-2 0-2 0-2 1-2 0-2 0-2 1-2 0-2-1-2 0-2-1-2 0-2 1-2 0-2 0-2 1-2-2-2 1-2 1-2-1-2-1-2 2-2-1-2 1-2-1-2 1-2 1-2-1-2-1-2 2-2-1-2 0-2-1-2 2-2-1-2 1-2-1-2-1-2 2-2-2-2-1-2 1-2 0-2-1-2 1-2 1-2-1-2 0-2-1-2 0-2 0-2 0-2 1-2 0-2-1-2 1-2 0-2-1-2 1-2 0-2 1-2-1-2 0-2-1-2 0-2 1-2 1-2-2-2 1-2 1-2-1-2-1-2 1-2 1-2-2-2 1-2 0-2 1-2-1-2 1-2-1-2-1-2 1-2 1-2 0-2-2-2 1-2 0-2 1-2 0-2-2-2 1-2 0-2 0-2-1-2 1-2-1-2 1-2-1-2 2-2 0-2-1-2-1-2 2-2-1-2-1-2 0-2 0-2 1-2 0-2 0-2 0-2-1-2 0-2 0-2 1-2-1-2 1-2 0-2 1-2 0-2-1-2-1-2 1-2 0-2 1-2-1-2-1-2 0-2 1-2 0-2 0-2 0-2 0-2 0-2-1-2 2-2-1-2 0-2 0-2 0-2 0-2 0-2 0-2-1-2 1-2-1-2 0-2 1-2 0-2 0-2 0-2 0-2 0-2 0-2 0-2 0-2 0-2 1-2-1-2 1-2-2-2 1-2 0-2 0-2 1-2-1-2 0-2 1-2 0-2 0-2 0-2 0-2-1-2 1-2-1-2 0-2-1-2 2-2 0-2-1-2-1-2 0-2 0-2 1-2 0-2 0-2 0-2-1-2 2-2-1-2 1-2 0-2-2-2 1-2-1-2 0-2 1-2 0-2-1-2 1-2-1-2 1-2 0-2-1-2 1-2 0-2 0-2-1-2 0-2 1-2-1-2 0-2 2-2-1-2 0-2 0-2 0-2 0-2 0-2-1-2 1-2 0-2 0-2-1-2 1-2-1-2 1-2 0-2-1-2 0-2 0-2 1-2 0-2-1-2 0-2 0-2 1-2-1-2 1-2-1-2 1-2 1-2 0-2-1-2 0-2 0-2 0-2-1-2 0-2 1-2 0-2 0-2 0-2-1-2 0-2 0-2 1-2-1-2 1-2 0-2-1-2 1-2 1-2 0-2-1-2 1-2-1-2 0-2-1-2 0-2 0-2 1-2 0-2 0-2 1-2-2-2 0-2 1-2 1-2 0-2-1-2 1-2-1-2 0-2-1-2 1-2-1-2 1-2 1-2 0-2-1-2 0-2 0-2 1-2-1-2 0-2 0-2 0-2 0-2-1-2 0-2 0-2 1-2-1-2 2-2 0-2-1-2-1-2 1-2 0-2 1-2-1-2 0-2-1-2 1-2 0-2 0-2 0-2 0-2 0-2 0-2 1-2-1-2 0-2-1-2 1-2-1-2 1-2-1-2 0-2 2-2-1-2 0-2 0-2-1-2 2-2-2-2 1-2 0-2 0-2 0-2 0-2-1-2 1-2 0-2 0-2 0-2 0-2 0-2 0-2 0-2-1-2 1-2 0-2 1-2-1-2 0-2 0-2-1-2 1-2-1-2 0-2 2-2 0-2-2-2 2-2-1-2-1-2 1-2 0-2 0-2 0-2 0-2-1-2 1-2-1-2 1-2 1-2-1-2 0-2-1-2 1-2 1-2-2-2 0-2 1-2 0-2-1-2 0-2 1-2 0-2 0-2 0-2 1-2-1-2-1-2 1-2 1-2 0-2 0-2-1-2 0-2 1-2-1-2 1-2-1-2 0-2 0-2-1-2 0-2 0-2 0-2 1-2 1-2-1-2 0-2 0-2 0-2 1-2-1-2-1-2 1-2 0-2 0-2 0-2 0-2 0-2 0-2-1-2 1-2-1-2 1-2 0-2 0-2-1-2 1-2 0-2 0-2-1-2 0-2 1-2 0-2-1-2 1-2 0-2 0-2-1-2 1-2-1-2 2-2-1-2 0-2 0-2-1-2 1-2-1-2 0-2 0-2 0-2 1-2 0-2-1-2 1-2-1-2 1-2 0-2 0-2 0-2 1-2-2-2 1-2 0-2 1-2-1-2-1-2 1-2 0-2 0-2-1-2 1-2 0-2 1-2-2-2 1-2 0-2-1-2 2-2-2-2 2-2-1-2 0-2 1-2-2-2 0-2 1-2-1-2 1-2-1-2 0-2 1-2-1-2 1-2-1-2 0-2 0-2 2-2-2-2 0-2 2-2-1-2 0-2 1-2-2-2 1-2-1-2 1-2 0-2 0-2 1-2-1-2 1-2 1-2-2-2 0-2 1-2 0-2 0-2 1-2-1-2-1-2 0-2 0-2-1-2 1-2 1-2-1-2 0-2-1-2 1-2-1-2 1-2-1-2 1-2 1-2-2-2 1-2-1-2 0-2 1-2-1-2 1-2 0-2 0-2-1-2 1-2 0-2 0-2 0-2 0-2 0-2 0-2 0-2 0-2 0-2 0-2-1-2 1-2-1-2 1-2-1-2 1-2 0-2 0-2 0-2 0-2 0-2 0-2 0-2 0-2-1-2 1-2-1-2 1-2 0-2 0-2 0-2 1-2-2-2 1-2 1-2 0-2 1-2-2-2 0-2 0-2 1-2-1-2 1-2-1-2 0-2 0-2 0-2 0-2 0-2 0-2 1-2-2-2 2-2-2-2 1-2-1-2 1-2 0-2 0-2 0-2 0-2 0-2-1-2 1-2-1-2 0-2 1-2 0-2 0-2 0-2-1-2 0-2 0-2 1-2 0-2 0-2-1-2 2-2-1-2 0-2-1-2 0-2 0-2 0-2 1-2-1-2 0-2 1-2-1-2 0-2 0-2 2-2-1-2 0-2-1-2 0-2 1-2-1-2 1-2 0-2-1-2 1-2 0-2 0-2 0-2 0-2 0-2 0-2 0-2-1-2 0-2 1-2 1-2 0-2 1-2-1-2-1-2 0-2 0-2 0-2 0-2 0-2 0-2-1-2 0-2 0-2 0-2 1-2 0-2-1-2 1-2 0-2-1-2 1-2 0-2 0-2 1-2-1-2-1-2 1-2-1-2 1-2-1-2 1-2 0-2-1-2 0-2 1-2-1-2 1-2-1-2 2-2 1-2 0-2-1-2 2-2-1-2 0-2 2-2-3-2 0-2 0-2 0-2-1-2-1-2 1-2 0-2 0-2 0-2 0-2 0-2 0-2 0-2 0-2-1-2 0-2 1-2-1-2 0-2 1-2-1-2 0-2-1-2 1-2-1-2 0-2 1-2-1-2-1-2 1-2 0-2 0-2-1-2 0-2 0-2 0-2 0-2 0-2 0z" fill="#7070de"/></g></svg>
<div style="left:200px;top:336.5px;width:1061.5px;height:123.0px;background:#3e3e44"></div>
<div style="left:200px;top:339px;width:1061px;height:116.5px;background:#e9eef8"></div>
<div style="left:200.5px;top:339.3px;width:65px;height:116.2px;background:#e7ecf6;border:1px solid #2c2c2c;border-top-color:#e9eef8;border-left-color:#e9eef8"></div>
<div style="left:201px;top:340.3px;width:12.3px;height:11px;background:#d6dcea;border-right:1px solid #c8c8c8;border-bottom:1px solid #bcbcbc"></div>
<svg style="position:absolute;left:201px;top:340.3px;" width="12" height="11" viewBox="0 0 12 11"><path d="M4 3.2 L8.3 7.5 M8.3 3.2 L4 7.5" stroke="#222" stroke-width="1.2"/></svg>
<div style="left:213.5px;top:340.3px;width:51.5px;height:11px;background:#d6dcea;border-bottom:1px solid #bcbcbc"></div>
<div class="t" style="left:216.00px;top:341.48px;font-size:8.6px;line-height:9.89px;color:#141414;transform:scaleX(0.930);transform-origin:0 0;">voix</div>
<svg style="position:absolute;left:257px;top:342.8px;" width="8" height="6" viewBox="0 0 8 6"><path d="M1 1 H7 L4 5 Z" fill="#111"/></svg>
<div style="left:201px;top:351.8px;width:32.5px;height:11.5px;background:#d6dcea;border-right:1px solid #b8b8b8;border-bottom:1px solid #bcbcbc"></div>
<div style="left:233.5px;top:351.8px;width:31.5px;height:11.5px;background:#d6dcea;border-bottom:1px solid #bcbcbc"></div>
<div class="t" style="left:204.30px;top:353.38px;font-size:8.6px;line-height:9.89px;color:#141414;transform:scaleX(0.837);transform-origin:0 0;">Silencer</div>
<div class="t" style="left:241.49px;top:353.38px;font-size:8.6px;line-height:9.89px;color:#141414;transform:scaleX(0.930);transform-origin:0 0;">Solo</div>
<div class="t" style="left:209.50px;top:364.31px;font-size:6.5px;line-height:7.47px;color:#444;">-</div>
<div class="t" style="left:254.50px;top:364.35px;font-size:7px;line-height:8.05px;color:#222;">+</div>
<div style="left:209px;top:376.3px;width:50.5px;height:1px;background:#8a8a8a"></div>
<div style="left:209px;top:374.3px;width:1px;height:2px;background:#aaa"></div>
<div style="left:214px;top:374.3px;width:1px;height:2px;background:#aaa"></div>
<div style="left:219px;top:374.3px;width:1px;height:2px;background:#aaa"></div>
<div style="left:224px;top:374.3px;width:1px;height:2px;background:#aaa"></div>
<div style="left:229px;top:374.3px;width:1px;height:2px;background:#aaa"></div>
<div style="left:234px;top:374.3px;width:1px;height:2px;background:#aaa"></div>
<div style="left:239px;top:374.3px;width:1px;height:2px;background:#aaa"></div>
<div style="left:244px;top:374.3px;width:1px;height:2px;background:#aaa"></div>
<div style="left:249px;top:374.3px;width:1px;height:2px;background:#aaa"></div>
<div style="left:254px;top:374.3px;width:1px;height:2px;background:#aaa"></div>
<div style="left:259px;top:374.3px;width:1px;height:2px;background:#aaa"></div>
<svg style="position:absolute;left:233.5px;top:371.8px;" width="9" height="9" viewBox="0 0 9 9"><circle cx="4.5" cy="4.5" r="3.1" fill="#7474e2" stroke="#5555c8" stroke-width="0.7"/><circle cx="4.5" cy="4.5" r="1" fill="#b8b8f0"/></svg>
<div class="t" style="left:209.00px;top:384.39px;font-size:7.5px;line-height:8.62px;color:#333;">G</div>
<div class="t" style="left:253.50px;top:384.39px;font-size:7.5px;line-height:8.62px;color:#333;">D</div>
<div style="left:209px;top:395.3px;width:50.5px;height:1px;background:#8a8a8a"></div>
<div style="left:209px;top:393.3px;width:1px;height:2px;background:#aaa"></div>
<div style="left:214px;top:393.3px;width:1px;height:2px;background:#aaa"></div>
<div style="left:219px;top:393.3px;width:1px;height:2px;background:#aaa"></div>
<div style="left:224px;top:393.3px;width:1px;height:2px;background:#aaa"></div>
<div style="left:229px;top:393.3px;width:1px;height:2px;background:#aaa"></div>
<div style="left:234px;top:393.3px;width:1px;height:2px;background:#aaa"></div>
<div style="left:239px;top:393.3px;width:1px;height:2px;background:#aaa"></div>
<div style="left:244px;top:393.3px;width:1px;height:2px;background:#aaa"></div>
<div style="left:249px;top:393.3px;width:1px;height:2px;background:#aaa"></div>
<div style="left:254px;top:393.3px;width:1px;height:2px;background:#aaa"></div>
<div style="left:259px;top:393.3px;width:1px;height:2px;background:#aaa"></div>
<svg style="position:absolute;left:228.0px;top:390.8px;" width="9" height="9" viewBox="0 0 9 9"><circle cx="4.5" cy="4.5" r="3.1" fill="#7474e2" stroke="#5555c8" stroke-width="0.7"/><circle cx="4.5" cy="4.5" r="1" fill="#b8b8f0"/></svg>
<div class="t" style="left:203.60px;top:405.30px;font-size:7.6px;line-height:8.74px;color:#333;transform:scaleX(0.954);transform-origin:0 0;">Stéréo, 48000Hz</div>
<div class="t" style="left:203.60px;top:413.50px;font-size:7.6px;line-height:8.74px;color:#333;transform:scaleX(0.964);transform-origin:0 0;">32 bits flottant</div>
<div style="left:201px;top:443.5px;width:12px;height:11px;background:#d6dcea"></div>
<svg style="position:absolute;left:201px;top:443.5px;" width="12" height="11" viewBox="0 0 12 11"><path d="M2.5 8 L6 4.5 L9.5 8 Z" fill="#111"/></svg>
<div style="left:214px;top:443.5px;width:39px;height:11px;background:#d6dcea;border-right:1px solid #c4c4c4"></div>
<div class="t" style="left:218.50px;top:444.88px;font-size:8.6px;line-height:9.89px;color:#141414;transform:scaleX(0.848);transform-origin:0 0;">Sélection</div>
<div style="left:265.5px;top:339px;width:20.5px;height:116px;background:#e9eef8"></div>
<div class="t" style="left:272.00px;top:341.47px;font-size:8.5px;line-height:9.77px;color:#111;transform:scaleX(0.931);transform-origin:0 0;font-weight:bold">1,0</div>
<div class="t" style="left:272.00px;top:362.87px;font-size:8.5px;line-height:9.77px;color:#111;transform:scaleX(0.931);transform-origin:0 0;font-weight:bold">0,0</div>
<div class="t" style="left:269.00px;top:385.67px;font-size:8.5px;line-height:9.77px;color:#111;transform:scaleX(0.956);transform-origin:0 0;font-weight:bold">-1,0</div>
<div style="left:279px;top:368px;width:7px;height:1px;background:#444"></div>
<div style="left:283px;top:354px;width:3px;height:1px;background:#666"></div>
<div style="left:283px;top:381px;width:3px;height:1px;background:#666"></div>
<div class="t" style="left:272.00px;top:400.47px;font-size:8.5px;line-height:9.77px;color:#111;transform:scaleX(0.931);transform-origin:0 0;font-weight:bold">1,0</div>
<div class="t" style="left:272.00px;top:422.37px;font-size:8.5px;line-height:9.77px;color:#111;transform:scaleX(0.931);transform-origin:0 0;font-weight:bold">0,0</div>
<div class="t" style="left:269.00px;top:445.67px;font-size:8.5px;line-height:9.77px;color:#111;transform:scaleX(0.956);transform-origin:0 0;font-weight:bold">-1,0</div>
<div style="left:279px;top:427px;width:7px;height:1px;background:#444"></div>
<div style="left:283px;top:413px;width:3px;height:1px;background:#666"></div>
<div style="left:283px;top:441px;width:3px;height:1px;background:#666"></div>
<div style="left:265.5px;top:395px;width:20.5px;height:1px;background:#b0b0b0"></div>
<div style="left:286px;top:340px;width:975px;height:55px;background:#d9d9d9"></div>
<div style="left:286px;top:340px;width:798.5px;height:55px;background:#c8c8c8"></div>
<div style="left:1084px;top:340px;width:1px;height:55px;background:#404040"></div>
<svg style="position:absolute;left:0px;top:340px;left:0" width="1085" height="55" viewBox="0 0 1085 55"><g transform="scale(.5)"><path d="M573 54l2-1 2 0 2 0 2 0 2-1 2 0 2 1 2 0 2-1 2 0 2-1 2 1 2-19 2-3 2 10 2 7 2-4 2 8 2-19 2-10 2 26 2-8 2 0 2 1 2-5 2 9 2 0 2 4 2 4 2 1 2-6 2-1 2 4 2-2 2-5 2 5 2 0 2-2 2 4 2 2 2 1 2-10 2-2 2 7 2 2 2-4 2-2 2 5 2-2 2-1 2 1 2 1 2 0 2-1 2-5 2 6 2-5 2 0 2-6 2 1 2-1 2 9 2-3 2-3 2 5 2-2 2 0 2 8 2 1 2 1 2-2 2 1 2 0 2 1 2-1 2-5 2 1 2-5 2-2 2 3 2-4 2-2 2-1 2 5 2 0 2-6 2 6 2-7 2 8 2-1 2 1 2-6 2 6 2 2 2-5 2-2 2 1 2 1 2-1 2-2 2 2 2 0 2 0 2 9 2-7 2 2 2 4 2-13 2 13 2 0 2 2 2-4 2 4 2 2 2-3 2-4 2 3 2-1 2-6 2 3 2 4 2-9 2-2 2 0 2-2 2 12 2-6 2-2 2 0 2 6 2-1 2-9 2 3 2 2 2 2 2-6 2 5 2 1 2 6 2-11 2 1 2 9 2-5 2 1 2 6 2-4 2 3 2 0 2 2 2 4 2-1 2 1 2-1 2 0 2 0 2 1 2-7 2-3 2-12 2 7 2 13 2-8 2 5 2-1 2-6 2-1 2 7 2-3 2-6 2 10 2 0 2-2 2-3 2-1 2 0 2-1 2-11 2 9 2 2 2-6 2 1 2 2 2 7 2 8 2-3 2 1 2-1 2 0 2 1 2-1 2-6 2 0 2 0 2-2 2-1 2-1 2 7 2-5 2 3 2-2 2 2 2 2 2-4 2 2 2 3 2 2 2-3 2 4 2-13 2 1 2-1 2 13 2-2 2 2 2-3 2-2 2 4 2-5 2-7 2-1 2-4 2 10 2-13 2 3 2-2 2 0 2 10 2-1 2 5 2-7 2 0 2 9 2 5 2 0 2-1 2 2 2-1 2 0 2-1 2 2 2-2 2-10 2 3 2-12 2 2 2 0 2-4 2 8 2 3 2-3 2 7 2-1 2-2 2 9 2-1 2-1 2-1 2-1 2-4 2 6 2-6 2 3 2 1 2-5 2 3 2-2 2 2 2-2 2 4 2-7 2 5 2 0 2 4 2-7 2 0 2 5 2-2 2-5 2 9 2 2 2 0 2 1 2 0 2 0 2 0 2 0 2 0 2 0 2 0 2 1 2-1 2 0 2-13 2 2 2-8 2 7 2-6 2-5 2 6 2-2 2 1 2 13 2 3 2-3 2 0 2-7 2 4 2-4 2 0 2 5 2-5 2 4 2-6 2 9 2-7 2 5 2 0 2-1 2-3 2 5 2-8 2 6 2 5 2-1 2 3 2-5 2 2 2-7 2 4 2-5 2 8 2-8 2 0 2-1 2 1 2 2 2-6 2 3 2 4 2-1 2 2 2-12 2 12 2-2 2-1 2 2 2-3 2 4 2 6 2 0 2-4 2 4 2-7 2-5 2 10 2-6 2 2 2-3 2 2 2 5 2-1 2-7 2 4 2 1 2 2 2-8 2 3 2 4 2 1 2-6 2 5 2 1 2 3 2 0 2 2 2-3 2 2 2-2 2 1 2 2 2-4 2-2 2-1 2 4 2-2 2 5 2-1 2-3 2 4 2-1 2 0 2-5 2-8 2-1 2 7 2 2 2 6 2-5 2 0 2 3 2 0 2-3 2 2 2 1 2 1 2 0 2-2 2-1 2 1 2 0 2-5 2-1 2 4 2-1 2 0 2-1 2 0 2 3 2 3 2 0 2 1 2-4 2 3 2-1 2-2 2 1 2-5 2 2 2-4 2 4 2-5 2 1 2 2 2-1 2 5 2-3 2-3 2 2 2-2 2 9 2 0 2-5 2 0 2 2 2-1 2-2 2-4 2 1 2-2 2 5 2-11 2 0 2 0 2 6 2-4 2 6 2-3 2 1 2 0 2-5 2 7 2 10 2-6 2-2 2 4 2 4 2-1 2 1 2-2 2-4 2 1 2 1 2-7 2 1 2 2 2 1 2 1 2 2 2-7 2 5 2-4 2 2 2-2 2 1 2-1 2-2 2 1 2 3 2 4 2-6 2 6 2-3 2 2 2 2 2 4 2-1 2 1 2-1 2 0 2 1 2-1 2-4 2-4 2 5 2-5 2 1 2-2 2-13 2 13 2-5 2-1 2 8 2-6 2 7 2 0 2 2 2-6 2 1 2 2 2 3 2 1 2 2 2-3 2 1 2 0 2-3 2 2 2-5 2 2 2-1 2 5 2-1 2 1 2-3 2-2 2-3 2 2 2 3 2-3 2-4 2-4 2 3 2 6 2 7 2-3 2-2 2 0 2-4 2 1 2 4 2 2 2-2 2-4 2 2 2 3 2-4 2 3 2-5 2 0 2 2 2 2 2-2 2 4 2-4 2 1 2 5 2-3 2 0 2 3 2-1 2 2 2-12 2 4 2 5 2 3 2-3 2 2 2-5 2 4 2-4 2-1 2 4 2 1 2-5 2 1 2 4 2-5 2-1 2 7 2-5 2 2 2 2 2 2 2-1 2-10 2 7 2 1 2-2 2 3 2 3 2-1 2-1 2 1 2-2 2 0 2 2 2-2 2 0 2-1 2 0 2-3 2 4 2 0 2-2 2-2 2 4 2-4 2 3 2-3 2-7 2 6 2 1 2 0 2 0 2 1 2-3 2 1 2-1 2-1 2 5 2-1 2 2 2 1 2-3 2 3 2-2 2 0 2 1 2 0 2 0 2-1 2-1 2-1 2 0 2 1 2 4 2-5 2 2 2 3 2-1 2-1 2 2 2-2 2 0 2 3 2 0 2 2 2-1 2 0 2 0 2 1 2 0 2-1 2-1 2 1 2-9 2-3 2 2 2-8 2 5 2-8 2 9 2-4 2-8 2 6 2-7 2 8 2-3 2 5 2-4 2 4 2-5 2-2 2 8 2-7 2 13 2-8 2 3 2 0 2 8 2 3 2-2 2 3 2-8 2-4 2-2 2 9 2 5 2-1 2 1 2 0 2-3 2-3 2 1 2-7 2 6 2-4 2 5 2 1 2-2 2-8 2 5 2-3 2 7 2-2 2 2 2 2 2 1 2 1 2-6 2 3 2 4 2-3 2-1 2-2 2 0 2-1 2 2 2-8 2-1 2 1 2 3 2-5 2 3 2 4 2 2 2-8 2-1 2 1 2 5 2 2 2-3 2 3 2-6 2 4 2 0 2 4 2 2 2 1 2 3 2-1 2 0 2-5 2 2 2-1 2-3 2 6 2 0 2-3 2-2 2 0 2 2 2 4 2 0 2 0 2-17 2 4 2-5 2 16 2-10 2 2 2-3 2 2 2-6 2 0 2 5 2-2 2 4 2 0 2 7 2-3 2-1 2-12 2 10 2-8 2 5 2-9 2 1 2 2 2-2 2 4 2 8 2-8 2-3 2-2 2 6 2 6 0 19-2 10-2 5-2-9-2 2-2-5-2 4-2 9-2-8-2 9-2 2-2-5-2-8-2 4-2 5-2-10-2-4-2 0-2 0-2 6-2 1-2 2-2-4-2 2-2-4-2 7-2-4-2 0-2-7-2 12-2-3-2 3-2-16-2 0-2 0-2 4-2 2-2-3-2 1-2 0-2 1-2 0-2 0-2-3-2 0-2-1-2 0-2-1-2 3-2 2-2-2-2 6-2-2-2 4-2-4-2 4-2 1-2-6-2 6-2-3-2 0-2-1-2 2-2-3-2 3-2 3-2-1-2-5-2 0-2 1-2-1-2 0-2-2-2-1-2-3-2 1-2 2-2 1-2-3-2 0-2 1-2 3-2-2-2 4-2-2-2 6-2 0-2-3-2 1-2-4-2 5-2-7-2 2-2 3-2-3-2-4-2-3-2 4-2-1-2-3-2 9-2 2-2 3-2-6-2-7-2 4-2 0-2 2-2 4-2 2-2-1-2-1-2 4-2 4-2 1-2 0-2-7-2 6-2 1-2-3-2-5-2 7-2-4-2 6-2-1-2-9-2 3-2-1-2-1-2-4-2-1-2 1-2-7-2 0-2-1-2-1-2 1-2 1-2-1-2 0-2 0-2 1-2 2-2-1-2 1-2 0-2 2-2 0-2 0-2 1-2 0-2-2-2 3-2-3-2 0-2 1-2 2-2-1-2-2-2-1-2 3-2 1-2-4-2 5-2-1-2-1-2-1-2 0-2 5-2-2-2-3-2 1-2 0-2 1-2 1-2-1-2 0-2 5-2-7-2-1-2 3-2-4-2 1-2 1-2-2-2 3-2-1-2 1-2 0-2-1-2-3-2 1-2 0-2 1-2-2-2 1-2-2-2-1-2 2-2 5-2-4-2 1-2 8-2-9-2-1-2 1-2 1-2 1-2 0-2 2-2-1-2 0-2 1-2 1-2-1-2-2-2-1-2 2-2-2-2 2-2-3-2 2-2-5-2 8-2 4-2-3-2-9-2 2-2 0-2 1-2 1-2 1-2 2-2 0-2-4-2 3-2 1-2 1-2 2-2-3-2-2-2 3-2 1-2-1-2-3-2 3-2-1-2-3-2 4-2 3-2-7-2-1-2 0-2-1-2 4-2 4-2 4-2-4-2 5-2 0-2-6-2 1-2-2-2-2-2-4-2 4-2-2-2 1-2-1-2 1-2-2-2 3-2-4-2 2-2 0-2-3-2 3-2-1-2 5-2 3-2-5-2 1-2 5-2-6-2 5-2-5-2 4-2 2-2-4-2 11-2-12-2 3-2 0-2-7-2 4-2-3-2-4-2 0-2 0-2 1-2-1-2-1-2 1-2 2-2 3-2 1-2 1-2 3-2-1-2-1-2 4-2-4-2 0-2 1-2 3-2-6-2 4-2 0-2-2-2 0-2-1-2 4-2-5-2 2-2 1-2-5-2 2-2-2-2-2-2 0-2-2-2 0-2 3-2 6-2-5-2-4-2 12-2-1-2 4-2 2-2-5-2 5-2-4-2 7-2-2-2-5-2 6-2-10-2 5-2-8-2 2-2 0-2 3-2-8-2 2-2-2-2-2-2 1-2 7-2-1-2 1-2 0-2-3-2 5-2-6-2 5-2-3-2 1-2 3-2-4-2 1-2-3-2-3-2-2-2 1-2 1-2-1-2 1-2 0-2 1-2 4-2-3-2 2-2-1-2 2-2 0-2-2-2-1-2-1-2 1-2-2-2 0-2-1-2 2-2 1-2-1-2 3-2-2-2-1-2 3-2-4-2 7-2 0-2 6-2-4-2-5-2-6-2 2-2 0-2 0-2-1-2 0-2 4-2 0-2 0-2-1-2 1-2-5-2 1-2 1-2-1-2 0-2-1-2 2-2 1-2 4-2-1-2 3-2-4-2 2-2 5-2-5-2 4-2-5-2 3-2 3-2-6-2-2-2 4-2 2-2 1-2-3-2-4-2 11-2-7-2-6-2 2-2-3-2 2-2 4-2 1-2 5-2 2-2 0-2 0-2 6-2-7-2-2-2 4-2 0-2-2-2 0-2-5-2 4-2-2-2 1-2-6-2 7-2-6-2 1-2-4-2-1-2-2-2 1-2 5-2-1-2 7-2-5-2 5-2-4-2-1-2 2-2 0-2-1-2 5-2-8-2 6-2-5-2 2-2 4-2-3-2 2-2-6-2 1-2-3-2 1-2 5-2 10-2-8-2 13-2-7-2-7-2 10-2-8-2-3-2-10-2 0-2-1-2 2-2 0-2-2-2 1-2 0-2 0-2 0-2 1-2-1-2 2-2 1-2 10-2-5-2 0-2-1-2-1-2 0-2 2-2 0-2-1-2 1-2 1-2-4-2 6-2-4-2 2-2-1-2-4-2 5-2-4-2 2-2-1-2-1-2-3-2-1-2 0-2 5-2 6-2-2-2 9-2 0-2-4-2 8-2-3-2-4-2-2-2 0-2-7-2-7-2 0-2 0-2 0-2-1-2 0-2 2-2-1-2 0-2 7-2 6-2-5-2 5-2 1-2-5-2 8-2-3-2 3-2-3-2-1-2 5-2-2-2-4-2-8-2-2-2 3-2-3-2 0-2 0-2-2-2 13-2-3-2 2-2-11-2 4-2-3-2 2-2 1-2 1-2-1-2 6-2-4-2-1-2 7-2-7-2 5-2 0-2-3-2-2-2-2-2 3-2-3-2-4-2 1-2 1-2 1-2-2-2-1-2 8-2 7-2-3-2 2-2-2-2 7-2 1-2-1-2-7-2 0-2 2-2-8-2-2-2 0-2 10-2-6-2-4-2 6-2 0-2-3-2-1-2 1-2-6-2 13-2 1-2-6-2 1-2-10-2 0-2 0-2 0-2-1-2 1-2 0-2 4-2 3-2-1-2-1-2 5-2 0-2 3-2-4-2 1-2 6-2-9-2 4-2 2-2 0-2-3-2 6-2-4-2 6-2-6-2-2-2 2-2-3-2 0-2 1-2 6-2-5-2 6-2-4-2-7-2 1-2 0-2-2-2-1-2 5-2-6-2 0-2 1-2 3-2 0-2-1-2-1-2 12-2-13-2 5-2 0-2-1-2 5-2-2-2-2-2 3-2 0-2 2-2-4-2 2-2 0-2-5-2 7-2-4-2 5-2-6-2 1-2 3-2-4-2 7-2-8-2 3-2 2-2 2-2-8-2 4-2-4-2-2-2-2-2 1-2-4-2 0-2 0-2-1-2 1-2-1-2 2-2 4-2 1-2 1-2 1-2 3-2 0-2-1-2 3-2-3-2 3-2-1-2-6-2 1-2-1-2-2-2-2-2 4-2-2-2 2-2-1-2 1-2 2-2-2-2-4-2 4-2 2-2 3-2-12-2 1-2 3-2 2-2-1-2 0-2 1-2-2-2 1-2 3-2-3-2-4-2-1-2 5-2 5-2 2-2-2-2-1-2 3-2-3-2-1-2 19-2-12-2-10-2 5-2-2-2 6-2 6-2 0-2-19-2 0-2 0-2 2-2-2-2 0-2 0-2 0-2 0-2 0-2 0-2 0-2-1z" fill="#3d3dd0"/><path d="M573 54l2 0 2 0 2 0 2 0 2 0 2 0 2 0 2 0 2-1 2 0 2 1 2 0 2-6 2-3 2 1 2 5 2 0 2 1 2-5 2-1 2 5 2-1 2-2 2 2 2 0 2-2 2 1 2 2 2 3 2 0 2-1 2-1 2 0 2 0 2-2 2 0 2 1 2 0 2 1 2 2 2 0 2-4 2-2 2 3 2 2 2-1 2-2 2 0 2 0 2 0 2 1 2 1 2 1 2-1 2-1 2-1 2 1 2-1 2-1 2-1 2 1 2 1 2-3 2 1 2 1 2 1 2 0 2 2 2 2 2 0 2 0 2 0 2 0 2 0 2 0 2-2 2 0 2-1 2 0 2-2 2 0 2 0 2-1 2 0 2 0 2 2 2-1 2 0 2-1 2 1 2 0 2-2 2 1 2-1 2 2 2 1 2-3 2 3 2-3 2 1 2 1 2 0 2 1 2 1 2-1 2 2 2 0 2 1 2 0 2-1 2 0 2-1 2 1 2 1 2-1 2-1 2 0 2 0 2-1 2 1 2-3 2 0 2 0 2 1 2 0 2-2 2 1 2-1 2 2 2-1 2-1 2 1 2 0 2 2 2-3 2 1 2-1 2 1 2 0 2 1 2 0 2 0 2 1 2 0 2 0 2-1 2 2 2 1 2 0 2 2 2 0 2 0 2 0 2 0 2 0 2 0 2-4 2-3 2 1 2-1 2 6 2-2 2-1 2 0 2-1 2 2 2-2 2 0 2 3 2-1 2 2 2-1 2-4 2-1 2-1 2 2 2-2 2-1 2 3 2-1 2 2 2-1 2 2 2 4 2-1 2 0 2 0 2 0 2 1 2-1 2-1 2 0 2-1 2-1 2 1 2-1 2 1 2-1 2-2 2 1 2 1 2 1 2-1 2 1 2 2 2 0 2-1 2 2 2-6 2 1 2 0 2 5 2-1 2-1 2 0 2 1 2 0 2-2 2-2 2 0 2-1 2-1 2-1 2 1 2-2 2 3 2 0 2-2 2 3 2 0 2 2 2 1 2 2 2 0 2 0 2 0 2 0 2 0 2 0 2 0 2 0 2-4 2-3 2 0 2 2 2-3 2-1 2 2 2 0 2-2 2 2 2 1 2 3 2 2 2 1 2-1 2-1 2 0 2-2 2 1 2-1 2-1 2 1 2 1 2-1 2 0 2 0 2 1 2-2 2 0 2 1 2-1 2 1 2 0 2 1 2 1 2-2 2 1 2 1 2 1 2 1 2 0 2 0 2 0 2 0 2 0 2 0 2 0 2 0 2 0 2 0 2 0 2-5 2-2 2 1 2-4 2 3 2-4 2 5 2-1 2-1 2 4 2 2 2-1 2-1 2 1 2-1 2 1 2-2 2-1 2 1 2-2 2 3 2 0 2-2 2 1 2 1 2-1 2 0 2 2 2-2 2 3 2 0 2 0 2 1 2-1 2 1 2-3 2-2 2 1 2 3 2-2 2-1 2-1 2 1 2 0 2-3 2 3 2-3 2 0 2 0 2 0 2 3 2-1 2-1 2 0 2 2 2 1 2 1 2 2 2-1 2-1 2 0 2-1 2 1 2 0 2-2 2 2 2-3 2 3 2-2 2 2 2-1 2 0 2-1 2 2 2-1 2 1 2 0 2-1 2 1 2 0 2 1 2 1 2 1 2-1 2 0 2 0 2 1 2 0 2-2 2-1 2-1 2 0 2 3 2 1 2 0 2-1 2 0 2 0 2 1 2-5 2-1 2-1 2 2 2 1 2 3 2-1 2-1 2 1 2-1 2 1 2 1 2 0 2 0 2 0 2 0 2-1 2 1 2-2 2 0 2 0 2 0 2 0 2 1 2 0 2-1 2 1 2 1 2 0 2 0 2 0 2 0 2 0 2 0 2-1 2 0 2-1 2-2 2 1 2-1 2 1 2 1 2-2 2 1 2 0 2 0 2 2 2 0 2 0 2 1 2-1 2-1 2 2 2-5 2 1 2 2 2 0 2-1 2-3 2-1 2-1 2 2 2-1 2 1 2-1 2 0 2-1 2 3 2 0 2 3 2 3 2-3 2 0 2 1 2 2 2 0 2-1 2-1 2 0 2-1 2 0 2 0 2-1 2 0 2 0 2 1 2-2 2 2 2-2 2 1 2 0 2 0 2-1 2 2 2-2 2 0 2 1 2 1 2 0 2 1 2-1 2 1 2 1 2 1 2 0 2 0 2 0 2 0 2 0 2 0 2-2 2-1 2 0 2-1 2 1 2-1 2-2 2 1 2 0 2 0 2 1 2-2 2 1 2-1 2 1 2 1 2 0 2 1 2 1 2 0 2 0 2-1 2 2 2 0 2-1 2 0 2-1 2-1 2 2 2-1 2 1 2 1 2-3 2-1 2-2 2 2 2-2 2-1 2 1 2 0 2 1 2 3 2 2 2 0 2 0 2-2 2 1 2-1 2 0 2 0 2-1 2 1 2-1 2 0 2 0 2 1 2 0 2-1 2 1 2 0 2 0 2 0 2-1 2 1 2 1 2 0 2 1 2 1 2-1 2 0 2-4 2-1 2 1 2 4 2 0 2 0 2-2 2 0 2 1 2 0 2-1 2 0 2 0 2 0 2 0 2 1 2-1 2 1 2 0 2 0 2 0 2 1 2-1 2 0 2-1 2 0 2 0 2 1 2 2 2 0 2-1 2-1 2 1 2 0 2 0 2-1 2 1 2-1 2 0 2-1 2 1 2-1 2 0 2 0 2 1 2-1 2 0 2 1 2-1 2-1 2 1 2 0 2 0 2-1 2 2 2-1 2-1 2 0 2 0 2 1 2-1 2 0 2 1 2 0 2-1 2 1 2 0 2 0 2 0 2 1 2 0 2-1 2 0 2 1 2 0 2-1 2 1 2-1 2 2 2-1 2 0 2 0 2 1 2 0 2 0 2 1 2 0 2 0 2 0 2 0 2 0 2 0 2 0 2 0 2-3 2 0 2-2 2 0 2-2 2 1 2 0 2-4 2 0 2 2 2-2 2 2 2 1 2-4 2 1 2 2 2-2 2 1 2 2 2 1 2 1 2-2 2 1 2 0 2 1 2 3 2 0 2 1 2-2 2-3 2-1 2 3 2 4 2-1 2-1 2 2 2-3 2 1 2-2 2-1 2-1 2 2 2-2 2 0 2 0 2 2 2-2 2 2 2-1 2 2 2 0 2 0 2 1 2 0 2-1 2 1 2 0 2 1 2-1 2 0 2-1 2 0 2-1 2 0 2 0 2 0 2-1 2 0 2-1 2 1 2 1 2-2 2 0 2 0 2 2 2-2 2 1 2 2 2-2 2 1 2-1 2 2 2 1 2 1 2 1 2-1 2-1 2-1 2 1 2 0 2-1 2 1 2 0 2-1 2 0 2 1 2 0 2 0 2 1 2 0 2-5 2-3 2 2 2 4 2-1 2 0 2-1 2-1 2-1 2 2 2-1 2-1 2 3 2 1 2 0 2-1 2-1 2-2 2 0 2 0 2 0 2 1 2-2 2 0 2 0 2 0 2-1 2 3 2 1 2-1 2 2 2-1 0 12-2-1-2 2-2-1-2 1-2 3-2-1-2 0-2 0-2 0-2-2-2 1-2 0-2 0-2 0-2-2-2-1-2-1-2 0-2 1-2 3-2-1-2-1-2 2-2-1-2-1-2-1-2 0-2-1-2 4-2 2-2-3-2-5-2 0-2 1-2 0-2 0-2 1-2 0-2-1-2 0-2 1-2-1-2 0-2 1-2-1-2-1-2-1-2 1-2 1-2 1-2 2-2-1-2 1-2-2-2 2-2 1-2-2-2 2-2 0-2 0-2-2-2 1-2 1-2-1-2 0-2-1-2 0-2 0-2 0-2-1-2 0-2-1-2 0-2-1-2 1-2 0-2 1-2-1-2 0-2 1-2 0-2 0-2 2-2-1-2 2-2-2-2 2-2 0-2 0-2-2-2 2-2-1-2-1-2-2-2 1-2-3-2 2-2-1-2-1-2 4-2 3-2-1-2-3-2-2-2 1-2 0-2 3-2 1-2 0-2 1-2-2-2 1-2 1-2 2-2 1-2-2-2 2-2 1-2-4-2 1-2 2-2-2-2 2-2 0-2-4-2 0-2 1-2-2-2 0-2-2-2 0-2-3-2 0-2 0-2 0-2 0-2 0-2 0-2 0-2 0-2 1-2 0-2 0-2 1-2 0-2 0-2-1-2 2-2-1-2 1-2-1-2 0-2 1-2 0-2-1-2 0-2 1-2 0-2 0-2 0-2 1-2-1-2 0-2 1-2 0-2-1-2 1-2 0-2 0-2-1-2-1-2 2-2-1-2 0-2 0-2 1-2-1-2-1-2 1-2 0-2-1-2 1-2 0-2 0-2-1-2 1-2-1-2 0-2-1-2 1-2-1-2 0-2 0-2 1-2-1-2-1-2 0-2 2-2 1-2 0-2 0-2-1-2 0-2-1-2 1-2 0-2 0-2 0-2 1-2-1-2 1-2 0-2 0-2 0-2 0-2-1-2 0-2 1-2 0-2-2-2 0-2 0-2 4-2 1-2-1-2-4-2 0-2-1-2 1-2 1-2 0-2 1-2 1-2-1-2 0-2 0-2 0-2 1-2-1-2 0-2 1-2 0-2 0-2-1-2 1-2-1-2 0-2 0-2-1-2 1-2-2-2 0-2 0-2 2-2 3-2 1-2 0-2 1-2-1-2-2-2 2-2-2-2-1-2-3-2 1-2 1-2-1-2 2-2-1-2-1-2 0-2-1-2 0-2 2-2-1-2 0-2 0-2 1-2 1-2 0-2 1-2 1-2-1-2 1-2-2-2 1-2 0-2 0-2 1-2-2-2-1-2 1-2-1-2 0-2-1-2-2-2 0-2 0-2 0-2 0-2 0-2 0-2 1-2 1-2 1-2-1-2 1-2 0-2 1-2 1-2 0-2-2-2 2-2-1-2 0-2 0-2 1-2-2-2 2-2-2-2 1-2 0-2 0-2-1-2 0-2 0-2-1-2 0-2-1-2-1-2 0-2 2-2 1-2 0-2-3-2 3-2 3-2 0-2 3-2-1-2 0-2-1-2 1-2-1-2 2-2-1-2-1-2-3-2-1-2 0-2 2-2 1-2-5-2 2-2-1-2-1-2 1-2 0-2 0-2 2-2 0-2 0-2 1-2-2-2 1-2 1-2-1-2 1-2-2-2-1-2 0-2-1-2 0-2 0-2 0-2 0-2 0-2 0-2 1-2 1-2-1-2 0-2 1-2 0-2 0-2 0-2 0-2-2-2 1-2-1-2 0-2 0-2 0-2 0-2 1-2 1-2-1-2 1-2-1-2-1-2 3-2 1-2 2-2-1-2-1-2-5-2 1-2 0-2 0-2-1-2 0-2 1-2 3-2 0-2-1-2-1-2-2-2 0-2 1-2 0-2 0-2-1-2 1-2 1-2 1-2 0-2 1-2-1-2 0-2 1-2-1-2 2-2-1-2 0-2-1-2 2-2-2-2 3-2-3-2 2-2-2-2 0-2 1-2-1-2 0-2-1-2-1-2 2-2 1-2 1-2 2-2 0-2-1-2-1-2 3-2 0-2 0-2 0-2-3-2 3-2-3-2 0-2 1-2-1-2-1-2-2-2 3-2 1-2-2-2-3-2 1-2-1-2 1-2 0-2 0-2 3-2-2-2 2-2 0-2-1-2 1-2 1-2-2-2 0-2 3-2-2-2 1-2-1-2-2-2 1-2-1-2 1-2-1-2-1-2 2-2 4-2-1-2-1-2 5-2-4-2 3-2-4-2 1-2-2-2-5-2 0-2 0-2 0-2 0-2 0-2 0-2 0-2 0-2 0-2 0-2 0-2 1-2 1-2 1-2 1-2-2-2 1-2 1-2 0-2 1-2-1-2 1-2 0-2-2-2 1-2 0-2 0-2-1-2 1-2 1-2-1-2-1-2 1-2-2-2 0-2-1-2-1-2 1-2 2-2 3-2 1-2 2-2-2-2 0-2 2-2-1-2-3-2 2-2 0-2-3-2-4-2 0-2 0-2 0-2 0-2 0-2 0-2 0-2 0-2 2-2 1-2 2-2 0-2 3-2-2-2 0-2 3-2-2-2 1-2-1-2-1-2-1-2 0-2-2-2-2-2 0-2 1-2 0-2-1-2-1-2 5-2 0-2 1-2-6-2 2-2-1-2 0-2 2-2 1-2-1-2 1-2 1-2 1-2-2-2-1-2 1-2-1-2 1-2-1-2-1-2 0-2-1-2-1-2 1-2 0-2 0-2 0-2-1-2 4-2 2-2-1-2 2-2-1-2 3-2-1-2-2-2 2-2-1-2-1-2-4-2-1-2 2-2-1-2 3-2 0-2-2-2 2-2-1-2 0-2-1-2-2-2 6-2-1-2 1-2-3-2-4-2 0-2 0-2 0-2 0-2 0-2 0-2 2-2 0-2 1-2 2-2-1-2 0-2 0-2 1-2 0-2 0-2 1-2 0-2 1-2-1-2 1-2-3-2 2-2 0-2 1-2-1-2-1-2 2-2-1-2 1-2-2-2 0-2 1-2 0-2 0-2-3-2 1-2-1-2 0-2 0-2-1-2-1-2 1-2 1-2-1-2 0-2-1-2 0-2 1-2 0-2 2-2-1-2 1-2 1-2 0-2 1-2 1-2-3-2 3-2-3-2 1-2 2-2-1-2 1-2-2-2 0-2 1-2-1-2 0-2-1-2 2-2 0-2 0-2-1-2 0-2 0-2-2-2 0-2-1-2 0-2-2-2 0-2 0-2 0-2 0-2 0-2 0-2 2-2 2-2 0-2 1-2 1-2 1-2-3-2 1-2 1-2-1-2-1-2-1-2 1-2-1-2-1-2-1-2 1-2 1-2 1-2 0-2 0-2 0-2-2-2-1-2 2-2 3-2-2-2-4-2 0-2 2-2 1-2 0-2 1-2 0-2-2-2 0-2 0-2-1-2-1-2 0-2 3-2 2-2 1-2-2-2 0-2 2-2-2-2-1-2 5-2-1-2-5-2 1-2 0-2 5-2 1-2-3-2-6-2 0-2 1-2 0-2-1-2 0-2 0-2 0-2 0-2 0-2 0-2 0-2 0z" fill="#7070de"/></g></svg>
<div style="left:286px;top:395px;width:975px;height:4px;background:#4a4b52"></div>
<div style="left:286px;top:399px;width:975px;height:56px;background:#d9d9d9"></div>
<div style="left:286px;top:399px;width:798.5px;height:56px;background:#c8c8c8"></div>
<div style="left:1084px;top:399px;width:1px;height:56px;background:#404040"></div>
<svg style="position:absolute;left:0px;top:399px;left:0" width="1085" height="56" viewBox="0 0 1085 56"><g transform="scale(.5)"><path d="M573 55l2-2 2 2 2-1 2 0 2 1 2-2 2 2 2-3 2 2 2-1 2-1 2 2 2-19 2-3 2 8 2 8 2 3 2 1 2-10 2-19 2 23 2-1 2 0 2-6 2 0 2 8 2-6 2 6 2 6 2 1 2-1 2-2 2-3 2-3 2 5 2-4 2 3 2-3 2 6 2 3 2-1 2-11 2-3 2 6 2 7 2-7 2 0 2-3 2 8 2-1 2-5 2 3 2 4 2 0 2-7 2-2 2 1 2 4 2-4 2 1 2 4 2-9 2-2 2 5 2 4 2-1 2 1 2 1 2 6 2 0 2 0 2 0 2 0 2-1 2 1 2-4 2 0 2 0 2 0 2-3 2 1 2-8 2-1 2 5 2 4 2-2 2-8 2 4 2 1 2 3 2 0 2-1 2-4 2-1 2 8 2-1 2 1 2-8 2-2 2 3 2 5 2-4 2 7 2-7 2 5 2 4 2 1 2-16 2 16 2-4 2 4 2-6 2 6 2 0 2-4 2-1 2 0 2-4 2 0 2 6 2 0 2-8 2-3 2 4 2-6 2 6 2 6 2-5 2 0 2 2 2-3 2-5 2 1 2 3 2-2 2 1 2 0 2-2 2 9 2-7 2 7 2 2 2-8 2 6 2-2 2 2 2-2 2 4 2 3 2 3 2-1 2-1 2 0 2 1 2-1 2 1 2-13 2-3 2 3 2-1 2 11 2 0 2-1 2 0 2-3 2-5 2 3 2-2 2-3 2 7 2 4 2-1 2-5 2-6 2 8 2-10 2-3 2 12 2-1 2-7 2 5 2 4 2 3 2 3 2-1 2 1 2-2 2 2 2 0 2-1 2-2 2 0 2-4 2 3 2-4 2-1 2 5 2-6 2-2 2 7 2-5 2 7 2-1 2-2 2 2 2 1 2-1 2 5 2-6 2-1 2-1 2 7 2-1 2 1 2-1 2-2 2 4 2-4 2-9 2 4 2-5 2 5 2-11 2 3 2-4 2 11 2-7 2 3 2 3 2-3 2 7 2 5 2 2 2 0 2-1 2 1 2 0 2 0 2 0 2-1 2 2 2-9 2-7 2 5 2-10 2 1 2 6 2-5 2 7 2-4 2 4 2 0 2 5 2 4 2 2 2-2 2 0 2-5 2 0 2 3 2 0 2-4 2 3 2-1 2 2 2-2 2-1 2 1 2-6 2 9 2-3 2-6 2 4 2 2 2 1 2-4 2 3 2-6 2 8 2 1 2 3 2 1 2-2 2 2 2-1 2 0 2-1 2 1 2 0 2 1 2 0 2-1 2-5 2-4 2-12 2 8 2-2 2-7 2 5 2 4 2-7 2 9 2 10 2-3 2-1 2 1 2 0 2-2 2-8 2 1 2 6 2-4 2-4 2 7 2 0 2-6 2 5 2-4 2 6 2-2 2-5 2 6 2 0 2 6 2-1 2-3 2 2 2-2 2-5 2-1 2 9 2-7 2 0 2-4 2 1 2 2 2 3 2-6 2-5 2 11 2 0 2-9 2 2 2 3 2 4 2-7 2 4 2 2 2 2 2 6 2-4 2 3 2-2 2-10 2 4 2 0 2 5 2-4 2 4 2-1 2-3 2 4 2 0 2-6 2 0 2 6 2-8 2 4 2 1 2-1 2 3 2 1 2 3 2 1 2 1 2-2 2 1 2 0 2-2 2 3 2-3 2-6 2 4 2 1 2-1 2 5 2-2 2 2 2-3 2 2 2 1 2-10 2 5 2-13 2 4 2 5 2 6 2 1 2 0 2-2 2-3 2 1 2 1 2 2 2 1 2 0 2 0 2-3 2 0 2 0 2-3 2 4 2-3 2 0 2 1 2-1 2 3 2 1 2 0 2 0 2 2 2 0 2-2 2 1 2-1 2-2 2 1 2-3 2-3 2-2 2 5 2-3 2 4 2-6 2 6 2 2 2-5 2 2 2-3 2 8 2 0 2-3 2 2 2-1 2-2 2-5 2-1 2 7 2 0 2-11 2 7 2-4 2-6 2 2 2-3 2 2 2 7 2 2 2 0 2-5 2 5 2 8 2-4 2 0 2 1 2 4 2 0 2-1 2-4 2 1 2 1 2-4 2 1 2-4 2 5 2-8 2 5 2-4 2 2 2 5 2-1 2 2 2-10 2 5 2-2 2 3 2 2 2-2 2 0 2 1 2-2 2 4 2 1 2 2 2 1 2 1 2 0 2 0 2 0 2 0 2 1 2-5 2-2 2 0 2-2 2 1 2 0 2-15 2 14 2-1 2 2 2-4 2 5 2-1 2 2 2 1 2-5 2-3 2 3 2 2 2 3 2 0 2 2 2-2 2 1 2-4 2 0 2 4 2-2 2-3 2 4 2-1 2 1 2 1 2-7 2-4 2-4 2 0 2 11 2-6 2 5 2 0 2 5 2 2 2-2 2 1 2-1 2-7 2 7 2-5 2 4 2-3 2 2 2-2 2 1 2-1 2 2 2-1 2-4 2 7 2-5 2-2 2 2 2 5 2 0 2 0 2-1 2-1 2 4 2-1 2 2 2-6 2-11 2 11 2 5 2-1 2-1 2-2 2 1 2-4 2 5 2-2 2-4 2-1 2 2 2 2 2-1 2 4 2-2 2 1 2-2 2 3 2 1 2-4 2-6 2 5 2 3 2 1 2-3 2 7 2-4 2 1 2-2 2 3 2-1 2-2 2 0 2 1 2 1 2-4 2 1 2 3 2 0 2-1 2 0 2-4 2 4 2 0 2-4 2-7 2 7 2 0 2 4 2-5 2 4 2 0 2 1 2-5 2-2 2 1 2 7 2-7 2 7 2-6 2-1 2 3 2-1 2 4 2-4 2 1 2-2 2 0 2 1 2 0 2 0 2 2 2 1 2 1 2-1 2-1 2 2 2-1 2 1 2 2 2 0 2-1 2 2 2 1 2 0 2-1 2-1 2 1 2-1 2 1 2 0 2-3 2-5 2-7 2-3 2 1 2 8 2-8 2 4 2-11 2 4 2-4 2 13 2-2 2-3 2 6 2-5 2 3 2-6 2 3 2 0 2 4 2-8 2 9 2 2 2 1 2 3 2-1 2 0 2-5 2-6 2 5 2-2 2 13 2-3 2 0 2 3 2-7 2-1 2 1 2-3 2 6 2-10 2 7 2 1 2-7 2 5 2-3 2 1 2 2 2 4 2-2 2 0 2 1 2 2 2 0 2-1 2-1 2 2 2 0 2-3 2 0 2-6 2 8 2-7 2 2 2 4 2-10 2 7 2-4 2 5 2-8 2 5 2 0 2-4 2 1 2-2 2 5 2 4 2-4 2 1 2 5 2 0 2 0 2 3 2-1 2-2 2 2 2-1 2 0 2-3 2 0 2 1 2 1 2-2 2 0 2 1 2-1 2 2 2 0 2 4 2-13 2-12 2 11 2 10 2-7 2 0 2-5 2 4 2-3 2 7 2-1 2-1 2-5 2 10 2-2 2 2 2-7 2-8 2 10 2-10 2 6 2-8 2 9 2-3 2-6 2-1 2 2 2 7 2 1 2-9 2 11 2 6 0 16-2 6-2 7-2-11-2 10-2-3-2 2-2 2-2-1-2-5-2 7-2-2-2-7-2 3-2 5-2-10-2-3-2-2-2 5-2 4-2-5-2 2-2-2-2 6-2-4-2 0-2-2-2-1-2-2-2 9-2 2-2 1-2-17-2 1-2 3-2-2-2 2-2-1-2 1-2 0-2-1-2 1-2 1-2-1-2-1-2-2-2 2-2-3-2 1-2 2-2 2-2 0-2 0-2 5-2-3-2 1-2 5-2-1-2 2-2-7-2 4-2-3-2 1-2 3-2 1-2-2-2 0-2-6-2 0-2 2-2-1-2 2-2-2-2-3-2 0-2 0-2 3-2 0-2-3-2-2-2 2-2 1-2-1-2 5-2 3-2-6-2 7-2-3-2 2-2-6-2 8-2-7-2 1-2 0-2-1-2-3-2-4-2 3-2 0-2-3-2 14-2-4-2 1-2-6-2-1-2 1-2-2-2 5-2 5-2-5-2 4-2-2-2 6-2-4-2 9-2-8-2-1-2 2-2 8-2-11-2 6-2 0-2 5-2 2-2-7-2 3-2-11-2 9-2-4-2-1-2-6-2-3-2-4-2 1-2-1-2 0-2 0-2-1-2 1-2 0-2 0-2 1-2 0-2 1-2 1-2 2-2-3-2 1-2 0-2 0-2 2-2 0-2 0-2 2-2-3-2 0-2 4-2-1-2 1-2-1-2-2-2-1-2 3-2-2-2-2-2 6-2-2-2-2-2 6-2-6-2 2-2 0-2-4-2 3-2-2-2 0-2 1-2 7-2-7-2 1-2 0-2 1-2-1-2 0-2-2-2-1-2 2-2 2-2-2-2-1-2 0-2 0-2-1-2 0-2 0-2-1-2 0-2-1-2 4-2-2-2 4-2-2-2 5-2-5-2-3-2 0-2 1-2 2-2 2-2-1-2 0-2 1-2-1-2 1-2 0-2-1-2 0-2 2-2-5-2 3-2-2-2-3-2 1-2 10-2 2-2-4-2-10-2 2-2-2-2 2-2 3-2 0-2-2-2 1-2 1-2 4-2-3-2 2-2 3-2-6-2 3-2-4-2 4-2-2-2-3-2 2-2 2-2 0-2-1-2 5-2-7-2-1-2 1-2-3-2 5-2 4-2 4-2 1-2-7-2 8-2 1-2-3-2-2-2-9-2 0-2 3-2 1-2 1-2-3-2 2-2-2-2 0-2-3-2 2-2-2-2 0-2 1-2 4-2 1-2 3-2-2-2-2-2-1-2 0-2 2-2 6-2-6-2 5-2-4-2 11-2-15-2 3-2 1-2-1-2-4-2 0-2-4-2 0-2 1-2-1-2 1-2-1-2 1-2 2-2 0-2 2-2 3-2 0-2-2-2 0-2 3-2 2-2-1-2 2-2-1-2-4-2 0-2 0-2 4-2-3-2 0-2 3-2-2-2-3-2 2-2-4-2 2-2-2-2 1-2-3-2-2-2 0-2 3-2 4-2 0-2-7-2 10-2 5-2-2-2-4-2 6-2-1-2 4-2-5-2-2-2-2-2 5-2 3-2-5-2-7-2 2-2 3-2-2-2-4-2-1-2 1-2-2-2 1-2 8-2-7-2 4-2 1-2-3-2 1-2 0-2 4-2-5-2 3-2 1-2-4-2 0-2-1-2-2-2-3-2 2-2 1-2-2-2 1-2 0-2 4-2-3-2 4-2-2-2 3-2-3-2 1-2 0-2 1-2-3-2 1-2-4-2 0-2 1-2 1-2-1-2 1-2 2-2 0-2 0-2-1-2-1-2 3-2 7-2-4-2 0-2 1-2-10-2 1-2 1-2-2-2 2-2-2-2 2-2 5-2 0-2-3-2-1-2-3-2 2-2-1-2 1-2 0-2-2-2 1-2 2-2 4-2-3-2 3-2 3-2-2-2-1-2 3-2 1-2 0-2-2-2 2-2 1-2-6-2-1-2 3-2 2-2 1-2-4-2 8-2-8-2-2-2-3-2 1-2 2-2 3-2 1-2 4-2-5-2 5-2 4-2-5-2 1-2-1-2 2-2-2-2-5-2 1-2 4-2-4-2-1-2 1-2-4-2 8-2-5-2 3-2-7-2 1-2-1-2 0-2 4-2 2-2 7-2-8-2 4-2-2-2-1-2-1-2-1-2 2-2 7-2-2-2-4-2 3-2 0-2-6-2-3-2 6-2-5-2-1-2-2-2 5-2 12-2-3-2 7-2-3-2-8-2-1-2 8-2-9-2-4-2-6-2 0-2 0-2 0-2 0-2 0-2 0-2-1-2 1-2 0-2 0-2 0-2 3-2 2-2 5-2-2-2 0-2 1-2-4-2 5-2 0-2-1-2 0-2 2-2-1-2-1-2 0-2-3-2 4-2-3-2 1-2-3-2 3-2-1-2 0-2-5-2-1-2-1-2 1-2 5-2 4-2 5-2-1-2-1-2 7-2-4-2-1-2 5-2-10-2 2-2-7-2-5-2 0-2-1-2 0-2 1-2 0-2 1-2-1-2-1-2 3-2 5-2 2-2 2-2 6-2 1-2-1-2 1-2-7-2 10-2-6-2 0-2 0-2-7-2-4-2-3-2 1-2 1-2 1-2-1-2-2-2 11-2-3-2-2-2-6-2 3-2-2-2 0-2 6-2-1-2-1-2 5-2-6-2 7-2-3-2-4-2 6-2-3-2-2-2 4-2-3-2-2-2-2-2-2-2 0-2 2-2-2-2 1-2-2-2 4-2 7-2 6-2-4-2 1-2 5-2 1-2-9-2 0-2 1-2 0-2-4-2-5-2 4-2 9-2-6-2-2-2 1-2-1-2-4-2 0-2-1-2 1-2 9-2-3-2 3-2-4-2-9-2 0-2 0-2 1-2-1-2 0-2-1-2 2-2 5-2 2-2 1-2-2-2 0-2 7-2-3-2-2-2 4-2-5-2 8-2-6-2 4-2-1-2-3-2 2-2 4-2-8-2 3-2 0-2-2-2 3-2 2-2 3-2-5-2 3-2-8-2-2-2 4-2-3-2 1-2 1-2-4-2 2-2-2-2-2-2 5-2 0-2-2-2-3-2 14-2-11-2-2-2 7-2-4-2-1-2 4-2-2-2 8-2 1-2-5-2 0-2-1-2-2-2 4-2-3-2 4-2-2-2 2-2-5-2 5-2-2-2-4-2 5-2-1-2-2-2 4-2-2-2-1-2-2-2-2-2-2-2-2-2-2-2 0-2-1-2 0-2 1-2 0-2-1-2 6-2 1-2-1-2 4-2-2-2 8-2-4-2-2-2 5-2-6-2 1-2 0-2-1-2-2-2-3-2-1-2 3-2 1-2-2-2 2-2 3-2-2-2-2-2-4-2 10-2 2-2-5-2-8-2 0-2 2-2 6-2-4-2 4-2-5-2 2-2 3-2-3-2-2-2-4-2 1-2 5-2 5-2-4-2 7-2-1-2-1-2-2-2-1-2 19-2-17-2-7-2 0-2 2-2 5-2 11-2-4-2-17-2 0-2 0-2 0-2 0-2-1-2 2-2-2-2 0-2 2-2-1-2 0-2-1z" fill="#3d3dd0"/><path d="M573 55l2 0 2 0 2 0 2 0 2 0 2 0 2 0 2 0 2 0 2 0 2-1 2 1 2-6 2-7 2 5 2 6 2-1 2 1 2-5 2-4 2 8 2-1 2 0 2-2 2 2 2 0 2-2 2 2 2 4 2 0 2-2 2-1 2 0 2-1 2 0 2 0 2 1 2 1 2 0 2 2 2 0 2-5 2 1 2 0 2 2 2 0 2 0 2-1 2-1 2 0 2 1 2 1 2 1 2-1 2-2 2 1 2-2 2-1 2-1 2 1 2 2 2 0 2-2 2 0 2 1 2 0 2 1 2 1 2 3 2 0 2 0 2 0 2 0 2 0 2 0 2-2 2-1 2-1 2 0 2 1 2-2 2 0 2 0 2-2 2 1 2 0 2 1 2 0 2 0 2 0 2 0 2 0 2-1 2 1 2-1 2 0 2-1 2 0 2 0 2 1 2 1 2 1 2 0 2 1 2 0 2 0 2 1 2 1 2 0 2-1 2-1 2 0 2 1 2 1 2-2 2 1 2-3 2 2 2-2 2-1 2 1 2 0 2 1 2-1 2-1 2-1 2 2 2 0 2 0 2-1 2 0 2 0 2 1 2 0 2 0 2-2 2 1 2-1 2 3 2-1 2-1 2 1 2 0 2 1 2 1 2 1 2-1 2 1 2 1 2 1 2 0 2 0 2 0 2 0 2 0 2 0 2-5 2-4 2 2 2 2 2 3 2-1 2 0 2-1 2-1 2 2 2-1 2-1 2 1 2 0 2 2 2-1 2-3 2-1 2 2 2-2 2 0 2-1 2-1 2 2 2-1 2 2 2 2 2 4 2 0 2-1 2 0 2 1 2 0 2-2 2-1 2-1 2 0 2 0 2-1 2 0 2 2 2-2 2 0 2 1 2 1 2-1 2 0 2 2 2 0 2 1 2 0 2 1 2-5 2 0 2 0 2 5 2-1 2-1 2 0 2 0 2 1 2-2 2-1 2 0 2-4 2 1 2-1 2 1 2 1 2-3 2 3 2-2 2 0 2 3 2 0 2 2 2 3 2 0 2 0 2 0 2 0 2 0 2 0 2 0 2 0 2-4 2-3 2 2 2-1 2-3 2 1 2 0 2 1 2 0 2 1 2 1 2 3 2 1 2 0 2 0 2 0 2-2 2 1 2-1 2 0 2 0 2-1 2 0 2 0 2 0 2-1 2 2 2-2 2 2 2-1 2-1 2 1 2 0 2 0 2 0 2 2 2 0 2 0 2 1 2 1 2 0 2 0 2 0 2 0 2 0 2 0 2 0 2 0 2 0 2 0 2 0 2-5 2-1 2-2 2-3 2 2 2-1 2-1 2 5 2 0 2 3 2 1 2-1 2 0 2-1 2 0 2-1 2 1 2-2 2 2 2-2 2 1 2-1 2 0 2 0 2 0 2 2 2 0 2-1 2 2 2-1 2 1 2 2 2-1 2 0 2 1 2-4 2-1 2 0 2 4 2-1 2-3 2 0 2 2 2-4 2 2 2-2 2 2 2 0 2-3 2 1 2 3 2 0 2-1 2 1 2 1 2 1 2 1 2 0 2 0 2 0 2 0 2-2 2 0 2 0 2 1 2-2 2 1 2 0 2-1 2-1 2 1 2 1 2 0 2 0 2 1 2 0 2 0 2-1 2 1 2-1 2 1 2 1 2 2 2-1 2 0 2 0 2 0 2 0 2 0 2-2 2 0 2 0 2 1 2 2 2-1 2 0 2 0 2 0 2 1 2-3 2-3 2 1 2-1 2 2 2 3 2-1 2 0 2 0 2 0 2-1 2 2 2 1 2-1 2 0 2 0 2-1 2-1 2 1 2 0 2 0 2 0 2-1 2 0 2 0 2 0 2 1 2 0 2 1 2 0 2 1 2-1 2 1 2-2 2 0 2-2 2 0 2 1 2-1 2-1 2 1 2 0 2 1 2 0 2 0 2-1 2 2 2 0 2 0 2 1 2-1 2 1 2 0 2-4 2 1 2 0 2 2 2-4 2-2 2 2 2 0 2-4 2 0 2 2 2-1 2 0 2 1 2 1 2 3 2 1 2 3 2-3 2-1 2 3 2 1 2 0 2-1 2-1 2-1 2 0 2-1 2 1 2 0 2-1 2-1 2 0 2 0 2 0 2 1 2-2 2 1 2 0 2 0 2 2 2-1 2-1 2 2 2 0 2-1 2 2 2-1 2 1 2 1 2 1 2 0 2 0 2 0 2 0 2 0 2 0 2-1 2-2 2 0 2-1 2-1 2 0 2 2 2-2 2-1 2 0 2 2 2 0 2-1 2 0 2 1 2 0 2 1 2-1 2 2 2 1 2 0 2-1 2 1 2 0 2-2 2 1 2-1 2 0 2-1 2 1 2 1 2 0 2-1 2-1 2-2 2 1 2-1 2 0 2 1 2 1 2 0 2 2 2 1 2-1 2 0 2 0 2 0 2 0 2 0 2-2 2 0 2 0 2 1 2-2 2 1 2 1 2-1 2 1 2 0 2 0 2-1 2 1 2 1 2 0 2 0 2 0 2 1 2 0 2 1 2 0 2-4 2-3 2 3 2 3 2 0 2-2 2 1 2-1 2 0 2 1 2-2 2 2 2-1 2-1 2 2 2-1 2 0 2 0 2 0 2 1 2 1 2 0 2-1 2 0 2-1 2-1 2 1 2 2 2 1 2-1 2 0 2-1 2 1 2 0 2 0 2-1 2 0 2 0 2 0 2-1 2 1 2 0 2-1 2 0 2 0 2 1 2 0 2 0 2-1 2 0 2 0 2 1 2-1 2 0 2-1 2 1 2 1 2-2 2 1 2 0 2 0 2 0 2 0 2 0 2 1 2 0 2 0 2-1 2 1 2 0 2 0 2-1 2 1 2 0 2 0 2 0 2 0 2 0 2 1 2-1 2 0 2 0 2 1 2 0 2 1 2 0 2 0 2 0 2 0 2 0 2 0 2 0 2 0 2 0 2-3 2-3 2 0 2 1 2-3 2 2 2-3 2 1 2-2 2 2 2 2 2-1 2 0 2-2 2 2 2-1 2-2 2 2 2 2 2 0 2 1 2 0 2-1 2 1 2 1 2 2 2 0 2 1 2-3 2-2 2 0 2 0 2 6 2-2 2 1 2 1 2-2 2-2 2 1 2-2 2 1 2-1 2 1 2-1 2 1 2 0 2-2 2 1 2 1 2 0 2 0 2 1 2 1 2 1 2-3 2 1 2 2 2-1 2 0 2 0 2-1 2-2 2 1 2-1 2 0 2 0 2 0 2 1 2-1 2 0 2-1 2 1 2-1 2 2 2-1 2 0 2 0 2 0 2 1 2 0 2 1 2-1 2 1 2 2 2 0 2 0 2 0 2-1 2 0 2 0 2 0 2-1 2 0 2 0 2 0 2 1 2 0 2 0 2 0 2 1 2-5 2-3 2 4 2 3 2-3 2-1 2 1 2-2 2 0 2-1 2 2 2 2 2 0 2 1 2 1 2-2 2 0 2-2 2 0 2-1 2-2 2-1 2 1 2 2 2-1 2-2 2 4 2 0 2 0 2-1 2 3 2 0 0 10-2 0-2 3-2-1-2 0-2 0-2 4-2-2-2-1-2 2-2 1-2-1-2-2-2-1-2 0-2-2-2 0-2-2-2 1-2 1-2 0-2 2-2 2-2-1-2 0-2-2-2 1-2-1-2-3-2 3-2 4-2-3-2-5-2 1-2 0-2 0-2 0-2 1-2 0-2 0-2 0-2-1-2 0-2 0-2 0-2-1-2 0-2 0-2 0-2 2-2 1-2-1-2 1-2 0-2 1-2 0-2 0-2 0-2-1-2 2-2-1-2 1-2-1-2 0-2-1-2 1-2 0-2 0-2 0-2-1-2 1-2-2-2-1-2 0-2 0-2-1-2 2-2 1-2-3-2 1-2 1-2 1-2 0-2 0-2 1-2 1-2-2-2 0-2 1-2-1-2 1-2-1-2 1-2-2-2 1-2-2-2-2-2 1-2 1-2-2-2 6-2 0-2 0-2-2-2-3-2 1-2 0-2 2-2 1-2 1-2-1-2 0-2 1-2 0-2 2-2 2-2-2-2-1-2 2-2-2-2 0-2-1-2 2-2 2-2-2-2 1-2-3-2 2-2-3-2 1-2 0-2-3-2-3-2 0-2 0-2 0-2 0-2 0-2 0-2 0-2 0-2 0-2 1-2 0-2 1-2 0-2 0-2-1-2 1-2 0-2 0-2 0-2 0-2 0-2 1-2-1-2 0-2 0-2 1-2-1-2 0-2 0-2 1-2 0-2 0-2 0-2 0-2 0-2 1-2-2-2 1-2 1-2-1-2 0-2-1-2 1-2 0-2 0-2-1-2 0-2 0-2 1-2 0-2 0-2-1-2 0-2 1-2-1-2 0-2 0-2 0-2-1-2 0-2 0-2 1-2-1-2 0-2-1-2 1-2 2-2 1-2-1-2-1-2 0-2-1-2 0-2 1-2 1-2 0-2 0-2 0-2-1-2 2-2-1-2-1-2 2-2-2-2 1-2 0-2-1-2 1-2-2-2 0-2 3-2 3-2-3-2-4-2 0-2 1-2 0-2 1-2 0-2 0-2 0-2 1-2 1-2-1-2 0-2 0-2 1-2-1-2 1-2 1-2-2-2 1-2 0-2 0-2-2-2 0-2 0-2 0-2 0-2 0-2-1-2 1-2 2-2 0-2 1-2 1-2 0-2-1-2 1-2-2-2-1-2-1-2 0-2 1-2 1-2-1-2 0-2-1-2 1-2-2-2 0-2 1-2-1-2 0-2 1-2 2-2-1-2 1-2 0-2 1-2 0-2-1-2 0-2 2-2 0-2-1-2-2-2 2-2 0-2-1-2-1-2 0-2-2-2-1-2 0-2 0-2 0-2 0-2 0-2 0-2 1-2 1-2 1-2-1-2 2-2-1-2 0-2 2-2-1-2-1-2 2-2 0-2 0-2 1-2-2-2 1-2 0-2 0-2 0-2-1-2-1-2 0-2 1-2-1-2 0-2-1-2-1-2-1-2 0-2 1-2 3-2-1-2-3-2 3-2 1-2 3-2 1-2 1-2 0-2-1-2 2-2 0-2-4-2 0-2 2-2-2-2-4-2 2-2 0-2 1-2-4-2 0-2 1-2-1-2 1-2 0-2 0-2 2-2-1-2 0-2 0-2 1-2 0-2 1-2-1-2-1-2 1-2 0-2-2-2 0-2-2-2 1-2-1-2 1-2 0-2 1-2 0-2 1-2 0-2 0-2 0-2-1-2 0-2 0-2 0-2 1-2-1-2-1-2 0-2 0-2-1-2 1-2 2-2-1-2 0-2 0-2 0-2-1-2 3-2 2-2-1-2 1-2-3-2-3-2 1-2 0-2 0-2 0-2-1-2 2-2 1-2 0-2 0-2-2-2 0-2 0-2 0-2 0-2 0-2-1-2 2-2 1-2 1-2-1-2 1-2-1-2 0-2 0-2 1-2 0-2 0-2 1-2 1-2-1-2-1-2 0-2 1-2-2-2 1-2 0-2 0-2-2-2 0-2 0-2 0-2 0-2 1-2 1-2 1-2 1-2-1-2 0-2 3-2 1-2-3-2 0-2 2-2-2-2 2-2-4-2 2-2 0-2-3-2-1-2 4-2 0-2-1-2-4-2 1-2 0-2-1-2 2-2 1-2-1-2 2-2-1-2 0-2 2-2 0-2 0-2 0-2-1-2 1-2-2-2 2-2-2-2 1-2-1-2 0-2-1-2 0-2-1-2 1-2 3-2 0-2 5-2-1-2-1-2 2-2-3-2-2-2-1-2-5-2 0-2 0-2 0-2 0-2 0-2 0-2 0-2 0-2 0-2 0-2 0-2 1-2 1-2 0-2 0-2 2-2 0-2 0-2 0-2 1-2-1-2-1-2 2-2-2-2 2-2-1-2 0-2 0-2 0-2-1-2 0-2 0-2-1-2 1-2-2-2 0-2 0-2 0-2 1-2 3-2 1-2 1-2 0-2 1-2 0-2 1-2-3-2-1-2 2-2-3-2-4-2 0-2 0-2 0-2 0-2 0-2 0-2 0-2 0-2 3-2 2-2 0-2 3-2 0-2-2-2 3-2-3-2 1-2 1-2-1-2 1-2-4-2 0-2-1-2-2-2 1-2 0-2 0-2-1-2-1-2 5-2 0-2 0-2-5-2 1-2 0-2 1-2 0-2 2-2 0-2-1-2 1-2 1-2 0-2-2-2 2-2 0-2-1-2 0-2 0-2-1-2-1-2-2-2 0-2 1-2 0-2-1-2 0-2 4-2 2-2 2-2-1-2 2-2-1-2-1-2 0-2-2-2 2-2-1-2-3-2-1-2 2-2 0-2 1-2-1-2-1-2 2-2-1-2-1-2 0-2-1-2 3-2 2-2 2-2-4-2-5-2 0-2 0-2 0-2 0-2 0-2 0-2 1-2 1-2 1-2-1-2 1-2 1-2 1-2 0-2 1-2-1-2-1-2 3-2-1-2 1-2-2-2 0-2 0-2 1-2 0-2 0-2-1-2 0-2 0-2 2-2-1-2-1-2-1-2 1-2 0-2 1-2-1-2-2-2 2-2-3-2 1-2-2-2 1-2 1-2 0-2-1-2-1-2 0-2 1-2 1-2 0-2 0-2 1-2 0-2 1-2 1-2 1-2 0-2 0-2-1-2 0-2-1-2 1-2-1-2 0-2 0-2 0-2 0-2 0-2 1-2 0-2 1-2-2-2 0-2 0-2-2-2 1-2 0-2-1-2-1-2-2-2 0-2 0-2 0-2 0-2 0-2 0-2 3-2 1-2 1-2 0-2 1-2 0-2-2-2 0-2 2-2 1-2-1-2-1-2-2-2 1-2-2-2-1-2 1-2 1-2 1-2 0-2-1-2-1-2 0-2 0-2 2-2 0-2 1-2-5-2 0-2 2-2 0-2 1-2 1-2 0-2 0-2-1-2 0-2-1-2-2-2 0-2 4-2 2-2-2-2 0-2 2-2-2-2 0-2-1-2 8-2-4-2-5-2 1-2-1-2 6-2 5-2-7-2-6-2 1-2-1-2 0-2 0-2 0-2 0-2 0-2 0-2 0-2 0-2 0-2 0z" fill="#7070de"/></g></svg>
<svg style="position:absolute;left:613px;top:240px;" width="9" height="15" viewBox="0 0 9 15"><path d="M1.5 1.5 H3.5 Q4.5 1.5 4.5 2.5 Q4.5 1.5 5.5 1.5 H7.5 M4.5 2.5 V12.5 M1.5 13.5 H3.5 Q4.5 13.5 4.5 12.5 Q4.5 13.5 5.5 13.5 H7.5" fill="none" stroke="#fff" stroke-width="2.2"/><path d="M1.5 1.5 H3.5 Q4.5 1.5 4.5 2.5 Q4.5 1.5 5.5 1.5 H7.5 M4.5 2.5 V12.5 M1.5 13.5 H3.5 Q4.5 13.5 4.5 12.5 Q4.5 13.5 5.5 13.5 H7.5" fill="none" stroke="#111" stroke-width="1"/></svg>
<div style="left:1260px;top:339px;width:1.5px;height:117px;background:#333"></div>
<div style="left:200px;top:455px;width:1061px;height:1px;background:#333"></div>
<div style="left:199.3px;top:338.2px;width:1063.2px;height:120px;border:1px solid #dcd9ac;background:transparent"></div>
<div style="left:1264px;top:118px;width:11px;height:408px;background:#f0f0f0"></div>
<div style="left:1265px;top:129px;width:9px;height:384px;background:#cdcdcd"></div>
<svg style="position:absolute;left:1265px;top:120px;" width="9" height="8" viewBox="0 0 9 8"><path d="M2 5.5 L4.5 3 L7 5.5" fill="none" stroke="#333" stroke-width="1.4"/></svg>
<svg style="position:absolute;left:1265px;top:517px;" width="9" height="8" viewBox="0 0 9 8"><path d="M2 2.5 L4.5 5 L7 2.5" fill="none" stroke="#333" stroke-width="1.4"/></svg>
<div style="left:198px;top:526px;width:1066px;height:12px;background:#f0f0f0"></div>
<div style="left:302px;top:527px;width:888px;height:10px;background:#cdcdcd"></div>
<svg style="position:absolute;left:290px;top:527px;" width="9" height="10" viewBox="0 0 9 10"><path d="M6 2 L3 5 L6 8" fill="none" stroke="#333" stroke-width="1.5"/></svg>
<svg style="position:absolute;left:1253px;top:527px;" width="9" height="10" viewBox="0 0 9 10"><path d="M3 2 L6 5 L3 8" fill="none" stroke="#333" stroke-width="1.5"/></svg>
<div style="left:198px;top:538px;width:1077px;height:38px;background:#fafbfc;border-top:1px solid #e0e0e0"></div>
<svg style="position:absolute;left:200px;top:541px;" width="4" height="33" viewBox="0 0 4 33"><rect x="1" y="1" width="2" height="1" fill="#cdcdcd"/><rect x="1" y="4" width="2" height="1" fill="#cdcdcd"/><rect x="1" y="7" width="2" height="1" fill="#cdcdcd"/><rect x="1" y="10" width="2" height="1" fill="#cdcdcd"/><rect x="1" y="13" width="2" height="1" fill="#cdcdcd"/><rect x="1" y="16" width="2" height="1" fill="#cdcdcd"/><rect x="1" y="19" width="2" height="1" fill="#cdcdcd"/><rect x="1" y="22" width="2" height="1" fill="#cdcdcd"/><rect x="1" y="25" width="2" height="1" fill="#cdcdcd"/><rect x="1" y="28" width="2" height="1" fill="#cdcdcd"/><rect x="1" y="31" width="2" height="1" fill="#cdcdcd"/></svg>
<div class="t" style="left:209.40px;top:543.88px;font-size:8.6px;line-height:9.89px;color:#141414;transform:scaleX(0.946);transform-origin:0 0;">Taux du projet (Hz)</div>
<div style="left:282px;top:542px;width:1px;height:12px;background:#ccc"></div>
<div class="t" style="left:287.00px;top:543.88px;font-size:8.6px;line-height:9.89px;color:#141414;transform:scaleX(0.971);transform-origin:0 0;">Se coller à (magnétique)</div>
<div style="left:380px;top:542px;width:1px;height:12px;background:#ccc"></div>
<div style="left:209px;top:557px;width:68px;height:16px;background:#ffffff;border:1px solid #9a9a9a"></div>
<div class="t" style="left:213.00px;top:560.08px;font-size:8.6px;line-height:9.89px;color:#141414;transform:scaleX(0.930);transform-origin:0 0;">48000</div>
<svg style="position:absolute;left:264px;top:560px;" width="9" height="9" viewBox="0 0 9 9"><path d="M1.5 3 L4.5 6 L7.5 3" fill="none" stroke="#555" stroke-width="1"/></svg>
<div style="left:282px;top:558px;width:1px;height:13px;background:#ccc"></div>
<div style="left:287px;top:557px;width:89px;height:16px;background:#e4e4e4;border:1px solid #d4d4d4"></div>
<div class="t" style="left:290.00px;top:560.08px;font-size:8.6px;line-height:9.89px;color:#141414;transform:scaleX(0.930);transform-origin:0 0;">Éteint</div>
<svg style="position:absolute;left:364px;top:560px;" width="9" height="9" viewBox="0 0 9 9"><path d="M1.5 3 L4.5 6 L7.5 3" fill="none" stroke="#555" stroke-width="1"/></svg>
<div style="left:380px;top:558px;width:1px;height:13px;background:#ccc"></div>
<div style="left:386.3px;top:539.6px;width:214.4px;height:14px;background:#e8e8e8;border:1px solid #d8d8d8"></div>
<div class="t" style="left:389.50px;top:541.88px;font-size:8.6px;line-height:9.89px;color:#141414;transform:scaleX(0.923);transform-origin:0 0;">Début et fin de la sélection</div>
<svg style="position:absolute;left:589px;top:542px;" width="9" height="9" viewBox="0 0 9 9"><path d="M1.5 3 L4.5 6 L7.5 3" fill="none" stroke="#555" stroke-width="1"/></svg>
<div style="left:387.2px;top:558px;width:104px;height:13.6px;background:#bcbdc8;border-top:1px solid #8a8a8a;border-left:1px solid #9a9a9a"></div>
<div style="left:389.0px;top:559px;width:7.2px;height:12.4px;background:#d3d5e6"></div>
<div style="left:396.2px;top:559px;width:7.2px;height:12.4px;background:#d3d5e6"></div>
<div style="left:412.3px;top:559px;width:7.2px;height:12.4px;background:#d3d5e6"></div>
<div style="left:419.5px;top:559px;width:7.2px;height:12.4px;background:#d3d5e6"></div>
<div style="left:438.4px;top:559px;width:7.2px;height:12.4px;background:#d3d5e6"></div>
<div style="left:445.6px;top:559px;width:7.2px;height:12.4px;background:#d3d5e6"></div>
<div style="left:455.1px;top:559px;width:7.2px;height:12.4px;background:#d3d5e6"></div>
<div style="left:462.6px;top:559px;width:7.2px;height:12.4px;background:#d3d5e6"></div>
<div style="left:469.8px;top:559px;width:7.2px;height:12.4px;background:#d3d5e6"></div>
<div class="t" style="left:390.21px;top:560.68px;font-size:8.6px;line-height:9.89px;color:#3333a0;">0</div>
<div class="t" style="left:397.41px;top:560.68px;font-size:8.6px;line-height:9.89px;color:#3333a0;">0</div>
<div class="t" style="left:404.91px;top:560.68px;font-size:8.6px;line-height:9.89px;color:#3333a0;">h</div>
<div class="t" style="left:413.51px;top:560.68px;font-size:8.6px;line-height:9.89px;color:#3333a0;">0</div>
<div class="t" style="left:420.71px;top:560.68px;font-size:8.6px;line-height:9.89px;color:#3333a0;">0</div>
<div class="t" style="left:428.92px;top:560.68px;font-size:8.6px;line-height:9.89px;color:#3333a0;">m</div>
<div class="t" style="left:439.61px;top:560.68px;font-size:8.6px;line-height:9.89px;color:#3333a0;">3</div>
<div class="t" style="left:446.81px;top:560.68px;font-size:8.6px;line-height:9.89px;color:#3333a0;">0</div>
<div class="t" style="left:452.51px;top:560.68px;font-size:8.6px;line-height:9.89px;color:#3333a0;">.</div>
<div class="t" style="left:456.31px;top:560.68px;font-size:8.6px;line-height:9.89px;color:#3333a0;">8</div>
<div class="t" style="left:463.81px;top:560.68px;font-size:8.6px;line-height:9.89px;color:#3333a0;">3</div>
<div class="t" style="left:471.01px;top:560.68px;font-size:8.6px;line-height:9.89px;color:#3333a0;">8</div>
<div class="t" style="left:479.85px;top:560.68px;font-size:8.6px;line-height:9.89px;color:#3333a0;">s</div>
<div style="left:484.7px;top:559px;width:6.5px;height:12.4px;background:#b0b0b8"></div>
<svg style="position:absolute;left:485.2px;top:561px;" width="6" height="7" viewBox="0 0 6 7"><path d="M0.5 2 H5.5 L3 5 Z" fill="#111"/></svg>
<div style="left:496px;top:558px;width:104px;height:13.6px;background:#bcbdc8;border-top:1px solid #8a8a8a;border-left:1px solid #9a9a9a"></div>
<div style="left:497.8px;top:559px;width:7.2px;height:12.4px;background:#d3d5e6"></div>
<div style="left:505.0px;top:559px;width:7.2px;height:12.4px;background:#d3d5e6"></div>
<div style="left:521.1px;top:559px;width:7.2px;height:12.4px;background:#d3d5e6"></div>
<div style="left:528.3px;top:559px;width:7.2px;height:12.4px;background:#d3d5e6"></div>
<div style="left:547.2px;top:559px;width:7.2px;height:12.4px;background:#d3d5e6"></div>
<div style="left:554.4px;top:559px;width:7.2px;height:12.4px;background:#d3d5e6"></div>
<div style="left:563.9px;top:559px;width:7.2px;height:12.4px;background:#d3d5e6"></div>
<div style="left:571.4px;top:559px;width:7.2px;height:12.4px;background:#d3d5e6"></div>
<div style="left:578.6px;top:559px;width:7.2px;height:12.4px;background:#d3d5e6"></div>
<div class="t" style="left:499.01px;top:560.68px;font-size:8.6px;line-height:9.89px;color:#3333a0;">0</div>
<div class="t" style="left:506.21px;top:560.68px;font-size:8.6px;line-height:9.89px;color:#3333a0;">0</div>
<div class="t" style="left:513.71px;top:560.68px;font-size:8.6px;line-height:9.89px;color:#3333a0;">h</div>
<div class="t" style="left:522.31px;top:560.68px;font-size:8.6px;line-height:9.89px;color:#3333a0;">0</div>
<div class="t" style="left:529.51px;top:560.68px;font-size:8.6px;line-height:9.89px;color:#3333a0;">0</div>
<div class="t" style="left:537.72px;top:560.68px;font-size:8.6px;line-height:9.89px;color:#3333a0;">m</div>
<div class="t" style="left:548.41px;top:560.68px;font-size:8.6px;line-height:9.89px;color:#3333a0;">3</div>
<div class="t" style="left:555.61px;top:560.68px;font-size:8.6px;line-height:9.89px;color:#3333a0;">0</div>
<div class="t" style="left:561.31px;top:560.68px;font-size:8.6px;line-height:9.89px;color:#3333a0;">.</div>
<div class="t" style="left:565.11px;top:560.68px;font-size:8.6px;line-height:9.89px;color:#3333a0;">8</div>
<div class="t" style="left:572.61px;top:560.68px;font-size:8.6px;line-height:9.89px;color:#3333a0;">3</div>
<div class="t" style="left:579.81px;top:560.68px;font-size:8.6px;line-height:9.89px;color:#3333a0;">8</div>
<div class="t" style="left:588.65px;top:560.68px;font-size:8.6px;line-height:9.89px;color:#3333a0;">s</div>
<div style="left:593.5px;top:559px;width:6.5px;height:12.4px;background:#b0b0b8"></div>
<svg style="position:absolute;left:594px;top:561px;" width="6" height="7" viewBox="0 0 6 7"><path d="M0.5 2 H5.5 L3 5 Z" fill="#111"/></svg>
<div style="left:604px;top:541px;width:1px;height:32px;background:#ddd"></div>
<svg style="position:absolute;left:606px;top:544px;" width="4" height="28" viewBox="0 0 4 28"><rect x="1" y="1" width="2" height="1" fill="#cdcdcd"/><rect x="1" y="4" width="2" height="1" fill="#cdcdcd"/><rect x="1" y="7" width="2" height="1" fill="#cdcdcd"/><rect x="1" y="10" width="2" height="1" fill="#cdcdcd"/><rect x="1" y="13" width="2" height="1" fill="#cdcdcd"/><rect x="1" y="16" width="2" height="1" fill="#cdcdcd"/><rect x="1" y="19" width="2" height="1" fill="#cdcdcd"/><rect x="1" y="22" width="2" height="1" fill="#cdcdcd"/><rect x="1" y="25" width="2" height="1" fill="#cdcdcd"/></svg>
<div style="left:612px;top:541px;width:158px;height:32px;background:#f6f7f9"></div>
<div style="left:613.4px;top:543.9px;width:150.5px;height:24.8px;background:#b9bac4;border-top:1.5px solid #777;border-left:1.5px solid #888"></div>
<div style="left:614.5px;top:545.3px;width:27.0px;height:23.4px;background:#d4d6e6"></div>
<div style="left:661.9px;top:545.3px;width:28.100000000000023px;height:23.4px;background:#d4d6e6"></div>
<div style="left:714.6px;top:545.3px;width:27.399999999999977px;height:23.4px;background:#d4d6e6"></div>
<div style="left:756.8px;top:545.3px;width:7px;height:23.4px;background:#b4b4bc"></div>
<div class="t" style="left:615.42px;top:546.49px;font-size:19px;line-height:21.85px;color:#24248c;">0</div>
<div class="t" style="left:629.72px;top:546.49px;font-size:19px;line-height:21.85px;color:#24248c;">0</div>
<div class="t" style="left:646.72px;top:546.49px;font-size:19px;line-height:21.85px;color:#24248c;">h</div>
<div class="t" style="left:664.02px;top:546.49px;font-size:19px;line-height:21.85px;color:#24248c;">0</div>
<div class="t" style="left:677.32px;top:546.49px;font-size:19px;line-height:21.85px;color:#24248c;">0</div>
<div class="t" style="left:694.39px;top:546.49px;font-size:19px;line-height:21.85px;color:#24248c;">m</div>
<div class="t" style="left:716.32px;top:546.49px;font-size:19px;line-height:21.85px;color:#24248c;">3</div>
<div class="t" style="left:730.52px;top:546.49px;font-size:19px;line-height:21.85px;color:#24248c;">1</div>
<div class="t" style="left:747.15px;top:546.49px;font-size:19px;line-height:21.85px;color:#24248c;">s</div>
<svg style="position:absolute;left:757px;top:552px;" width="7" height="7" viewBox="0 0 7 7"><path d="M0.5 2 H6.5 L3.5 5.5 Z" fill="#111"/></svg>
<div style="left:772px;top:541px;width:1px;height:32px;background:#ddd"></div>
<div style="left:198px;top:576px;width:1077px;height:16px;background:#f7f7f7;border-top:1px solid #dedede"></div>
<div style="left:204px;top:578px;width:1px;height:13px;background:#ddd"></div>
<div class="t" style="left:207.50px;top:580.88px;font-size:8.6px;line-height:9.89px;color:#141414;transform:scaleX(0.930);transform-origin:0 0;">Arrêté.</div>
<div style="left:354px;top:577px;width:1px;height:15px;background:#ddd"></div>
<div class="t" style="left:357.50px;top:580.88px;font-size:8.6px;line-height:9.89px;color:#141414;transform:scaleX(0.932);transform-origin:0 0;">Cliquer et glisser pour sélectionner l'audio</div>
<div style="left:967.5px;top:584px;width:238.5px;height:8px;background:#fff;border:1px solid #bbb;border-bottom:none;border-radius:4px 4px 0 0"></div>
<div style="left:198px;top:591px;width:1077px;height:1px;background:#ddd"></div>
</div></body></html>
